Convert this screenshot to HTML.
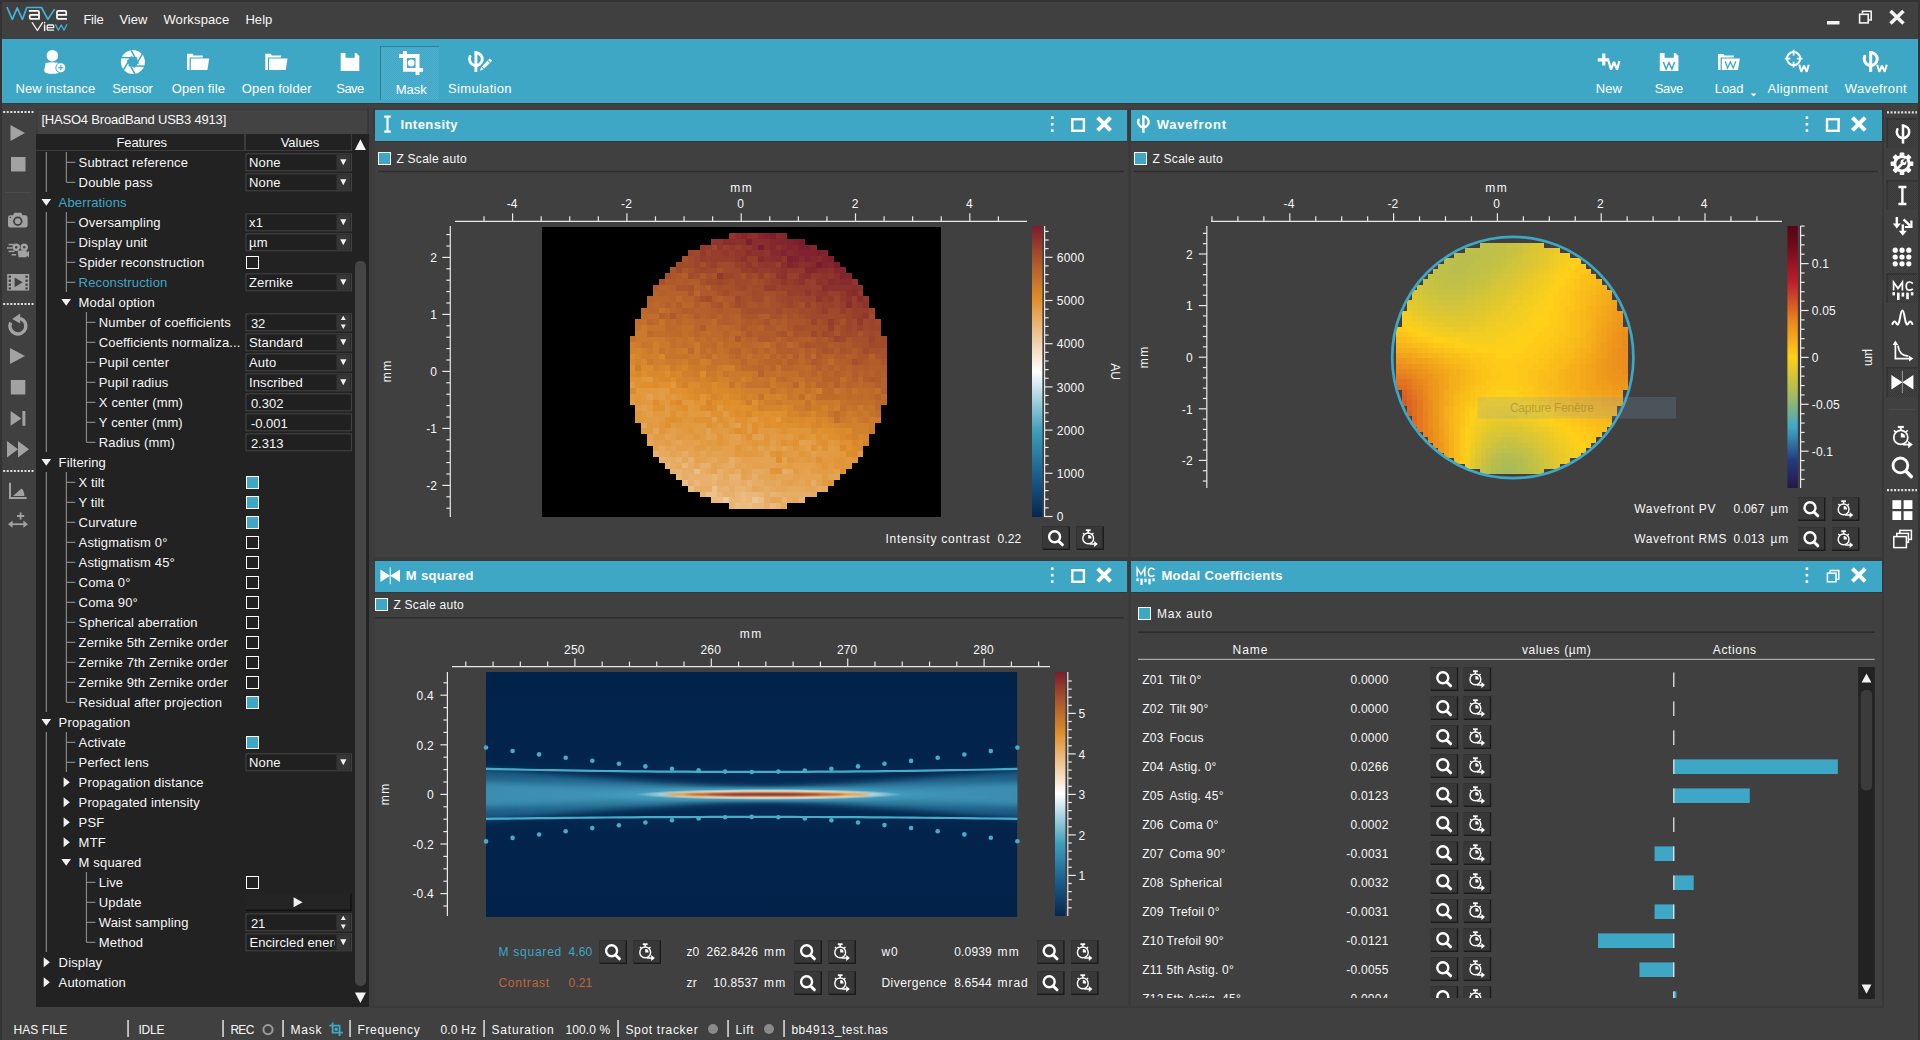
<!DOCTYPE html>
<html><head><meta charset="utf-8"><title>WaveView</title>
<style>
html,body{margin:0;padding:0;background:#404040;}
body{width:1920px;height:1040px;overflow:hidden;position:relative;font-family:"Liberation Sans",sans-serif;}
#r{position:absolute;left:0;top:0;width:1920px;height:1040px;overflow:hidden;}
#r div,#r span,#r svg{position:absolute;}
#r span{white-space:nowrap;display:block;}
</style></head><body><div id="r">
<div style="left:0px;top:0px;width:1920px;height:1040px;background:#333333;"></div><div style="left:2px;top:2px;width:1916px;height:1038px;background:#404040;"></div><div style="left:2px;top:39px;width:1916px;height:64px;background:#3fa7c6;"></div><div style="left:2px;top:103px;width:1916px;height:1.3px;background:#3a3a3a;"></div><div style="left:36px;top:110px;width:331px;height:897px;background:#222222;"></div><div style="left:367px;top:108px;width:2px;height:26px;background:#383838;"></div><div style="left:373px;top:108px;width:2px;height:26px;background:#383838;"></div><div style="left:367px;top:134px;width:2px;height:873px;background:#222222;"></div><div style="left:369px;top:134px;width:6px;height:874px;background:#3d3d3d;"></div><div style="left:36px;top:108.5px;width:331px;height:25.5px;background:#434343;"></div><div style="left:36px;top:108.5px;width:331px;height:1px;background:#3c3c3c;"></div><div style="left:36px;top:108.5px;width:1.5px;height:25.5px;background:#3c3c3c;"></div><div style="left:36px;top:149.6px;width:316px;height:1.6px;background:#3c3c3c;"></div><div style="left:244px;top:134px;width:1.6px;height:16px;background:#3c3c3c;"></div><div style="left:350.6px;top:134px;width:1.6px;height:17px;background:#3c3c3c;"></div><div style="left:355.2px;top:261px;width:10.6px;height:725px;background:#454545;border-radius:5px;"></div><div style="left:375px;top:110px;width:752.5px;height:447px;background:#404040;"></div><div style="left:373px;top:557px;width:756px;height:4px;background:#3a3a3a;"></div><div style="left:1127.5px;top:108px;width:3.5px;height:900px;background:#3a3a3a;"></div><div style="left:375px;top:110px;width:752.3px;height:31px;background:#3fa7c6;"></div><div style="left:375px;top:141px;width:752.3px;height:1px;background:#3a3636;"></div><div style="left:1131px;top:110px;width:751px;height:447px;background:#404040;"></div><div style="left:1131px;top:557px;width:751px;height:4px;background:#3a3a3a;"></div><div style="left:1131px;top:110px;width:751px;height:31px;background:#3fa7c6;"></div><div style="left:1131px;top:141px;width:751px;height:1px;background:#3a3636;"></div><div style="left:375px;top:561px;width:752.5px;height:445px;background:#404040;"></div><div style="left:373px;top:1006px;width:1510px;height:2px;background:#3a3a3a;"></div><div style="left:375px;top:561px;width:752.3px;height:31px;background:#3fa7c6;"></div><div style="left:375px;top:592px;width:752.3px;height:1px;background:#3a3636;"></div><div style="left:1131px;top:561px;width:751px;height:445px;background:#404040;"></div><div style="left:1131px;top:561px;width:751px;height:31px;background:#3fa7c6;"></div><div style="left:1131px;top:592px;width:751px;height:1px;background:#3a3636;"></div><div style="left:1882px;top:108px;width:2px;height:900px;background:#383838;"></div><div style="left:1884px;top:110px;width:34px;height:447px;background:#404040;"></div><div style="left:2px;top:1008px;width:1916px;height:32px;background:#404040;"></div>
<svg style="left:0;top:0" width="1920" height="1040" viewBox="0 0 1920 1040"><defs><pattern id="hatchT" width="2" height="2" patternUnits="userSpaceOnUse"><rect width="2" height="2" fill="#4fb1cf"/><rect width="1" height="1" fill="#3fa7c6"/><rect x="1" y="1" width="1" height="1" fill="#3fa7c6"/></pattern><linearGradient id="cbI" x1="0" y1="1" x2="0" y2="0"><stop offset="0.0%" stop-color="#06264f"/><stop offset="14.9%" stop-color="#1b6090"/><stop offset="29.9%" stop-color="#3fa0bd"/><stop offset="44.8%" stop-color="#cfe6ee"/><stop offset="50.0%" stop-color="#ffffff"/><stop offset="59.7%" stop-color="#f1d2ac"/><stop offset="74.6%" stop-color="#df8f2c"/><stop offset="89.6%" stop-color="#a54f2b"/><stop offset="100.0%" stop-color="#7a1c2e"/></linearGradient><linearGradient id="cbW" x1="0" y1="1" x2="0" y2="0"><stop offset="0.0%" stop-color="#281646"/><stop offset="10.7%" stop-color="#233c82"/><stop offset="23.2%" stop-color="#3fa7c6"/><stop offset="35.7%" stop-color="#a8ba5a"/><stop offset="50.0%" stop-color="#ffd018"/><stop offset="64.3%" stop-color="#e8821e"/><stop offset="78.6%" stop-color="#be1e2d"/><stop offset="92.9%" stop-color="#6e0a19"/><stop offset="100.0%" stop-color="#550514"/></linearGradient><linearGradient id="m2bg" x1="0" y1="0" x2="0" y2="1"><stop offset="0" stop-color="#02224a"/><stop offset="0.35" stop-color="#02244c"/><stop offset="0.5" stop-color="#052e58"/><stop offset="0.65" stop-color="#02244c"/><stop offset="1" stop-color="#02224a"/></linearGradient><linearGradient id="m2haze" x1="0" y1="0" x2="0" y2="1"><stop offset="0" stop-color="#2a86ad" stop-opacity="0"/><stop offset="0.22" stop-color="#1f6f9b" stop-opacity="0.75"/><stop offset="0.5" stop-color="#3a98ba" stop-opacity="0.95"/><stop offset="0.78" stop-color="#1f6f9b" stop-opacity="0.75"/><stop offset="1" stop-color="#2a86ad" stop-opacity="0"/></linearGradient><radialGradient id="m2c1"><stop offset="0" stop-color="#7cc6da" stop-opacity="1"/><stop offset="0.5" stop-color="#4fa9c6" stop-opacity="0.75"/><stop offset="1" stop-color="#3a98ba" stop-opacity="0"/></radialGradient><radialGradient id="m2c2"><stop offset="0" stop-color="#fff" stop-opacity="1"/><stop offset="0.62" stop-color="#fff" stop-opacity="0.95"/><stop offset="1" stop-color="#fff" stop-opacity="0"/></radialGradient><filter id="bl1" x="-10%" y="-100%" width="120%" height="300%"><feGaussianBlur stdDeviation="1.2 0.9"/></filter><clipPath id="m2clip"><rect x="486" y="672" width="531.4" height="245"/></clipPath><linearGradient id="m2hg" x1="0" y1="0" x2="1" y2="0"><stop offset="0" stop-color="#2a78a2" stop-opacity="0.9"/><stop offset="0.25" stop-color="#3a93b6" stop-opacity="0.95"/><stop offset="0.42" stop-color="#5fb6d0"/><stop offset="0.6" stop-color="#5fb6d0"/><stop offset="0.78" stop-color="#3a93b6" stop-opacity="0.95"/><stop offset="1" stop-color="#2a78a2" stop-opacity="0.9"/></linearGradient><filter id="bl2" x="-5%" y="-50%" width="110%" height="200%"><feGaussianBlur stdDeviation="3 3.2"/></filter><pattern id="hatchG" width="2" height="2" patternUnits="userSpaceOnUse"><rect width="2" height="2" fill="#424242"/><rect width="1" height="1" fill="#383838"/><rect x="1" y="1" width="1" height="1" fill="#383838"/></pattern></defs>
<g fill="none" stroke-linejoin="round" stroke-linecap="round"><path d="M7.2 7.6 L12.3 19.4 L17.2 7.8 L22.4 19.4 L26.8 7.5 H41.5 L47.9 19.4 L54.2 9.6" stroke="#41b3d6" stroke-width="1.7"/><path d="M29.6 10.9 H37.8 Q39 10.9 39 12.1 V18.9 H30.8 Q29.7 18.9 29.7 17.8 V15.9 Q29.7 14.8 30.8 14.8 H39" stroke="#fff" stroke-width="1.7"/><path d="M66.2 18.9 H58.2 Q57 18.9 57 17.7 V12.1 Q57 10.9 58.2 10.9 H65 Q66.2 10.9 66.2 12.1 V14.9 H57" stroke="#fff" stroke-width="1.7"/><path d="M32.2 22.6 L37.4 30.5 L42.5 22.6" stroke="#f4f4f4" stroke-width="1.3"/><path d="M44.6 25 V30.6 M44.6 22.4 V22.9" stroke="#f4f4f4" stroke-width="1.4"/><path d="M53.6 30.2 H48.2 Q47.2 30.2 47.2 29.2 V26 Q47.2 25 48.2 25 H52.7 Q53.7 25 53.7 26 V27.6 H47.2" stroke="#f4f4f4" stroke-width="1.3"/><path d="M55.6 24.8 L58.4 30.3 L61.2 25 L64 30.3 L66.8 24.8" stroke="#41b3d6" stroke-width="1.3"/></g>
<rect x="1827" y="21" width="12.5" height="3.5" fill="#f2f2f2" />
<g fill="none" stroke="#f2f2f2" stroke-width="1.6"><path d="M1862.5 13.5 V11.3 H1871.2 V20 H1869"/><rect x="1859.6" y="14.3" width="8.6" height="8.6"/></g>
<path d="M1890.5 11 L1903.5 23.5 M1903.5 11 L1890.5 23.5" stroke="#f2f2f2" stroke-width="3.6" fill="none"/>
<rect x="380" y="46" width="59" height="54" fill="url(#hatchT)" />
<rect x="380" y="46" width="59" height="1" fill="#2f7f98" />
<rect x="380" y="46" width="1" height="54" fill="#2f7f98" />
<g fill="#fff"><circle cx="52.4" cy="55.7" r="5.8"/><path d="M45.6 63 Q52.4 61.6 59.2 63 L60.6 70.6 Q60.6 72.4 58.6 72.9 Q52.4 74.6 46.2 72.9 Q44.2 72.4 44.2 70.6 Z"/><circle cx="60.8" cy="67.7" r="5.4" fill="#3fa7c6"/><circle cx="60.8" cy="67.7" r="4.5"/><path d="M60.8 64.9 V70.5 M58 67.7 H63.6" stroke="#3fa7c6" stroke-width="1.1" fill="none"/></g>
<circle cx="132.9" cy="61.9" r="12.0" fill="#fff"/>
<path d="M144.74 66.21 L128.62 65.75 M135.09 74.31 L127.42 60.12 M123.25 70.00 L131.70 56.27 M121.06 57.59 L137.18 58.05 M130.71 49.49 L138.38 63.68 M142.55 53.80 L134.10 67.53" stroke="#3fa7c6" stroke-width="1.5" fill="none"/>
<polygon points="138.15,63.61 134.05,67.30 128.80,65.59 127.65,60.19 131.75,56.50 137.00,58.21" fill="#3fa7c6"/>
<g fill="#fff" transform="translate(187,53.8)"><path d="M0 0 H5.5 L6.5 1.6 H15.8 V3.6 H2.6 V16.3 H0 Z"/><path d="M3.8 4.6 H22.2 L20.4 16.3 H3.8 Z"/></g>
<g fill="#fff" transform="translate(265.3,53.8)"><path d="M0 0 H5.5 L6.5 1.6 H15.8 V3.6 H2.6 V16.3 H0 Z"/><path d="M3.8 4.6 H22.2 L20.4 16.3 H3.8 Z"/></g>
<g transform="translate(340.7,53)"><path d="M0 0 H15.5 L18.6 3 V18 H0 Z" fill="#fff"/><rect x="4.8" y="0" width="9.2" height="4.8" fill="#3fa7c6"/></g>
<g fill="none" stroke="#fff" stroke-width="3.9"><path d="M405 51 V69.85 H423.1"/><path d="M399.2 55.95 H417.55 V74.9"/></g><circle cx="411.2" cy="63" r="3.4" fill="#fff"/>
<g fill="none" stroke="#fff" stroke-width="2.9"><path d="M475.90 52.75 A6.4 6.4 0 1 1 470.10 56.45" stroke-linecap="round"/><path d="M475.90 51.30 V71.90"/></g>
<g transform="translate(490.9,59.6) rotate(45)"><rect x="-1.7" y="0" width="3.4" height="11" fill="#fff"/><path d="M-1.7 12 H1.7 L0 15.6 Z" fill="#fff"/><rect x="-1.7" y="2.3" width="3.4" height="0.9" fill="#3fa7c6"/></g>
<path d="M1603.8 53.5 V65.6 M1597.7 59.8 H1609.3" stroke="#fff" stroke-width="3.2" fill="none"/>
<path d="M1608.6 61 L1610.98 69.6 L1614.00 62.03 L1617.02 69.6 L1619.3999999999999 61" stroke="#fff" stroke-width="2.2" fill="none" stroke-linejoin="bevel"/>
<g transform="translate(1659.8,53)"><path d="M0 0 H15.5 L18.6 3 V18 H0 Z" fill="#fff"/><rect x="4.8" y="0" width="9.2" height="4.8" fill="#3fa7c6"/><path d="M3.6 9 L6.3 16 L9.2 9.6 L12.1 16 L14.8 9" stroke="#3fa7c6" stroke-width="1.5" fill="none"/></g>
<g transform="translate(1718,54)"><path d="M0 0 H5.5 L6.5 1.6 H15.8 V3.6 H2.6 V16 H0 Z" fill="#fff"/><path d="M3.8 4.6 H21.8 L20 16 H3.8 Z" fill="#fff"/><path d="M7.2 7.2 L9.6 14 L12.4 7.8 L15.2 14 L17.8 7.2" stroke="#3fa7c6" stroke-width="1.3" fill="none"/></g>
<path d="M1750.8 93.5 H1756.4 L1753.6 96.6 Z" fill="#fff"/>
<g fill="none" stroke="#fff"><circle cx="1793.6" cy="58.6" r="6.6" stroke-width="2"/><path d="M1793.6 49.8 V55.4 M1793.6 61.8 V67.4 M1784.8 58.6 H1790.4 M1796.8 58.6 H1802.4" stroke-width="1.8"/></g>
<path d="M1799.2 64.8 L1801.31 71.8 L1804.00 65.64 L1806.69 71.8 L1808.8 64.8" stroke="#fff" stroke-width="2" fill="none" stroke-linejoin="bevel"/>
<g fill="none" stroke="#fff" stroke-width="3"><path d="M1870.70 52.50 A6.5 6.5 0 1 1 1864.81 56.25" stroke-linecap="round"/><path d="M1870.70 51.00 V72.00"/></g>
<path d="M1877.2 64.8 L1879.31 71.8 L1882.00 65.64 L1884.69 71.8 L1886.8 64.8" stroke="#fff" stroke-width="2" fill="none" stroke-linejoin="bevel"/>
<line x1="3.2" y1="112" x2="33.5" y2="112" stroke="#e0e0e0" stroke-width="2.2" stroke-dasharray="2 1.54"/>
<path d="M10.5 125 L25 133 L10.5 141 Z" fill="#a2a2a2"/>
<rect x="11" y="157" width="14.5" height="14.5" fill="#a2a2a2" />
<line x1="5" y1="192.5" x2="31" y2="192.5" stroke="#4b4b4b" stroke-width="1" />
<g fill="#a2a2a2"><path d="M8 217.6 Q8 215.2 10.4 215.2 H13 L14.4 212.8 H21.2 L22.6 215.2 H25.2 Q27.6 215.2 27.6 217.6 V225.2 Q27.6 227.6 25.2 227.6 H10.4 Q8 227.6 8 225.2 Z"/><circle cx="17.8" cy="221.2" r="4.7" fill="#404040"/><circle cx="17.8" cy="221.2" r="2.9"/><rect x="9.6" y="216.8" width="1.4" height="1.2" fill="#404040"/></g>
<g fill="#a2a2a2"><circle cx="16.2" cy="247.2" r="3.7"/><circle cx="24.2" cy="247.2" r="3.7"/><circle cx="16.2" cy="247.2" r="1.2" fill="#404040"/><circle cx="24.2" cy="247.2" r="1.2" fill="#404040"/><path d="M17.6 250.6 H26.6 V252.4 L29 251 V257.3 L26.6 255.8 V257.3 H18.6 Z"/><rect x="8.6" y="243.8" width="5" height="1.5"/><rect x="7" y="247.2" width="5.4" height="1.5"/><rect x="8.6" y="250.6" width="6" height="1.5"/><rect x="11.6" y="254" width="4.6" height="1.5"/></g>
<g fill="#a2a2a2"><rect x="7.2" y="274" width="22" height="16.6"/><g fill="#404040"><rect x="8.6" y="275.6" width="2.4" height="2.2"/><rect x="8.6" y="279.6" width="2.4" height="2.2"/><rect x="8.6" y="283.6" width="2.4" height="2.2"/><rect x="8.6" y="287.4" width="2.4" height="2"/><rect x="25.4" y="275.6" width="2.4" height="2.2"/><rect x="25.4" y="279.6" width="2.4" height="2.2"/><rect x="25.4" y="283.6" width="2.4" height="2.2"/><rect x="25.4" y="287.4" width="2.4" height="2"/><path d="M14.6 277.4 L22.6 282.3 L14.6 287.2 Z"/></g></g>
<line x1="3.2" y1="304" x2="33.5" y2="304" stroke="#e0e0e0" stroke-width="2.2" stroke-dasharray="2 1.54"/>
<path d="M10.7 322.6 A8 8 0 1 0 20 318.3" fill="none" stroke="#a2a2a2" stroke-width="3.4"/><path d="M12.2 318.9 L20.2 313.4 L20.2 323.4 Z" fill="#a2a2a2"/>
<path d="M10 348 L25 356 L10 364 Z" fill="#a2a2a2"/>
<rect x="10.8" y="380" width="14.5" height="14.5" fill="#a2a2a2" />
<path d="M10.6 411 L21.4 418.4 L10.6 425.8 Z" fill="#a2a2a2"/>
<rect x="22.4" y="411" width="3" height="14.8" fill="#a2a2a2" />
<path d="M7 441 L18 449.2 L7 457.4 Z M18 441 L29 449.2 L18 457.4 Z" fill="#a2a2a2"/>
<line x1="3.2" y1="471" x2="33.5" y2="471" stroke="#e0e0e0" stroke-width="2.2" stroke-dasharray="2 1.54"/>
<path d="M10 482.8 V498 H26.6" fill="none" stroke="#a2a2a2" stroke-width="2"/><path d="M13 496 L21.6 488.6 Q24.2 491 24.4 496 Z" fill="#a2a2a2"/>
<g fill="none" stroke="#a2a2a2" stroke-width="1.8"><path d="M10 524.2 H26"/><path d="M20.6 512.4 V519.6 M17 516 H24.2"/></g><path d="M8 524.2 L12.6 520.6 V527.8 Z M28 524.2 L23.4 520.6 V527.8 Z" fill="#a2a2a2"/>
<path d="M354.9 149.9 L360.4 139.2 L365.9 149.9 Z" fill="#f4f4f4"/>
<path d="M354.9 992.4 L360.4 1003 L365.9 992.4 Z" fill="#f4f4f4"/>
<line x1="66.3" y1="162.3" x2="75.3" y2="162.3" stroke="#9a9a9a" stroke-width="1" />
<rect x="246" y="153.8" width="105.4" height="17" fill="#202020" stroke="#454545" stroke-width="1"/>
<rect x="336.4" y="154.7" width="14" height="15.2" fill="#363636" />
<path d="M340.2 159.3 H346.4 L343.3 165.3 Z" fill="#f2f2f2"/>
<line x1="66.3" y1="182.3" x2="75.3" y2="182.3" stroke="#9a9a9a" stroke-width="1" />
<rect x="246" y="173.8" width="105.4" height="17" fill="#202020" stroke="#454545" stroke-width="1"/>
<rect x="336.4" y="174.7" width="14" height="15.2" fill="#363636" />
<path d="M340.2 179.3 H346.4 L343.3 185.3 Z" fill="#f2f2f2"/>
<path d="M41.5 199.10000000000002 H51.099999999999994 L46.3 205.70000000000002 Z" fill="#f2f2f2"/>
<line x1="66.3" y1="222.3" x2="75.3" y2="222.3" stroke="#9a9a9a" stroke-width="1" />
<rect x="246" y="213.8" width="105.4" height="17" fill="#202020" stroke="#454545" stroke-width="1"/>
<rect x="336.4" y="214.7" width="14" height="15.2" fill="#363636" />
<path d="M340.2 219.3 H346.4 L343.3 225.3 Z" fill="#f2f2f2"/>
<line x1="66.3" y1="242.3" x2="75.3" y2="242.3" stroke="#9a9a9a" stroke-width="1" />
<rect x="246" y="233.8" width="105.4" height="17" fill="#202020" stroke="#454545" stroke-width="1"/>
<rect x="336.4" y="234.7" width="14" height="15.2" fill="#363636" />
<path d="M340.2 239.3 H346.4 L343.3 245.3 Z" fill="#f2f2f2"/>
<line x1="66.3" y1="262.3" x2="75.3" y2="262.3" stroke="#9a9a9a" stroke-width="1" />
<rect x="246" y="256" width="13" height="13" fill="#ffffff" shape-rendering="crispEdges"/>
<rect x="247" y="257" width="11" height="11" fill="#222222" shape-rendering="crispEdges"/>
<line x1="66.3" y1="282.3" x2="75.3" y2="282.3" stroke="#9a9a9a" stroke-width="1" />
<rect x="246" y="273.8" width="105.4" height="17" fill="#202020" stroke="#454545" stroke-width="1"/>
<rect x="336.4" y="274.7" width="14" height="15.2" fill="#363636" />
<path d="M340.2 279.3 H346.4 L343.3 285.3 Z" fill="#f2f2f2"/>
<path d="M61.400000000000006 299.1 H71.0 L66.2 305.7 Z" fill="#f2f2f2"/>
<line x1="86.4" y1="322.3" x2="95.4" y2="322.3" stroke="#9a9a9a" stroke-width="1" />
<rect x="246" y="313.8" width="105.4" height="17" fill="#202020" stroke="#454545" stroke-width="1"/>
<rect x="336.4" y="314.7" width="14" height="15.2" fill="#363636" />
<path d="M340.8 320.1 H345.8 L343.3 315.7 Z M340.8 324.5 H345.8 L343.3 328.90000000000003 Z" fill="#f2f2f2"/>
<line x1="86.4" y1="342.3" x2="95.4" y2="342.3" stroke="#9a9a9a" stroke-width="1" />
<rect x="246" y="333.8" width="105.4" height="17" fill="#202020" stroke="#454545" stroke-width="1"/>
<rect x="336.4" y="334.7" width="14" height="15.2" fill="#363636" />
<path d="M340.2 339.3 H346.4 L343.3 345.3 Z" fill="#f2f2f2"/>
<line x1="86.4" y1="362.3" x2="95.4" y2="362.3" stroke="#9a9a9a" stroke-width="1" />
<rect x="246" y="353.8" width="105.4" height="17" fill="#202020" stroke="#454545" stroke-width="1"/>
<rect x="336.4" y="354.7" width="14" height="15.2" fill="#363636" />
<path d="M340.2 359.3 H346.4 L343.3 365.3 Z" fill="#f2f2f2"/>
<line x1="86.4" y1="382.3" x2="95.4" y2="382.3" stroke="#9a9a9a" stroke-width="1" />
<rect x="246" y="373.8" width="105.4" height="17" fill="#202020" stroke="#454545" stroke-width="1"/>
<rect x="336.4" y="374.7" width="14" height="15.2" fill="#363636" />
<path d="M340.2 379.3 H346.4 L343.3 385.3 Z" fill="#f2f2f2"/>
<line x1="86.4" y1="402.3" x2="95.4" y2="402.3" stroke="#9a9a9a" stroke-width="1" />
<rect x="246" y="393.8" width="105.4" height="17" fill="#202020" stroke="#454545" stroke-width="1"/>
<line x1="86.4" y1="422.3" x2="95.4" y2="422.3" stroke="#9a9a9a" stroke-width="1" />
<rect x="246" y="413.8" width="105.4" height="17" fill="#202020" stroke="#454545" stroke-width="1"/>
<line x1="86.4" y1="442.3" x2="95.4" y2="442.3" stroke="#9a9a9a" stroke-width="1" />
<rect x="246" y="433.8" width="105.4" height="17" fill="#202020" stroke="#454545" stroke-width="1"/>
<path d="M41.5 459.1 H51.099999999999994 L46.3 465.7 Z" fill="#f2f2f2"/>
<line x1="66.3" y1="482.3" x2="75.3" y2="482.3" stroke="#9a9a9a" stroke-width="1" />
<rect x="246" y="476" width="13" height="13" fill="#ffffff" shape-rendering="crispEdges"/>
<rect x="247" y="477" width="11" height="11" fill="#3fa7c6" shape-rendering="crispEdges"/>
<line x1="66.3" y1="502.3" x2="75.3" y2="502.3" stroke="#9a9a9a" stroke-width="1" />
<rect x="246" y="496" width="13" height="13" fill="#ffffff" shape-rendering="crispEdges"/>
<rect x="247" y="497" width="11" height="11" fill="#3fa7c6" shape-rendering="crispEdges"/>
<line x1="66.3" y1="522.3" x2="75.3" y2="522.3" stroke="#9a9a9a" stroke-width="1" />
<rect x="246" y="516" width="13" height="13" fill="#ffffff" shape-rendering="crispEdges"/>
<rect x="247" y="517" width="11" height="11" fill="#3fa7c6" shape-rendering="crispEdges"/>
<line x1="66.3" y1="542.3" x2="75.3" y2="542.3" stroke="#9a9a9a" stroke-width="1" />
<rect x="246" y="536" width="13" height="13" fill="#ffffff" shape-rendering="crispEdges"/>
<rect x="247" y="537" width="11" height="11" fill="#222222" shape-rendering="crispEdges"/>
<line x1="66.3" y1="562.3" x2="75.3" y2="562.3" stroke="#9a9a9a" stroke-width="1" />
<rect x="246" y="556" width="13" height="13" fill="#ffffff" shape-rendering="crispEdges"/>
<rect x="247" y="557" width="11" height="11" fill="#222222" shape-rendering="crispEdges"/>
<line x1="66.3" y1="582.3" x2="75.3" y2="582.3" stroke="#9a9a9a" stroke-width="1" />
<rect x="246" y="576" width="13" height="13" fill="#ffffff" shape-rendering="crispEdges"/>
<rect x="247" y="577" width="11" height="11" fill="#222222" shape-rendering="crispEdges"/>
<line x1="66.3" y1="602.3" x2="75.3" y2="602.3" stroke="#9a9a9a" stroke-width="1" />
<rect x="246" y="596" width="13" height="13" fill="#ffffff" shape-rendering="crispEdges"/>
<rect x="247" y="597" width="11" height="11" fill="#222222" shape-rendering="crispEdges"/>
<line x1="66.3" y1="622.3" x2="75.3" y2="622.3" stroke="#9a9a9a" stroke-width="1" />
<rect x="246" y="616" width="13" height="13" fill="#ffffff" shape-rendering="crispEdges"/>
<rect x="247" y="617" width="11" height="11" fill="#222222" shape-rendering="crispEdges"/>
<line x1="66.3" y1="642.3" x2="75.3" y2="642.3" stroke="#9a9a9a" stroke-width="1" />
<rect x="246" y="636" width="13" height="13" fill="#ffffff" shape-rendering="crispEdges"/>
<rect x="247" y="637" width="11" height="11" fill="#222222" shape-rendering="crispEdges"/>
<line x1="66.3" y1="662.3" x2="75.3" y2="662.3" stroke="#9a9a9a" stroke-width="1" />
<rect x="246" y="656" width="13" height="13" fill="#ffffff" shape-rendering="crispEdges"/>
<rect x="247" y="657" width="11" height="11" fill="#222222" shape-rendering="crispEdges"/>
<line x1="66.3" y1="682.3" x2="75.3" y2="682.3" stroke="#9a9a9a" stroke-width="1" />
<rect x="246" y="676" width="13" height="13" fill="#ffffff" shape-rendering="crispEdges"/>
<rect x="247" y="677" width="11" height="11" fill="#222222" shape-rendering="crispEdges"/>
<line x1="66.3" y1="702.3" x2="75.3" y2="702.3" stroke="#9a9a9a" stroke-width="1" />
<rect x="246" y="696" width="13" height="13" fill="#ffffff" shape-rendering="crispEdges"/>
<rect x="247" y="697" width="11" height="11" fill="#3fa7c6" shape-rendering="crispEdges"/>
<path d="M41.5 719.0999999999999 H51.099999999999994 L46.3 725.6999999999999 Z" fill="#f2f2f2"/>
<line x1="66.3" y1="742.3" x2="75.3" y2="742.3" stroke="#9a9a9a" stroke-width="1" />
<rect x="246" y="736" width="13" height="13" fill="#ffffff" shape-rendering="crispEdges"/>
<rect x="247" y="737" width="11" height="11" fill="#3fa7c6" shape-rendering="crispEdges"/>
<line x1="66.3" y1="762.3" x2="75.3" y2="762.3" stroke="#9a9a9a" stroke-width="1" />
<rect x="246" y="753.8" width="105.4" height="17" fill="#202020" stroke="#454545" stroke-width="1"/>
<rect x="336.4" y="754.7" width="14" height="15.2" fill="#363636" />
<path d="M340.2 759.3 H346.4 L343.3 765.3 Z" fill="#f2f2f2"/>
<path d="M63.6 777.3 L69.8 782.3 L63.6 787.3 Z" fill="#f2f2f2"/>
<path d="M63.6 797.3 L69.8 802.3 L63.6 807.3 Z" fill="#f2f2f2"/>
<path d="M63.6 817.3 L69.8 822.3 L63.6 827.3 Z" fill="#f2f2f2"/>
<path d="M63.6 837.3 L69.8 842.3 L63.6 847.3 Z" fill="#f2f2f2"/>
<path d="M61.400000000000006 859.0999999999999 H71.0 L66.2 865.6999999999999 Z" fill="#f2f2f2"/>
<line x1="86.4" y1="882.3" x2="95.4" y2="882.3" stroke="#9a9a9a" stroke-width="1" />
<rect x="246" y="876" width="13" height="13" fill="#ffffff" shape-rendering="crispEdges"/>
<rect x="247" y="877" width="11" height="11" fill="#222222" shape-rendering="crispEdges"/>
<line x1="86.4" y1="902.3" x2="95.4" y2="902.3" stroke="#9a9a9a" stroke-width="1" />
<rect x="246" y="893.8" width="105.4" height="17" fill="#242424" />
<rect x="246" y="909.5" width="105.4" height="1.6" fill="#111" />
<rect x="350.2" y="893.8" width="1.4" height="17" fill="#111" />
<path d="M293.6 897.3 L302.6 902.3 L293.6 907.3 Z" fill="#f2f2f2"/>
<line x1="86.4" y1="922.3" x2="95.4" y2="922.3" stroke="#9a9a9a" stroke-width="1" />
<rect x="246" y="913.8" width="105.4" height="17" fill="#202020" stroke="#454545" stroke-width="1"/>
<rect x="336.4" y="914.7" width="14" height="15.2" fill="#363636" />
<path d="M340.8 920.0999999999999 H345.8 L343.3 915.6999999999999 Z M340.8 924.5 H345.8 L343.3 928.9 Z" fill="#f2f2f2"/>
<line x1="86.4" y1="942.3" x2="95.4" y2="942.3" stroke="#9a9a9a" stroke-width="1" />
<rect x="246" y="933.8" width="105.4" height="17" fill="#202020" stroke="#454545" stroke-width="1"/>
<rect x="336.4" y="934.7" width="14" height="15.2" fill="#363636" />
<path d="M340.2 939.3 H346.4 L343.3 945.3 Z" fill="#f2f2f2"/>
<path d="M43.699999999999996 957.3 L49.9 962.3 L43.699999999999996 967.3 Z" fill="#f2f2f2"/>
<path d="M43.699999999999996 977.3 L49.9 982.3 L43.699999999999996 987.3 Z" fill="#f2f2f2"/>
<line x1="46.3" y1="152" x2="46.3" y2="192" stroke="#9a9a9a" stroke-width="1" />
<line x1="46.3" y1="212" x2="46.3" y2="452" stroke="#9a9a9a" stroke-width="1" />
<line x1="46.3" y1="472" x2="46.3" y2="712" stroke="#9a9a9a" stroke-width="1" />
<line x1="46.3" y1="732" x2="46.3" y2="952" stroke="#9a9a9a" stroke-width="1" />
<line x1="66.3" y1="152" x2="66.3" y2="182.3" stroke="#9a9a9a" stroke-width="1" />
<line x1="66.3" y1="212" x2="66.3" y2="292" stroke="#9a9a9a" stroke-width="1" />
<line x1="66.3" y1="472" x2="66.3" y2="702.3" stroke="#9a9a9a" stroke-width="1" />
<line x1="66.3" y1="732" x2="66.3" y2="772" stroke="#9a9a9a" stroke-width="1" />
<line x1="86.4" y1="312" x2="86.4" y2="442.3" stroke="#9a9a9a" stroke-width="1" />
<line x1="86.4" y1="872" x2="86.4" y2="942.3" stroke="#9a9a9a" stroke-width="1" />
<rect x="1050.9" y="116.4" width="2.6" height="2.6" fill="#fff" />
<rect x="1050.9" y="122.9" width="2.6" height="2.6" fill="#fff" />
<rect x="1050.9" y="129.3" width="2.6" height="2.6" fill="#fff" />
<rect x="1072.3" y="119.2" width="11.6" height="11.6" fill="none" stroke="#fff" stroke-width="2.4"/>
<path d="M1097.6999999999998 117.6 L1110.5 130.4 M1110.5 117.6 L1097.6999999999998 130.4" stroke="#fff" stroke-width="4" fill="none"/>
<path d="M384.2 116.6 H390.8 M384.2 131.6 H390.8 M387.5 116.6 V131.6" stroke="#fff" stroke-width="2.2" fill="none"/>
<rect x="378" y="152" width="13" height="13" fill="#ffffff" shape-rendering="crispEdges"/>
<rect x="379" y="153" width="11" height="11" fill="#3fa7c6" shape-rendering="crispEdges"/>
<line x1="378" y1="171.5" x2="1123.6" y2="171.5" stroke="#2c2c2c" stroke-width="1.4" />
<line x1="455" y1="221.3" x2="1027" y2="221.3" stroke="#e8e8e8" stroke-width="1.2" />
<line x1="484.025" y1="221.3" x2="484.025" y2="216.3" stroke="#e8e8e8" stroke-width="1.2" />
<line x1="512.6" y1="221.3" x2="512.6" y2="213.3" stroke="#e8e8e8" stroke-width="1.2" />
<line x1="541.175" y1="221.3" x2="541.175" y2="216.3" stroke="#e8e8e8" stroke-width="1.2" />
<line x1="569.75" y1="221.3" x2="569.75" y2="216.3" stroke="#e8e8e8" stroke-width="1.2" />
<line x1="598.325" y1="221.3" x2="598.325" y2="216.3" stroke="#e8e8e8" stroke-width="1.2" />
<line x1="626.9" y1="221.3" x2="626.9" y2="213.3" stroke="#e8e8e8" stroke-width="1.2" />
<line x1="655.475" y1="221.3" x2="655.475" y2="216.3" stroke="#e8e8e8" stroke-width="1.2" />
<line x1="684.05" y1="221.3" x2="684.05" y2="216.3" stroke="#e8e8e8" stroke-width="1.2" />
<line x1="712.625" y1="221.3" x2="712.625" y2="216.3" stroke="#e8e8e8" stroke-width="1.2" />
<line x1="741.2" y1="221.3" x2="741.2" y2="213.3" stroke="#e8e8e8" stroke-width="1.2" />
<line x1="769.775" y1="221.3" x2="769.775" y2="216.3" stroke="#e8e8e8" stroke-width="1.2" />
<line x1="798.35" y1="221.3" x2="798.35" y2="216.3" stroke="#e8e8e8" stroke-width="1.2" />
<line x1="826.925" y1="221.3" x2="826.925" y2="216.3" stroke="#e8e8e8" stroke-width="1.2" />
<line x1="855.5" y1="221.3" x2="855.5" y2="213.3" stroke="#e8e8e8" stroke-width="1.2" />
<line x1="884.075" y1="221.3" x2="884.075" y2="216.3" stroke="#e8e8e8" stroke-width="1.2" />
<line x1="912.65" y1="221.3" x2="912.65" y2="216.3" stroke="#e8e8e8" stroke-width="1.2" />
<line x1="941.225" y1="221.3" x2="941.225" y2="216.3" stroke="#e8e8e8" stroke-width="1.2" />
<line x1="969.8" y1="221.3" x2="969.8" y2="213.3" stroke="#e8e8e8" stroke-width="1.2" />
<line x1="998.375" y1="221.3" x2="998.375" y2="216.3" stroke="#e8e8e8" stroke-width="1.2" />
<line x1="450.3" y1="226" x2="450.3" y2="517" stroke="#e8e8e8" stroke-width="1.2" />
<line x1="450.3" y1="508.2" x2="446.3" y2="508.2" stroke="#e8e8e8" stroke-width="1.2" />
<line x1="450.3" y1="496.8" x2="446.3" y2="496.8" stroke="#e8e8e8" stroke-width="1.2" />
<line x1="450.3" y1="485.4" x2="442.3" y2="485.4" stroke="#e8e8e8" stroke-width="1.2" />
<line x1="450.3" y1="474" x2="446.3" y2="474" stroke="#e8e8e8" stroke-width="1.2" />
<line x1="450.3" y1="462.6" x2="446.3" y2="462.6" stroke="#e8e8e8" stroke-width="1.2" />
<line x1="450.3" y1="451.2" x2="446.3" y2="451.2" stroke="#e8e8e8" stroke-width="1.2" />
<line x1="450.3" y1="439.8" x2="446.3" y2="439.8" stroke="#e8e8e8" stroke-width="1.2" />
<line x1="450.3" y1="428.4" x2="442.3" y2="428.4" stroke="#e8e8e8" stroke-width="1.2" />
<line x1="450.3" y1="417" x2="446.3" y2="417" stroke="#e8e8e8" stroke-width="1.2" />
<line x1="450.3" y1="405.6" x2="446.3" y2="405.6" stroke="#e8e8e8" stroke-width="1.2" />
<line x1="450.3" y1="394.2" x2="446.3" y2="394.2" stroke="#e8e8e8" stroke-width="1.2" />
<line x1="450.3" y1="382.8" x2="446.3" y2="382.8" stroke="#e8e8e8" stroke-width="1.2" />
<line x1="450.3" y1="371.4" x2="442.3" y2="371.4" stroke="#e8e8e8" stroke-width="1.2" />
<line x1="450.3" y1="360" x2="446.3" y2="360" stroke="#e8e8e8" stroke-width="1.2" />
<line x1="450.3" y1="348.6" x2="446.3" y2="348.6" stroke="#e8e8e8" stroke-width="1.2" />
<line x1="450.3" y1="337.2" x2="446.3" y2="337.2" stroke="#e8e8e8" stroke-width="1.2" />
<line x1="450.3" y1="325.8" x2="446.3" y2="325.8" stroke="#e8e8e8" stroke-width="1.2" />
<line x1="450.3" y1="314.4" x2="442.3" y2="314.4" stroke="#e8e8e8" stroke-width="1.2" />
<line x1="450.3" y1="303" x2="446.3" y2="303" stroke="#e8e8e8" stroke-width="1.2" />
<line x1="450.3" y1="291.6" x2="446.3" y2="291.6" stroke="#e8e8e8" stroke-width="1.2" />
<line x1="450.3" y1="280.2" x2="446.3" y2="280.2" stroke="#e8e8e8" stroke-width="1.2" />
<line x1="450.3" y1="268.8" x2="446.3" y2="268.8" stroke="#e8e8e8" stroke-width="1.2" />
<line x1="450.3" y1="257.4" x2="442.3" y2="257.4" stroke="#e8e8e8" stroke-width="1.2" />
<line x1="450.3" y1="246" x2="446.3" y2="246" stroke="#e8e8e8" stroke-width="1.2" />
<line x1="450.3" y1="234.6" x2="446.3" y2="234.6" stroke="#e8e8e8" stroke-width="1.2" />
<rect x="542" y="227" width="399" height="290" fill="#000" />
<g transform="translate(542,227.3) scale(5.84,5.74)" shape-rendering="crispEdges"><path fill="#efcb9f" d="M31 47h1.03v1.03h-1.03z"/><path fill="#edc592" d="M36 47h1.03v1.03h-1.03z"/><path fill="#ecc18c" d="M29 45h1.03v1.03h-1.03zM28 46h1.03v1.03h-1.03zM29 46h1.03v1.03h-1.03z"/><path fill="#ecbe86" d="M26 42h1.03v1.03h-1.03zM24 44h1.03v1.03h-1.03zM25 45h1.03v1.03h-1.03zM30 47h1.03v1.03h-1.03zM37 47h1.03v1.03h-1.03zM33 48h1.03v1.03h-1.03zM35 48h1.03v1.03h-1.03z"/><path fill="#ebbb7f" d="M34 46h1.03v1.03h-1.03zM29 47h1.03v1.03h-1.03zM34 47h1.03v1.03h-1.03zM34 48h1.03v1.03h-1.03zM39 48h1.03v1.03h-1.03z"/><path fill="#eab779" d="M24 41h1.03v1.03h-1.03zM23 43h1.03v1.03h-1.03zM29 43h1.03v1.03h-1.03zM26 44h1.03v1.03h-1.03zM27 46h1.03v1.03h-1.03zM30 46h1.03v1.03h-1.03zM33 46h1.03v1.03h-1.03zM35 46h1.03v1.03h-1.03zM36 46h1.03v1.03h-1.03zM32 47h1.03v1.03h-1.03zM33 47h1.03v1.03h-1.03zM35 47h1.03v1.03h-1.03zM36 48h1.03v1.03h-1.03zM37 48h1.03v1.03h-1.03z"/><path fill="#e9b472" d="M21 41h1.03v1.03h-1.03zM23 42h1.03v1.03h-1.03zM32 43h1.03v1.03h-1.03zM33 43h1.03v1.03h-1.03zM29 44h1.03v1.03h-1.03zM35 44h1.03v1.03h-1.03zM31 45h1.03v1.03h-1.03zM33 45h1.03v1.03h-1.03zM34 45h1.03v1.03h-1.03zM37 46h1.03v1.03h-1.03zM39 46h1.03v1.03h-1.03zM41 47h1.03v1.03h-1.03zM44 47h1.03v1.03h-1.03zM32 48h1.03v1.03h-1.03zM40 48h1.03v1.03h-1.03z"/><path fill="#e8b06c" d="M19 39h1.03v1.03h-1.03zM20 40h1.03v1.03h-1.03zM23 40h1.03v1.03h-1.03zM25 40h1.03v1.03h-1.03zM27 41h1.03v1.03h-1.03zM28 41h1.03v1.03h-1.03zM22 42h1.03v1.03h-1.03zM30 42h1.03v1.03h-1.03zM25 43h1.03v1.03h-1.03zM26 43h1.03v1.03h-1.03zM27 43h1.03v1.03h-1.03zM28 43h1.03v1.03h-1.03zM30 43h1.03v1.03h-1.03zM36 43h1.03v1.03h-1.03zM25 44h1.03v1.03h-1.03zM27 44h1.03v1.03h-1.03zM28 44h1.03v1.03h-1.03zM32 44h1.03v1.03h-1.03zM33 44h1.03v1.03h-1.03zM26 45h1.03v1.03h-1.03zM30 45h1.03v1.03h-1.03zM35 45h1.03v1.03h-1.03zM31 46h1.03v1.03h-1.03zM32 46h1.03v1.03h-1.03zM40 46h1.03v1.03h-1.03zM38 48h1.03v1.03h-1.03z"/><path fill="#e7ad66" d="M24 39h1.03v1.03h-1.03zM21 40h1.03v1.03h-1.03zM22 40h1.03v1.03h-1.03zM32 40h1.03v1.03h-1.03zM22 41h1.03v1.03h-1.03zM25 41h1.03v1.03h-1.03zM32 41h1.03v1.03h-1.03zM24 42h1.03v1.03h-1.03zM25 42h1.03v1.03h-1.03zM27 42h1.03v1.03h-1.03zM33 42h1.03v1.03h-1.03zM41 42h1.03v1.03h-1.03zM24 43h1.03v1.03h-1.03zM30 44h1.03v1.03h-1.03zM31 44h1.03v1.03h-1.03zM34 44h1.03v1.03h-1.03zM36 44h1.03v1.03h-1.03zM37 44h1.03v1.03h-1.03zM46 44h1.03v1.03h-1.03zM27 45h1.03v1.03h-1.03zM28 45h1.03v1.03h-1.03zM32 45h1.03v1.03h-1.03zM38 45h1.03v1.03h-1.03zM47 45h1.03v1.03h-1.03zM38 46h1.03v1.03h-1.03zM41 46h1.03v1.03h-1.03zM42 46h1.03v1.03h-1.03zM43 46h1.03v1.03h-1.03zM44 46h1.03v1.03h-1.03zM45 46h1.03v1.03h-1.03zM38 47h1.03v1.03h-1.03zM42 47h1.03v1.03h-1.03z"/><path fill="#e6aa5f" d="M20 38h1.03v1.03h-1.03zM20 39h1.03v1.03h-1.03zM21 39h1.03v1.03h-1.03zM29 40h1.03v1.03h-1.03zM23 41h1.03v1.03h-1.03zM31 41h1.03v1.03h-1.03zM28 42h1.03v1.03h-1.03zM31 42h1.03v1.03h-1.03zM36 42h1.03v1.03h-1.03zM37 42h1.03v1.03h-1.03zM42 42h1.03v1.03h-1.03zM31 43h1.03v1.03h-1.03zM40 44h1.03v1.03h-1.03zM37 45h1.03v1.03h-1.03zM39 45h1.03v1.03h-1.03zM42 45h1.03v1.03h-1.03zM43 45h1.03v1.03h-1.03zM44 45h1.03v1.03h-1.03zM48 45h1.03v1.03h-1.03zM46 46h1.03v1.03h-1.03zM43 47h1.03v1.03h-1.03zM41 48h1.03v1.03h-1.03z"/><path fill="#e5a659" d="M17 34h1.03v1.03h-1.03zM19 35h1.03v1.03h-1.03zM18 37h1.03v1.03h-1.03zM23 37h1.03v1.03h-1.03zM22 38h1.03v1.03h-1.03zM23 39h1.03v1.03h-1.03zM27 39h1.03v1.03h-1.03zM24 40h1.03v1.03h-1.03zM28 40h1.03v1.03h-1.03zM33 40h1.03v1.03h-1.03zM26 41h1.03v1.03h-1.03zM30 41h1.03v1.03h-1.03zM34 41h1.03v1.03h-1.03zM32 42h1.03v1.03h-1.03zM38 42h1.03v1.03h-1.03zM35 43h1.03v1.03h-1.03zM37 43h1.03v1.03h-1.03zM38 43h1.03v1.03h-1.03zM40 43h1.03v1.03h-1.03zM41 43h1.03v1.03h-1.03zM42 43h1.03v1.03h-1.03zM38 44h1.03v1.03h-1.03zM39 44h1.03v1.03h-1.03zM44 44h1.03v1.03h-1.03zM36 45h1.03v1.03h-1.03zM40 45h1.03v1.03h-1.03zM41 45h1.03v1.03h-1.03zM45 45h1.03v1.03h-1.03zM46 45h1.03v1.03h-1.03zM39 47h1.03v1.03h-1.03zM40 47h1.03v1.03h-1.03z"/><path fill="#e4a352" d="M18 29h1.03v1.03h-1.03zM28 35h1.03v1.03h-1.03zM18 36h1.03v1.03h-1.03zM21 36h1.03v1.03h-1.03zM28 36h1.03v1.03h-1.03zM33 36h1.03v1.03h-1.03zM37 36h1.03v1.03h-1.03zM22 37h1.03v1.03h-1.03zM26 37h1.03v1.03h-1.03zM44 37h1.03v1.03h-1.03zM19 38h1.03v1.03h-1.03zM21 38h1.03v1.03h-1.03zM25 38h1.03v1.03h-1.03zM37 38h1.03v1.03h-1.03zM39 38h1.03v1.03h-1.03zM41 38h1.03v1.03h-1.03zM22 39h1.03v1.03h-1.03zM25 39h1.03v1.03h-1.03zM29 39h1.03v1.03h-1.03zM30 39h1.03v1.03h-1.03zM38 39h1.03v1.03h-1.03zM26 40h1.03v1.03h-1.03zM27 40h1.03v1.03h-1.03zM30 40h1.03v1.03h-1.03zM31 40h1.03v1.03h-1.03zM36 40h1.03v1.03h-1.03zM37 40h1.03v1.03h-1.03zM38 40h1.03v1.03h-1.03zM39 40h1.03v1.03h-1.03zM41 40h1.03v1.03h-1.03zM29 41h1.03v1.03h-1.03zM33 41h1.03v1.03h-1.03zM35 41h1.03v1.03h-1.03zM38 41h1.03v1.03h-1.03zM39 41h1.03v1.03h-1.03zM29 42h1.03v1.03h-1.03zM35 42h1.03v1.03h-1.03zM45 42h1.03v1.03h-1.03zM34 43h1.03v1.03h-1.03zM44 43h1.03v1.03h-1.03zM45 43h1.03v1.03h-1.03zM46 43h1.03v1.03h-1.03zM47 43h1.03v1.03h-1.03zM49 43h1.03v1.03h-1.03zM50 43h1.03v1.03h-1.03zM41 44h1.03v1.03h-1.03zM43 44h1.03v1.03h-1.03zM47 44h1.03v1.03h-1.03z"/><path fill="#e4a04c" d="M17 31h1.03v1.03h-1.03zM18 32h1.03v1.03h-1.03zM29 33h1.03v1.03h-1.03zM33 34h1.03v1.03h-1.03zM22 35h1.03v1.03h-1.03zM22 36h1.03v1.03h-1.03zM29 36h1.03v1.03h-1.03zM32 36h1.03v1.03h-1.03zM36 36h1.03v1.03h-1.03zM19 37h1.03v1.03h-1.03zM20 37h1.03v1.03h-1.03zM24 37h1.03v1.03h-1.03zM25 37h1.03v1.03h-1.03zM32 37h1.03v1.03h-1.03zM33 37h1.03v1.03h-1.03zM39 37h1.03v1.03h-1.03zM45 37h1.03v1.03h-1.03zM23 38h1.03v1.03h-1.03zM24 38h1.03v1.03h-1.03zM28 38h1.03v1.03h-1.03zM31 38h1.03v1.03h-1.03zM32 38h1.03v1.03h-1.03zM35 38h1.03v1.03h-1.03zM45 38h1.03v1.03h-1.03zM26 39h1.03v1.03h-1.03zM28 39h1.03v1.03h-1.03zM31 39h1.03v1.03h-1.03zM32 39h1.03v1.03h-1.03zM46 39h1.03v1.03h-1.03zM34 40h1.03v1.03h-1.03zM35 40h1.03v1.03h-1.03zM36 41h1.03v1.03h-1.03zM37 41h1.03v1.03h-1.03zM40 41h1.03v1.03h-1.03zM41 41h1.03v1.03h-1.03zM43 41h1.03v1.03h-1.03zM44 41h1.03v1.03h-1.03zM45 41h1.03v1.03h-1.03zM46 41h1.03v1.03h-1.03zM34 42h1.03v1.03h-1.03zM44 42h1.03v1.03h-1.03zM50 42h1.03v1.03h-1.03zM39 43h1.03v1.03h-1.03zM43 43h1.03v1.03h-1.03zM42 44h1.03v1.03h-1.03zM45 44h1.03v1.03h-1.03z"/><path fill="#e39c46" d="M15 27h1.03v1.03h-1.03zM20 28h1.03v1.03h-1.03zM20 29h1.03v1.03h-1.03zM15 30h1.03v1.03h-1.03zM16 31h1.03v1.03h-1.03zM18 31h1.03v1.03h-1.03zM21 31h1.03v1.03h-1.03zM17 32h1.03v1.03h-1.03zM21 32h1.03v1.03h-1.03zM28 32h1.03v1.03h-1.03zM31 32h1.03v1.03h-1.03zM18 33h1.03v1.03h-1.03zM19 33h1.03v1.03h-1.03zM36 33h1.03v1.03h-1.03zM19 34h1.03v1.03h-1.03zM22 34h1.03v1.03h-1.03zM27 34h1.03v1.03h-1.03zM30 34h1.03v1.03h-1.03zM32 34h1.03v1.03h-1.03zM35 34h1.03v1.03h-1.03zM17 35h1.03v1.03h-1.03zM21 35h1.03v1.03h-1.03zM23 35h1.03v1.03h-1.03zM26 35h1.03v1.03h-1.03zM31 35h1.03v1.03h-1.03zM35 35h1.03v1.03h-1.03zM19 36h1.03v1.03h-1.03zM20 36h1.03v1.03h-1.03zM24 36h1.03v1.03h-1.03zM25 36h1.03v1.03h-1.03zM27 36h1.03v1.03h-1.03zM31 36h1.03v1.03h-1.03zM39 36h1.03v1.03h-1.03zM42 36h1.03v1.03h-1.03zM21 37h1.03v1.03h-1.03zM27 37h1.03v1.03h-1.03zM29 37h1.03v1.03h-1.03zM34 37h1.03v1.03h-1.03zM46 37h1.03v1.03h-1.03zM26 38h1.03v1.03h-1.03zM27 38h1.03v1.03h-1.03zM29 38h1.03v1.03h-1.03zM30 38h1.03v1.03h-1.03zM34 38h1.03v1.03h-1.03zM38 38h1.03v1.03h-1.03zM40 38h1.03v1.03h-1.03zM42 38h1.03v1.03h-1.03zM44 38h1.03v1.03h-1.03zM47 38h1.03v1.03h-1.03zM49 38h1.03v1.03h-1.03zM37 39h1.03v1.03h-1.03zM42 39h1.03v1.03h-1.03zM43 39h1.03v1.03h-1.03zM47 39h1.03v1.03h-1.03zM48 39h1.03v1.03h-1.03zM44 40h1.03v1.03h-1.03zM46 40h1.03v1.03h-1.03zM42 41h1.03v1.03h-1.03zM47 41h1.03v1.03h-1.03zM49 41h1.03v1.03h-1.03zM43 42h1.03v1.03h-1.03zM46 42h1.03v1.03h-1.03zM47 42h1.03v1.03h-1.03zM48 42h1.03v1.03h-1.03zM49 42h1.03v1.03h-1.03zM48 43h1.03v1.03h-1.03zM48 44h1.03v1.03h-1.03z"/><path fill="#e2993f" d="M18 26h1.03v1.03h-1.03zM22 27h1.03v1.03h-1.03zM16 28h1.03v1.03h-1.03zM17 28h1.03v1.03h-1.03zM18 28h1.03v1.03h-1.03zM19 28h1.03v1.03h-1.03zM21 28h1.03v1.03h-1.03zM15 29h1.03v1.03h-1.03zM17 29h1.03v1.03h-1.03zM19 29h1.03v1.03h-1.03zM22 29h1.03v1.03h-1.03zM17 30h1.03v1.03h-1.03zM18 30h1.03v1.03h-1.03zM21 30h1.03v1.03h-1.03zM24 30h1.03v1.03h-1.03zM25 30h1.03v1.03h-1.03zM25 31h1.03v1.03h-1.03zM30 31h1.03v1.03h-1.03zM19 32h1.03v1.03h-1.03zM20 32h1.03v1.03h-1.03zM23 32h1.03v1.03h-1.03zM25 32h1.03v1.03h-1.03zM26 32h1.03v1.03h-1.03zM27 32h1.03v1.03h-1.03zM17 33h1.03v1.03h-1.03zM20 33h1.03v1.03h-1.03zM32 33h1.03v1.03h-1.03zM40 33h1.03v1.03h-1.03zM18 34h1.03v1.03h-1.03zM24 34h1.03v1.03h-1.03zM25 34h1.03v1.03h-1.03zM26 34h1.03v1.03h-1.03zM18 35h1.03v1.03h-1.03zM24 35h1.03v1.03h-1.03zM27 35h1.03v1.03h-1.03zM29 35h1.03v1.03h-1.03zM30 35h1.03v1.03h-1.03zM37 35h1.03v1.03h-1.03zM38 35h1.03v1.03h-1.03zM39 35h1.03v1.03h-1.03zM23 36h1.03v1.03h-1.03zM34 36h1.03v1.03h-1.03zM40 36h1.03v1.03h-1.03zM41 36h1.03v1.03h-1.03zM46 36h1.03v1.03h-1.03zM28 37h1.03v1.03h-1.03zM31 37h1.03v1.03h-1.03zM35 37h1.03v1.03h-1.03zM37 37h1.03v1.03h-1.03zM40 37h1.03v1.03h-1.03zM49 37h1.03v1.03h-1.03zM36 38h1.03v1.03h-1.03zM50 38h1.03v1.03h-1.03zM33 39h1.03v1.03h-1.03zM34 39h1.03v1.03h-1.03zM35 39h1.03v1.03h-1.03zM36 39h1.03v1.03h-1.03zM41 39h1.03v1.03h-1.03zM45 39h1.03v1.03h-1.03zM49 39h1.03v1.03h-1.03zM50 39h1.03v1.03h-1.03zM51 39h1.03v1.03h-1.03zM54 39h1.03v1.03h-1.03zM43 40h1.03v1.03h-1.03zM45 40h1.03v1.03h-1.03zM48 40h1.03v1.03h-1.03zM49 40h1.03v1.03h-1.03zM52 40h1.03v1.03h-1.03z"/><path fill="#e19639" d="M17 26h1.03v1.03h-1.03zM16 29h1.03v1.03h-1.03zM21 29h1.03v1.03h-1.03zM23 29h1.03v1.03h-1.03zM27 29h1.03v1.03h-1.03zM16 30h1.03v1.03h-1.03zM20 30h1.03v1.03h-1.03zM27 30h1.03v1.03h-1.03zM22 31h1.03v1.03h-1.03zM26 31h1.03v1.03h-1.03zM16 32h1.03v1.03h-1.03zM24 32h1.03v1.03h-1.03zM16 33h1.03v1.03h-1.03zM24 33h1.03v1.03h-1.03zM25 33h1.03v1.03h-1.03zM31 33h1.03v1.03h-1.03zM35 33h1.03v1.03h-1.03zM20 34h1.03v1.03h-1.03zM23 34h1.03v1.03h-1.03zM29 34h1.03v1.03h-1.03zM37 34h1.03v1.03h-1.03zM20 35h1.03v1.03h-1.03zM25 35h1.03v1.03h-1.03zM32 35h1.03v1.03h-1.03zM40 35h1.03v1.03h-1.03zM42 35h1.03v1.03h-1.03zM43 35h1.03v1.03h-1.03zM44 35h1.03v1.03h-1.03zM45 35h1.03v1.03h-1.03zM26 36h1.03v1.03h-1.03zM30 36h1.03v1.03h-1.03zM38 36h1.03v1.03h-1.03zM43 36h1.03v1.03h-1.03zM45 36h1.03v1.03h-1.03zM48 36h1.03v1.03h-1.03zM30 37h1.03v1.03h-1.03zM36 37h1.03v1.03h-1.03zM38 37h1.03v1.03h-1.03zM42 37h1.03v1.03h-1.03zM50 37h1.03v1.03h-1.03zM33 38h1.03v1.03h-1.03zM43 38h1.03v1.03h-1.03zM39 39h1.03v1.03h-1.03zM44 39h1.03v1.03h-1.03zM42 40h1.03v1.03h-1.03zM50 40h1.03v1.03h-1.03zM51 40h1.03v1.03h-1.03zM53 40h1.03v1.03h-1.03zM48 41h1.03v1.03h-1.03zM50 41h1.03v1.03h-1.03zM51 41h1.03v1.03h-1.03zM52 41h1.03v1.03h-1.03zM39 42h1.03v1.03h-1.03zM40 42h1.03v1.03h-1.03zM49 44h1.03v1.03h-1.03z"/><path fill="#e09232" d="M15 26h1.03v1.03h-1.03zM16 26h1.03v1.03h-1.03zM16 27h1.03v1.03h-1.03zM20 27h1.03v1.03h-1.03zM21 27h1.03v1.03h-1.03zM23 28h1.03v1.03h-1.03zM24 29h1.03v1.03h-1.03zM26 30h1.03v1.03h-1.03zM30 30h1.03v1.03h-1.03zM36 30h1.03v1.03h-1.03zM19 31h1.03v1.03h-1.03zM20 31h1.03v1.03h-1.03zM23 31h1.03v1.03h-1.03zM32 31h1.03v1.03h-1.03zM34 31h1.03v1.03h-1.03zM22 32h1.03v1.03h-1.03zM29 32h1.03v1.03h-1.03zM30 32h1.03v1.03h-1.03zM32 32h1.03v1.03h-1.03zM36 32h1.03v1.03h-1.03zM38 32h1.03v1.03h-1.03zM40 32h1.03v1.03h-1.03zM21 33h1.03v1.03h-1.03zM23 33h1.03v1.03h-1.03zM26 33h1.03v1.03h-1.03zM27 33h1.03v1.03h-1.03zM28 33h1.03v1.03h-1.03zM30 33h1.03v1.03h-1.03zM33 33h1.03v1.03h-1.03zM34 33h1.03v1.03h-1.03zM37 33h1.03v1.03h-1.03zM39 33h1.03v1.03h-1.03zM21 34h1.03v1.03h-1.03zM28 34h1.03v1.03h-1.03zM31 34h1.03v1.03h-1.03zM34 34h1.03v1.03h-1.03zM39 34h1.03v1.03h-1.03zM41 34h1.03v1.03h-1.03zM34 35h1.03v1.03h-1.03zM41 35h1.03v1.03h-1.03zM47 35h1.03v1.03h-1.03zM35 36h1.03v1.03h-1.03zM44 36h1.03v1.03h-1.03zM41 37h1.03v1.03h-1.03zM43 37h1.03v1.03h-1.03zM47 37h1.03v1.03h-1.03zM51 37h1.03v1.03h-1.03zM52 37h1.03v1.03h-1.03zM46 38h1.03v1.03h-1.03zM48 38h1.03v1.03h-1.03zM52 38h1.03v1.03h-1.03zM40 39h1.03v1.03h-1.03zM47 40h1.03v1.03h-1.03zM51 42h1.03v1.03h-1.03z"/><path fill="#df8f2c" d="M15 24h1.03v1.03h-1.03zM17 25h1.03v1.03h-1.03zM21 25h1.03v1.03h-1.03zM22 26h1.03v1.03h-1.03zM17 27h1.03v1.03h-1.03zM18 27h1.03v1.03h-1.03zM22 28h1.03v1.03h-1.03zM24 28h1.03v1.03h-1.03zM25 29h1.03v1.03h-1.03zM28 29h1.03v1.03h-1.03zM31 29h1.03v1.03h-1.03zM22 30h1.03v1.03h-1.03zM29 30h1.03v1.03h-1.03zM32 30h1.03v1.03h-1.03zM33 30h1.03v1.03h-1.03zM24 31h1.03v1.03h-1.03zM31 31h1.03v1.03h-1.03zM33 31h1.03v1.03h-1.03zM35 31h1.03v1.03h-1.03zM34 32h1.03v1.03h-1.03zM37 32h1.03v1.03h-1.03zM39 32h1.03v1.03h-1.03zM41 32h1.03v1.03h-1.03zM22 33h1.03v1.03h-1.03zM38 33h1.03v1.03h-1.03zM36 34h1.03v1.03h-1.03zM38 34h1.03v1.03h-1.03zM40 34h1.03v1.03h-1.03zM42 34h1.03v1.03h-1.03zM43 34h1.03v1.03h-1.03zM45 34h1.03v1.03h-1.03zM33 35h1.03v1.03h-1.03zM36 35h1.03v1.03h-1.03zM48 35h1.03v1.03h-1.03zM49 35h1.03v1.03h-1.03zM47 36h1.03v1.03h-1.03zM49 36h1.03v1.03h-1.03zM50 36h1.03v1.03h-1.03zM48 37h1.03v1.03h-1.03zM40 40h1.03v1.03h-1.03z"/><path fill="#dc8c2c" d="M15 22h1.03v1.03h-1.03zM17 24h1.03v1.03h-1.03zM18 24h1.03v1.03h-1.03zM15 25h1.03v1.03h-1.03zM27 25h1.03v1.03h-1.03zM19 26h1.03v1.03h-1.03zM19 27h1.03v1.03h-1.03zM25 27h1.03v1.03h-1.03zM26 27h1.03v1.03h-1.03zM29 27h1.03v1.03h-1.03zM15 28h1.03v1.03h-1.03zM25 28h1.03v1.03h-1.03zM29 28h1.03v1.03h-1.03zM26 29h1.03v1.03h-1.03zM19 30h1.03v1.03h-1.03zM31 30h1.03v1.03h-1.03zM27 31h1.03v1.03h-1.03zM29 31h1.03v1.03h-1.03zM36 31h1.03v1.03h-1.03zM33 32h1.03v1.03h-1.03zM41 33h1.03v1.03h-1.03zM43 33h1.03v1.03h-1.03zM45 33h1.03v1.03h-1.03zM46 33h1.03v1.03h-1.03zM44 34h1.03v1.03h-1.03zM48 34h1.03v1.03h-1.03zM46 35h1.03v1.03h-1.03zM50 35h1.03v1.03h-1.03zM52 35h1.03v1.03h-1.03zM54 37h1.03v1.03h-1.03zM53 38h1.03v1.03h-1.03zM52 39h1.03v1.03h-1.03zM53 39h1.03v1.03h-1.03z"/><path fill="#d9892c" d="M20 22h1.03v1.03h-1.03zM15 23h1.03v1.03h-1.03zM17 23h1.03v1.03h-1.03zM21 24h1.03v1.03h-1.03zM16 25h1.03v1.03h-1.03zM18 25h1.03v1.03h-1.03zM19 25h1.03v1.03h-1.03zM20 25h1.03v1.03h-1.03zM23 25h1.03v1.03h-1.03zM20 26h1.03v1.03h-1.03zM21 26h1.03v1.03h-1.03zM23 27h1.03v1.03h-1.03zM26 28h1.03v1.03h-1.03zM27 28h1.03v1.03h-1.03zM30 28h1.03v1.03h-1.03zM31 28h1.03v1.03h-1.03zM30 29h1.03v1.03h-1.03zM32 29h1.03v1.03h-1.03zM33 29h1.03v1.03h-1.03zM23 30h1.03v1.03h-1.03zM34 30h1.03v1.03h-1.03zM28 31h1.03v1.03h-1.03zM41 31h1.03v1.03h-1.03zM35 32h1.03v1.03h-1.03zM46 32h1.03v1.03h-1.03zM42 33h1.03v1.03h-1.03zM44 33h1.03v1.03h-1.03zM48 33h1.03v1.03h-1.03zM46 34h1.03v1.03h-1.03zM49 34h1.03v1.03h-1.03zM51 35h1.03v1.03h-1.03zM51 36h1.03v1.03h-1.03zM54 36h1.03v1.03h-1.03zM53 37h1.03v1.03h-1.03zM51 38h1.03v1.03h-1.03zM54 38h1.03v1.03h-1.03z"/><path fill="#d6852c" d="M16 21h1.03v1.03h-1.03zM16 22h1.03v1.03h-1.03zM20 24h1.03v1.03h-1.03zM24 24h1.03v1.03h-1.03zM22 25h1.03v1.03h-1.03zM23 26h1.03v1.03h-1.03zM24 26h1.03v1.03h-1.03zM25 26h1.03v1.03h-1.03zM27 26h1.03v1.03h-1.03zM27 27h1.03v1.03h-1.03zM28 27h1.03v1.03h-1.03zM30 27h1.03v1.03h-1.03zM31 27h1.03v1.03h-1.03zM28 28h1.03v1.03h-1.03zM32 28h1.03v1.03h-1.03zM33 28h1.03v1.03h-1.03zM29 29h1.03v1.03h-1.03zM35 29h1.03v1.03h-1.03zM38 29h1.03v1.03h-1.03zM40 29h1.03v1.03h-1.03zM28 30h1.03v1.03h-1.03zM37 30h1.03v1.03h-1.03zM38 31h1.03v1.03h-1.03zM39 31h1.03v1.03h-1.03zM40 31h1.03v1.03h-1.03zM42 31h1.03v1.03h-1.03zM42 32h1.03v1.03h-1.03zM43 32h1.03v1.03h-1.03zM47 33h1.03v1.03h-1.03zM47 34h1.03v1.03h-1.03zM50 34h1.03v1.03h-1.03zM52 36h1.03v1.03h-1.03zM55 36h1.03v1.03h-1.03z"/><path fill="#d3822c" d="M15 21h1.03v1.03h-1.03zM16 23h1.03v1.03h-1.03zM19 24h1.03v1.03h-1.03zM23 24h1.03v1.03h-1.03zM26 26h1.03v1.03h-1.03zM30 26h1.03v1.03h-1.03zM31 26h1.03v1.03h-1.03zM34 26h1.03v1.03h-1.03zM24 27h1.03v1.03h-1.03zM33 27h1.03v1.03h-1.03zM34 28h1.03v1.03h-1.03zM34 29h1.03v1.03h-1.03zM36 29h1.03v1.03h-1.03zM39 29h1.03v1.03h-1.03zM41 29h1.03v1.03h-1.03zM37 31h1.03v1.03h-1.03zM48 31h1.03v1.03h-1.03zM45 32h1.03v1.03h-1.03zM49 33h1.03v1.03h-1.03zM53 33h1.03v1.03h-1.03zM51 34h1.03v1.03h-1.03zM53 34h1.03v1.03h-1.03zM54 34h1.03v1.03h-1.03zM53 35h1.03v1.03h-1.03zM54 35h1.03v1.03h-1.03zM55 35h1.03v1.03h-1.03zM53 36h1.03v1.03h-1.03zM55 37h1.03v1.03h-1.03z"/><path fill="#d07f2c" d="M15 20h1.03v1.03h-1.03zM19 20h1.03v1.03h-1.03zM17 21h1.03v1.03h-1.03zM19 21h1.03v1.03h-1.03zM17 22h1.03v1.03h-1.03zM18 22h1.03v1.03h-1.03zM19 22h1.03v1.03h-1.03zM19 23h1.03v1.03h-1.03zM20 23h1.03v1.03h-1.03zM24 23h1.03v1.03h-1.03zM27 23h1.03v1.03h-1.03zM31 24h1.03v1.03h-1.03zM32 24h1.03v1.03h-1.03zM24 25h1.03v1.03h-1.03zM25 25h1.03v1.03h-1.03zM30 25h1.03v1.03h-1.03zM28 26h1.03v1.03h-1.03zM35 28h1.03v1.03h-1.03zM36 28h1.03v1.03h-1.03zM37 28h1.03v1.03h-1.03zM38 28h1.03v1.03h-1.03zM47 28h1.03v1.03h-1.03zM45 29h1.03v1.03h-1.03zM38 30h1.03v1.03h-1.03zM39 30h1.03v1.03h-1.03zM41 30h1.03v1.03h-1.03zM42 30h1.03v1.03h-1.03zM43 30h1.03v1.03h-1.03zM44 30h1.03v1.03h-1.03zM46 30h1.03v1.03h-1.03zM50 31h1.03v1.03h-1.03zM44 32h1.03v1.03h-1.03zM47 32h1.03v1.03h-1.03zM48 32h1.03v1.03h-1.03zM52 34h1.03v1.03h-1.03zM55 34h1.03v1.03h-1.03z"/><path fill="#ce7c2c" d="M16 18h1.03v1.03h-1.03zM16 20h1.03v1.03h-1.03zM24 21h1.03v1.03h-1.03zM21 23h1.03v1.03h-1.03zM23 23h1.03v1.03h-1.03zM28 23h1.03v1.03h-1.03zM16 24h1.03v1.03h-1.03zM22 24h1.03v1.03h-1.03zM25 24h1.03v1.03h-1.03zM27 24h1.03v1.03h-1.03zM30 24h1.03v1.03h-1.03zM26 25h1.03v1.03h-1.03zM29 26h1.03v1.03h-1.03zM32 26h1.03v1.03h-1.03zM35 26h1.03v1.03h-1.03zM39 27h1.03v1.03h-1.03zM41 28h1.03v1.03h-1.03zM35 30h1.03v1.03h-1.03zM50 30h1.03v1.03h-1.03zM43 31h1.03v1.03h-1.03zM44 31h1.03v1.03h-1.03zM46 31h1.03v1.03h-1.03zM47 31h1.03v1.03h-1.03zM52 32h1.03v1.03h-1.03zM52 33h1.03v1.03h-1.03zM56 33h1.03v1.03h-1.03zM56 34h1.03v1.03h-1.03z"/><path fill="#cb792c" d="M17 17h1.03v1.03h-1.03zM17 18h1.03v1.03h-1.03zM16 19h1.03v1.03h-1.03zM17 19h1.03v1.03h-1.03zM18 19h1.03v1.03h-1.03zM19 19h1.03v1.03h-1.03zM20 19h1.03v1.03h-1.03zM20 20h1.03v1.03h-1.03zM21 20h1.03v1.03h-1.03zM26 20h1.03v1.03h-1.03zM18 21h1.03v1.03h-1.03zM21 21h1.03v1.03h-1.03zM23 21h1.03v1.03h-1.03zM26 21h1.03v1.03h-1.03zM25 22h1.03v1.03h-1.03zM26 22h1.03v1.03h-1.03zM29 22h1.03v1.03h-1.03zM18 23h1.03v1.03h-1.03zM22 23h1.03v1.03h-1.03zM26 24h1.03v1.03h-1.03zM28 25h1.03v1.03h-1.03zM29 25h1.03v1.03h-1.03zM32 25h1.03v1.03h-1.03zM33 25h1.03v1.03h-1.03zM34 25h1.03v1.03h-1.03zM35 25h1.03v1.03h-1.03zM33 26h1.03v1.03h-1.03zM39 26h1.03v1.03h-1.03zM34 27h1.03v1.03h-1.03zM44 27h1.03v1.03h-1.03zM40 28h1.03v1.03h-1.03zM43 28h1.03v1.03h-1.03zM44 28h1.03v1.03h-1.03zM46 28h1.03v1.03h-1.03zM43 29h1.03v1.03h-1.03zM46 29h1.03v1.03h-1.03zM40 30h1.03v1.03h-1.03zM47 30h1.03v1.03h-1.03zM48 30h1.03v1.03h-1.03zM49 30h1.03v1.03h-1.03zM49 31h1.03v1.03h-1.03zM54 31h1.03v1.03h-1.03zM53 32h1.03v1.03h-1.03zM55 32h1.03v1.03h-1.03zM51 33h1.03v1.03h-1.03zM54 33h1.03v1.03h-1.03zM57 33h1.03v1.03h-1.03zM56 35h1.03v1.03h-1.03z"/><path fill="#c8752c" d="M20 16h1.03v1.03h-1.03zM25 19h1.03v1.03h-1.03zM17 20h1.03v1.03h-1.03zM18 20h1.03v1.03h-1.03zM22 21h1.03v1.03h-1.03zM21 22h1.03v1.03h-1.03zM22 22h1.03v1.03h-1.03zM23 22h1.03v1.03h-1.03zM25 23h1.03v1.03h-1.03zM26 23h1.03v1.03h-1.03zM28 24h1.03v1.03h-1.03zM29 24h1.03v1.03h-1.03zM31 25h1.03v1.03h-1.03zM36 25h1.03v1.03h-1.03zM37 26h1.03v1.03h-1.03zM32 27h1.03v1.03h-1.03zM40 27h1.03v1.03h-1.03zM41 27h1.03v1.03h-1.03zM42 28h1.03v1.03h-1.03zM50 28h1.03v1.03h-1.03zM37 29h1.03v1.03h-1.03zM42 29h1.03v1.03h-1.03zM45 31h1.03v1.03h-1.03zM52 31h1.03v1.03h-1.03zM56 31h1.03v1.03h-1.03zM49 32h1.03v1.03h-1.03zM51 32h1.03v1.03h-1.03zM54 32h1.03v1.03h-1.03zM55 33h1.03v1.03h-1.03z"/><path fill="#c5722c" d="M20 14h1.03v1.03h-1.03zM17 16h1.03v1.03h-1.03zM16 17h1.03v1.03h-1.03zM18 17h1.03v1.03h-1.03zM19 17h1.03v1.03h-1.03zM20 17h1.03v1.03h-1.03zM15 19h1.03v1.03h-1.03zM21 19h1.03v1.03h-1.03zM23 19h1.03v1.03h-1.03zM23 20h1.03v1.03h-1.03zM25 20h1.03v1.03h-1.03zM30 20h1.03v1.03h-1.03zM20 21h1.03v1.03h-1.03zM28 21h1.03v1.03h-1.03zM30 21h1.03v1.03h-1.03zM24 22h1.03v1.03h-1.03zM27 22h1.03v1.03h-1.03zM30 22h1.03v1.03h-1.03zM31 22h1.03v1.03h-1.03zM35 22h1.03v1.03h-1.03zM29 23h1.03v1.03h-1.03zM30 23h1.03v1.03h-1.03zM31 23h1.03v1.03h-1.03zM33 24h1.03v1.03h-1.03zM40 24h1.03v1.03h-1.03zM40 25h1.03v1.03h-1.03zM36 26h1.03v1.03h-1.03zM38 26h1.03v1.03h-1.03zM43 26h1.03v1.03h-1.03zM44 26h1.03v1.03h-1.03zM35 27h1.03v1.03h-1.03zM36 27h1.03v1.03h-1.03zM37 27h1.03v1.03h-1.03zM42 27h1.03v1.03h-1.03zM46 27h1.03v1.03h-1.03zM39 28h1.03v1.03h-1.03zM45 28h1.03v1.03h-1.03zM53 28h1.03v1.03h-1.03zM45 30h1.03v1.03h-1.03zM51 30h1.03v1.03h-1.03zM53 31h1.03v1.03h-1.03zM55 31h1.03v1.03h-1.03zM56 32h1.03v1.03h-1.03z"/><path fill="#c26f2c" d="M18 15h1.03v1.03h-1.03zM19 15h1.03v1.03h-1.03zM16 16h1.03v1.03h-1.03zM24 17h1.03v1.03h-1.03zM25 17h1.03v1.03h-1.03zM19 18h1.03v1.03h-1.03zM20 18h1.03v1.03h-1.03zM24 18h1.03v1.03h-1.03zM28 18h1.03v1.03h-1.03zM22 19h1.03v1.03h-1.03zM24 19h1.03v1.03h-1.03zM27 19h1.03v1.03h-1.03zM29 19h1.03v1.03h-1.03zM22 20h1.03v1.03h-1.03zM24 20h1.03v1.03h-1.03zM38 20h1.03v1.03h-1.03zM31 21h1.03v1.03h-1.03zM38 22h1.03v1.03h-1.03zM32 23h1.03v1.03h-1.03zM33 23h1.03v1.03h-1.03zM35 23h1.03v1.03h-1.03zM36 23h1.03v1.03h-1.03zM38 25h1.03v1.03h-1.03zM39 25h1.03v1.03h-1.03zM41 25h1.03v1.03h-1.03zM42 25h1.03v1.03h-1.03zM43 25h1.03v1.03h-1.03zM42 26h1.03v1.03h-1.03zM51 26h1.03v1.03h-1.03zM38 27h1.03v1.03h-1.03zM51 28h1.03v1.03h-1.03zM57 28h1.03v1.03h-1.03zM44 29h1.03v1.03h-1.03zM51 29h1.03v1.03h-1.03zM52 30h1.03v1.03h-1.03zM53 30h1.03v1.03h-1.03zM55 30h1.03v1.03h-1.03zM56 30h1.03v1.03h-1.03zM51 31h1.03v1.03h-1.03zM50 32h1.03v1.03h-1.03zM57 32h1.03v1.03h-1.03zM50 33h1.03v1.03h-1.03z"/><path fill="#bf6c2b" d="M21 14h1.03v1.03h-1.03zM17 15h1.03v1.03h-1.03zM22 16h1.03v1.03h-1.03zM24 16h1.03v1.03h-1.03zM29 16h1.03v1.03h-1.03zM23 17h1.03v1.03h-1.03zM21 18h1.03v1.03h-1.03zM22 18h1.03v1.03h-1.03zM25 18h1.03v1.03h-1.03zM27 18h1.03v1.03h-1.03zM26 19h1.03v1.03h-1.03zM30 19h1.03v1.03h-1.03zM32 19h1.03v1.03h-1.03zM27 20h1.03v1.03h-1.03zM28 20h1.03v1.03h-1.03zM32 20h1.03v1.03h-1.03zM33 20h1.03v1.03h-1.03zM37 20h1.03v1.03h-1.03zM27 21h1.03v1.03h-1.03zM29 21h1.03v1.03h-1.03zM34 21h1.03v1.03h-1.03zM28 22h1.03v1.03h-1.03zM32 22h1.03v1.03h-1.03zM34 22h1.03v1.03h-1.03zM49 23h1.03v1.03h-1.03zM34 24h1.03v1.03h-1.03zM35 24h1.03v1.03h-1.03zM38 24h1.03v1.03h-1.03zM45 24h1.03v1.03h-1.03zM47 25h1.03v1.03h-1.03zM40 26h1.03v1.03h-1.03zM47 26h1.03v1.03h-1.03zM45 27h1.03v1.03h-1.03zM49 27h1.03v1.03h-1.03zM48 28h1.03v1.03h-1.03zM54 28h1.03v1.03h-1.03zM55 28h1.03v1.03h-1.03zM47 29h1.03v1.03h-1.03zM48 29h1.03v1.03h-1.03zM49 29h1.03v1.03h-1.03zM50 29h1.03v1.03h-1.03zM52 29h1.03v1.03h-1.03zM53 29h1.03v1.03h-1.03zM55 29h1.03v1.03h-1.03zM58 29h1.03v1.03h-1.03zM54 30h1.03v1.03h-1.03z"/><path fill="#bc692b" d="M23 12h1.03v1.03h-1.03zM19 13h1.03v1.03h-1.03zM17 14h1.03v1.03h-1.03zM24 15h1.03v1.03h-1.03zM19 16h1.03v1.03h-1.03zM21 16h1.03v1.03h-1.03zM25 16h1.03v1.03h-1.03zM21 17h1.03v1.03h-1.03zM22 17h1.03v1.03h-1.03zM28 17h1.03v1.03h-1.03zM29 17h1.03v1.03h-1.03zM31 17h1.03v1.03h-1.03zM18 18h1.03v1.03h-1.03zM23 18h1.03v1.03h-1.03zM29 18h1.03v1.03h-1.03zM30 18h1.03v1.03h-1.03zM32 18h1.03v1.03h-1.03zM33 18h1.03v1.03h-1.03zM28 19h1.03v1.03h-1.03zM29 20h1.03v1.03h-1.03zM31 20h1.03v1.03h-1.03zM36 20h1.03v1.03h-1.03zM42 20h1.03v1.03h-1.03zM25 21h1.03v1.03h-1.03zM35 21h1.03v1.03h-1.03zM37 21h1.03v1.03h-1.03zM39 21h1.03v1.03h-1.03zM36 22h1.03v1.03h-1.03zM37 22h1.03v1.03h-1.03zM40 22h1.03v1.03h-1.03zM42 22h1.03v1.03h-1.03zM44 22h1.03v1.03h-1.03zM46 22h1.03v1.03h-1.03zM37 23h1.03v1.03h-1.03zM41 23h1.03v1.03h-1.03zM44 23h1.03v1.03h-1.03zM36 24h1.03v1.03h-1.03zM43 24h1.03v1.03h-1.03zM44 24h1.03v1.03h-1.03zM45 25h1.03v1.03h-1.03zM41 26h1.03v1.03h-1.03zM45 26h1.03v1.03h-1.03zM46 26h1.03v1.03h-1.03zM54 26h1.03v1.03h-1.03zM51 27h1.03v1.03h-1.03zM54 27h1.03v1.03h-1.03zM49 28h1.03v1.03h-1.03zM52 28h1.03v1.03h-1.03zM56 28h1.03v1.03h-1.03zM54 29h1.03v1.03h-1.03zM56 29h1.03v1.03h-1.03zM57 30h1.03v1.03h-1.03zM58 30h1.03v1.03h-1.03zM57 31h1.03v1.03h-1.03z"/><path fill="#b9652b" d="M26 11h1.03v1.03h-1.03zM19 12h1.03v1.03h-1.03zM20 12h1.03v1.03h-1.03zM21 12h1.03v1.03h-1.03zM18 13h1.03v1.03h-1.03zM20 13h1.03v1.03h-1.03zM22 13h1.03v1.03h-1.03zM24 13h1.03v1.03h-1.03zM25 13h1.03v1.03h-1.03zM18 14h1.03v1.03h-1.03zM19 14h1.03v1.03h-1.03zM22 14h1.03v1.03h-1.03zM21 15h1.03v1.03h-1.03zM23 15h1.03v1.03h-1.03zM25 15h1.03v1.03h-1.03zM18 16h1.03v1.03h-1.03zM23 16h1.03v1.03h-1.03zM26 16h1.03v1.03h-1.03zM27 16h1.03v1.03h-1.03zM28 16h1.03v1.03h-1.03zM26 17h1.03v1.03h-1.03zM30 17h1.03v1.03h-1.03zM32 17h1.03v1.03h-1.03zM26 18h1.03v1.03h-1.03zM31 19h1.03v1.03h-1.03zM34 19h1.03v1.03h-1.03zM36 19h1.03v1.03h-1.03zM40 19h1.03v1.03h-1.03zM34 20h1.03v1.03h-1.03zM35 20h1.03v1.03h-1.03zM39 20h1.03v1.03h-1.03zM32 21h1.03v1.03h-1.03zM44 21h1.03v1.03h-1.03zM33 22h1.03v1.03h-1.03zM34 23h1.03v1.03h-1.03zM38 23h1.03v1.03h-1.03zM39 23h1.03v1.03h-1.03zM37 24h1.03v1.03h-1.03zM39 24h1.03v1.03h-1.03zM41 24h1.03v1.03h-1.03zM42 24h1.03v1.03h-1.03zM46 24h1.03v1.03h-1.03zM48 24h1.03v1.03h-1.03zM50 24h1.03v1.03h-1.03zM44 25h1.03v1.03h-1.03zM49 25h1.03v1.03h-1.03zM52 25h1.03v1.03h-1.03zM52 26h1.03v1.03h-1.03zM43 27h1.03v1.03h-1.03zM47 27h1.03v1.03h-1.03zM48 27h1.03v1.03h-1.03zM53 27h1.03v1.03h-1.03zM55 27h1.03v1.03h-1.03zM56 27h1.03v1.03h-1.03z"/><path fill="#b6622b" d="M20 10h1.03v1.03h-1.03zM21 10h1.03v1.03h-1.03zM19 11h1.03v1.03h-1.03zM21 11h1.03v1.03h-1.03zM22 11h1.03v1.03h-1.03zM23 11h1.03v1.03h-1.03zM24 11h1.03v1.03h-1.03zM18 12h1.03v1.03h-1.03zM22 12h1.03v1.03h-1.03zM24 12h1.03v1.03h-1.03zM25 12h1.03v1.03h-1.03zM27 13h1.03v1.03h-1.03zM23 14h1.03v1.03h-1.03zM26 14h1.03v1.03h-1.03zM27 15h1.03v1.03h-1.03zM30 15h1.03v1.03h-1.03zM33 15h1.03v1.03h-1.03zM33 16h1.03v1.03h-1.03zM33 17h1.03v1.03h-1.03zM37 17h1.03v1.03h-1.03zM31 18h1.03v1.03h-1.03zM34 18h1.03v1.03h-1.03zM35 19h1.03v1.03h-1.03zM43 20h1.03v1.03h-1.03zM33 21h1.03v1.03h-1.03zM36 21h1.03v1.03h-1.03zM38 21h1.03v1.03h-1.03zM46 21h1.03v1.03h-1.03zM39 22h1.03v1.03h-1.03zM41 22h1.03v1.03h-1.03zM49 22h1.03v1.03h-1.03zM56 22h1.03v1.03h-1.03zM40 23h1.03v1.03h-1.03zM43 23h1.03v1.03h-1.03zM45 23h1.03v1.03h-1.03zM48 23h1.03v1.03h-1.03zM50 23h1.03v1.03h-1.03zM52 24h1.03v1.03h-1.03zM37 25h1.03v1.03h-1.03zM46 25h1.03v1.03h-1.03zM48 25h1.03v1.03h-1.03zM51 25h1.03v1.03h-1.03zM54 25h1.03v1.03h-1.03zM56 25h1.03v1.03h-1.03zM48 26h1.03v1.03h-1.03zM49 26h1.03v1.03h-1.03zM50 26h1.03v1.03h-1.03zM58 26h1.03v1.03h-1.03zM52 27h1.03v1.03h-1.03zM58 27h1.03v1.03h-1.03zM57 29h1.03v1.03h-1.03z"/><path fill="#b45f2b" d="M24 8h1.03v1.03h-1.03zM22 10h1.03v1.03h-1.03zM26 10h1.03v1.03h-1.03zM28 10h1.03v1.03h-1.03zM20 11h1.03v1.03h-1.03zM30 12h1.03v1.03h-1.03zM21 13h1.03v1.03h-1.03zM28 13h1.03v1.03h-1.03zM31 13h1.03v1.03h-1.03zM25 14h1.03v1.03h-1.03zM27 14h1.03v1.03h-1.03zM28 14h1.03v1.03h-1.03zM20 15h1.03v1.03h-1.03zM28 15h1.03v1.03h-1.03zM32 15h1.03v1.03h-1.03zM38 15h1.03v1.03h-1.03zM30 16h1.03v1.03h-1.03zM32 16h1.03v1.03h-1.03zM35 17h1.03v1.03h-1.03zM36 17h1.03v1.03h-1.03zM40 17h1.03v1.03h-1.03zM36 18h1.03v1.03h-1.03zM42 18h1.03v1.03h-1.03zM41 19h1.03v1.03h-1.03zM44 19h1.03v1.03h-1.03zM45 19h1.03v1.03h-1.03zM41 20h1.03v1.03h-1.03zM40 21h1.03v1.03h-1.03zM41 21h1.03v1.03h-1.03zM43 21h1.03v1.03h-1.03zM48 22h1.03v1.03h-1.03zM52 22h1.03v1.03h-1.03zM42 23h1.03v1.03h-1.03zM51 23h1.03v1.03h-1.03zM47 24h1.03v1.03h-1.03zM49 24h1.03v1.03h-1.03zM51 24h1.03v1.03h-1.03zM54 24h1.03v1.03h-1.03zM56 24h1.03v1.03h-1.03zM57 24h1.03v1.03h-1.03zM50 25h1.03v1.03h-1.03zM55 25h1.03v1.03h-1.03zM58 25h1.03v1.03h-1.03zM53 26h1.03v1.03h-1.03zM50 27h1.03v1.03h-1.03zM57 27h1.03v1.03h-1.03zM58 28h1.03v1.03h-1.03z"/><path fill="#b15c2b" d="M21 9h1.03v1.03h-1.03zM23 9h1.03v1.03h-1.03zM25 9h1.03v1.03h-1.03zM26 9h1.03v1.03h-1.03zM19 10h1.03v1.03h-1.03zM23 13h1.03v1.03h-1.03zM26 13h1.03v1.03h-1.03zM24 14h1.03v1.03h-1.03zM29 14h1.03v1.03h-1.03zM31 14h1.03v1.03h-1.03zM32 14h1.03v1.03h-1.03zM33 14h1.03v1.03h-1.03zM26 15h1.03v1.03h-1.03zM29 15h1.03v1.03h-1.03zM31 15h1.03v1.03h-1.03zM37 15h1.03v1.03h-1.03zM31 16h1.03v1.03h-1.03zM34 16h1.03v1.03h-1.03zM36 16h1.03v1.03h-1.03zM39 16h1.03v1.03h-1.03zM41 16h1.03v1.03h-1.03zM27 17h1.03v1.03h-1.03zM41 17h1.03v1.03h-1.03zM37 18h1.03v1.03h-1.03zM38 18h1.03v1.03h-1.03zM39 18h1.03v1.03h-1.03zM39 19h1.03v1.03h-1.03zM43 19h1.03v1.03h-1.03zM46 19h1.03v1.03h-1.03zM40 20h1.03v1.03h-1.03zM49 20h1.03v1.03h-1.03zM42 21h1.03v1.03h-1.03zM45 21h1.03v1.03h-1.03zM50 21h1.03v1.03h-1.03zM53 21h1.03v1.03h-1.03zM43 22h1.03v1.03h-1.03zM45 22h1.03v1.03h-1.03zM50 22h1.03v1.03h-1.03zM53 22h1.03v1.03h-1.03zM47 23h1.03v1.03h-1.03zM52 23h1.03v1.03h-1.03zM56 23h1.03v1.03h-1.03zM57 23h1.03v1.03h-1.03zM53 24h1.03v1.03h-1.03zM55 24h1.03v1.03h-1.03zM58 24h1.03v1.03h-1.03zM53 25h1.03v1.03h-1.03zM57 25h1.03v1.03h-1.03zM55 26h1.03v1.03h-1.03zM57 26h1.03v1.03h-1.03z"/><path fill="#ae592b" d="M23 8h1.03v1.03h-1.03zM27 8h1.03v1.03h-1.03zM22 9h1.03v1.03h-1.03zM24 9h1.03v1.03h-1.03zM27 10h1.03v1.03h-1.03zM27 11h1.03v1.03h-1.03zM28 11h1.03v1.03h-1.03zM29 11h1.03v1.03h-1.03zM26 12h1.03v1.03h-1.03zM29 12h1.03v1.03h-1.03zM31 12h1.03v1.03h-1.03zM32 12h1.03v1.03h-1.03zM30 14h1.03v1.03h-1.03zM22 15h1.03v1.03h-1.03zM41 15h1.03v1.03h-1.03zM35 16h1.03v1.03h-1.03zM37 16h1.03v1.03h-1.03zM40 16h1.03v1.03h-1.03zM34 17h1.03v1.03h-1.03zM38 17h1.03v1.03h-1.03zM39 17h1.03v1.03h-1.03zM35 18h1.03v1.03h-1.03zM33 19h1.03v1.03h-1.03zM37 19h1.03v1.03h-1.03zM38 19h1.03v1.03h-1.03zM42 19h1.03v1.03h-1.03zM48 19h1.03v1.03h-1.03zM44 20h1.03v1.03h-1.03zM50 20h1.03v1.03h-1.03zM52 20h1.03v1.03h-1.03zM47 21h1.03v1.03h-1.03zM47 22h1.03v1.03h-1.03zM51 22h1.03v1.03h-1.03zM46 23h1.03v1.03h-1.03zM55 23h1.03v1.03h-1.03zM56 26h1.03v1.03h-1.03z"/><path fill="#ab552b" d="M22 7h1.03v1.03h-1.03zM24 7h1.03v1.03h-1.03zM22 8h1.03v1.03h-1.03zM29 8h1.03v1.03h-1.03zM23 10h1.03v1.03h-1.03zM24 10h1.03v1.03h-1.03zM25 11h1.03v1.03h-1.03zM38 12h1.03v1.03h-1.03zM29 13h1.03v1.03h-1.03zM32 13h1.03v1.03h-1.03zM35 13h1.03v1.03h-1.03zM36 13h1.03v1.03h-1.03zM38 13h1.03v1.03h-1.03zM34 15h1.03v1.03h-1.03zM35 15h1.03v1.03h-1.03zM36 15h1.03v1.03h-1.03zM43 15h1.03v1.03h-1.03zM42 16h1.03v1.03h-1.03zM43 16h1.03v1.03h-1.03zM44 16h1.03v1.03h-1.03zM42 17h1.03v1.03h-1.03zM40 18h1.03v1.03h-1.03zM44 18h1.03v1.03h-1.03zM45 18h1.03v1.03h-1.03zM50 18h1.03v1.03h-1.03zM54 18h1.03v1.03h-1.03zM47 19h1.03v1.03h-1.03zM52 19h1.03v1.03h-1.03zM46 20h1.03v1.03h-1.03zM47 20h1.03v1.03h-1.03zM48 20h1.03v1.03h-1.03zM51 20h1.03v1.03h-1.03zM49 21h1.03v1.03h-1.03zM52 21h1.03v1.03h-1.03zM54 21h1.03v1.03h-1.03zM54 22h1.03v1.03h-1.03zM55 22h1.03v1.03h-1.03zM57 22h1.03v1.03h-1.03zM54 23h1.03v1.03h-1.03zM58 23h1.03v1.03h-1.03z"/><path fill="#a8522b" d="M24 5h1.03v1.03h-1.03zM25 7h1.03v1.03h-1.03zM30 7h1.03v1.03h-1.03zM20 9h1.03v1.03h-1.03zM25 10h1.03v1.03h-1.03zM29 10h1.03v1.03h-1.03zM31 10h1.03v1.03h-1.03zM30 11h1.03v1.03h-1.03zM32 11h1.03v1.03h-1.03zM33 11h1.03v1.03h-1.03zM34 11h1.03v1.03h-1.03zM35 12h1.03v1.03h-1.03zM30 13h1.03v1.03h-1.03zM37 13h1.03v1.03h-1.03zM34 14h1.03v1.03h-1.03zM39 14h1.03v1.03h-1.03zM41 14h1.03v1.03h-1.03zM39 15h1.03v1.03h-1.03zM40 15h1.03v1.03h-1.03zM38 16h1.03v1.03h-1.03zM45 16h1.03v1.03h-1.03zM51 16h1.03v1.03h-1.03zM45 17h1.03v1.03h-1.03zM46 17h1.03v1.03h-1.03zM50 17h1.03v1.03h-1.03zM41 18h1.03v1.03h-1.03zM43 18h1.03v1.03h-1.03zM47 18h1.03v1.03h-1.03zM49 19h1.03v1.03h-1.03zM45 20h1.03v1.03h-1.03zM53 20h1.03v1.03h-1.03zM54 20h1.03v1.03h-1.03zM48 21h1.03v1.03h-1.03zM51 21h1.03v1.03h-1.03zM56 21h1.03v1.03h-1.03zM58 21h1.03v1.03h-1.03zM58 22h1.03v1.03h-1.03z"/><path fill="#a54f2b" d="M27 6h1.03v1.03h-1.03zM21 8h1.03v1.03h-1.03zM26 8h1.03v1.03h-1.03zM28 8h1.03v1.03h-1.03zM34 8h1.03v1.03h-1.03zM27 9h1.03v1.03h-1.03zM32 9h1.03v1.03h-1.03zM36 9h1.03v1.03h-1.03zM30 10h1.03v1.03h-1.03zM32 10h1.03v1.03h-1.03zM35 10h1.03v1.03h-1.03zM35 11h1.03v1.03h-1.03zM38 11h1.03v1.03h-1.03zM39 11h1.03v1.03h-1.03zM27 12h1.03v1.03h-1.03zM34 12h1.03v1.03h-1.03zM39 12h1.03v1.03h-1.03zM34 13h1.03v1.03h-1.03zM39 13h1.03v1.03h-1.03zM40 13h1.03v1.03h-1.03zM44 13h1.03v1.03h-1.03zM35 14h1.03v1.03h-1.03zM36 14h1.03v1.03h-1.03zM37 14h1.03v1.03h-1.03zM38 14h1.03v1.03h-1.03zM42 14h1.03v1.03h-1.03zM43 14h1.03v1.03h-1.03zM42 15h1.03v1.03h-1.03zM44 15h1.03v1.03h-1.03zM47 16h1.03v1.03h-1.03zM43 17h1.03v1.03h-1.03zM44 17h1.03v1.03h-1.03zM47 17h1.03v1.03h-1.03zM48 17h1.03v1.03h-1.03zM53 19h1.03v1.03h-1.03zM54 19h1.03v1.03h-1.03zM55 19h1.03v1.03h-1.03zM55 20h1.03v1.03h-1.03zM57 21h1.03v1.03h-1.03zM53 23h1.03v1.03h-1.03z"/><path fill="#a24b2b" d="M25 5h1.03v1.03h-1.03zM23 6h1.03v1.03h-1.03zM24 6h1.03v1.03h-1.03zM25 6h1.03v1.03h-1.03zM31 6h1.03v1.03h-1.03zM26 7h1.03v1.03h-1.03zM31 7h1.03v1.03h-1.03zM25 8h1.03v1.03h-1.03zM36 8h1.03v1.03h-1.03zM38 8h1.03v1.03h-1.03zM28 9h1.03v1.03h-1.03zM29 9h1.03v1.03h-1.03zM31 9h1.03v1.03h-1.03zM34 9h1.03v1.03h-1.03zM35 9h1.03v1.03h-1.03zM37 9h1.03v1.03h-1.03zM33 10h1.03v1.03h-1.03zM36 10h1.03v1.03h-1.03zM37 10h1.03v1.03h-1.03zM31 11h1.03v1.03h-1.03zM37 11h1.03v1.03h-1.03zM40 11h1.03v1.03h-1.03zM41 11h1.03v1.03h-1.03zM28 12h1.03v1.03h-1.03zM36 12h1.03v1.03h-1.03zM37 12h1.03v1.03h-1.03zM40 12h1.03v1.03h-1.03zM33 13h1.03v1.03h-1.03zM41 13h1.03v1.03h-1.03zM43 13h1.03v1.03h-1.03zM46 13h1.03v1.03h-1.03zM40 14h1.03v1.03h-1.03zM45 14h1.03v1.03h-1.03zM45 15h1.03v1.03h-1.03zM49 15h1.03v1.03h-1.03zM56 15h1.03v1.03h-1.03zM48 16h1.03v1.03h-1.03zM53 16h1.03v1.03h-1.03zM51 17h1.03v1.03h-1.03zM53 17h1.03v1.03h-1.03zM49 18h1.03v1.03h-1.03zM51 18h1.03v1.03h-1.03zM53 18h1.03v1.03h-1.03zM55 18h1.03v1.03h-1.03zM57 18h1.03v1.03h-1.03zM57 19h1.03v1.03h-1.03zM58 19h1.03v1.03h-1.03zM57 20h1.03v1.03h-1.03zM58 20h1.03v1.03h-1.03zM55 21h1.03v1.03h-1.03z"/><path fill="#9f482b" d="M29 3h1.03v1.03h-1.03zM26 4h1.03v1.03h-1.03zM30 6h1.03v1.03h-1.03zM32 6h1.03v1.03h-1.03zM23 7h1.03v1.03h-1.03zM28 7h1.03v1.03h-1.03zM29 7h1.03v1.03h-1.03zM32 7h1.03v1.03h-1.03zM33 7h1.03v1.03h-1.03zM33 8h1.03v1.03h-1.03zM30 9h1.03v1.03h-1.03zM33 9h1.03v1.03h-1.03zM34 10h1.03v1.03h-1.03zM36 11h1.03v1.03h-1.03zM33 12h1.03v1.03h-1.03zM41 12h1.03v1.03h-1.03zM43 12h1.03v1.03h-1.03zM44 14h1.03v1.03h-1.03zM46 14h1.03v1.03h-1.03zM49 14h1.03v1.03h-1.03zM50 14h1.03v1.03h-1.03zM46 15h1.03v1.03h-1.03zM47 15h1.03v1.03h-1.03zM48 15h1.03v1.03h-1.03zM50 15h1.03v1.03h-1.03zM51 15h1.03v1.03h-1.03zM50 16h1.03v1.03h-1.03zM55 16h1.03v1.03h-1.03zM57 16h1.03v1.03h-1.03zM55 17h1.03v1.03h-1.03zM46 18h1.03v1.03h-1.03zM48 18h1.03v1.03h-1.03zM52 18h1.03v1.03h-1.03zM56 18h1.03v1.03h-1.03zM51 19h1.03v1.03h-1.03zM56 20h1.03v1.03h-1.03z"/><path fill="#9c442c" d="M25 4h1.03v1.03h-1.03zM28 4h1.03v1.03h-1.03zM26 5h1.03v1.03h-1.03zM26 6h1.03v1.03h-1.03zM28 6h1.03v1.03h-1.03zM27 7h1.03v1.03h-1.03zM31 8h1.03v1.03h-1.03zM32 8h1.03v1.03h-1.03zM35 8h1.03v1.03h-1.03zM39 8h1.03v1.03h-1.03zM38 9h1.03v1.03h-1.03zM40 10h1.03v1.03h-1.03zM42 12h1.03v1.03h-1.03zM44 12h1.03v1.03h-1.03zM45 12h1.03v1.03h-1.03zM46 12h1.03v1.03h-1.03zM50 12h1.03v1.03h-1.03zM42 13h1.03v1.03h-1.03zM47 13h1.03v1.03h-1.03zM50 13h1.03v1.03h-1.03zM47 14h1.03v1.03h-1.03zM52 14h1.03v1.03h-1.03zM56 14h1.03v1.03h-1.03zM52 15h1.03v1.03h-1.03zM46 16h1.03v1.03h-1.03zM52 16h1.03v1.03h-1.03zM56 16h1.03v1.03h-1.03zM52 17h1.03v1.03h-1.03zM56 17h1.03v1.03h-1.03zM57 17h1.03v1.03h-1.03zM50 19h1.03v1.03h-1.03zM56 19h1.03v1.03h-1.03z"/><path fill="#99402c" d="M31 3h1.03v1.03h-1.03zM28 5h1.03v1.03h-1.03zM29 6h1.03v1.03h-1.03zM33 6h1.03v1.03h-1.03zM36 6h1.03v1.03h-1.03zM40 6h1.03v1.03h-1.03zM35 7h1.03v1.03h-1.03zM42 8h1.03v1.03h-1.03zM43 8h1.03v1.03h-1.03zM39 9h1.03v1.03h-1.03zM40 9h1.03v1.03h-1.03zM46 9h1.03v1.03h-1.03zM41 10h1.03v1.03h-1.03zM42 10h1.03v1.03h-1.03zM46 10h1.03v1.03h-1.03zM43 11h1.03v1.03h-1.03zM44 11h1.03v1.03h-1.03zM46 11h1.03v1.03h-1.03zM49 11h1.03v1.03h-1.03zM50 11h1.03v1.03h-1.03zM45 13h1.03v1.03h-1.03zM48 13h1.03v1.03h-1.03zM49 13h1.03v1.03h-1.03zM54 14h1.03v1.03h-1.03zM53 15h1.03v1.03h-1.03zM49 17h1.03v1.03h-1.03zM54 17h1.03v1.03h-1.03z"/><path fill="#963d2c" d="M28 3h1.03v1.03h-1.03zM33 3h1.03v1.03h-1.03zM29 4h1.03v1.03h-1.03zM30 4h1.03v1.03h-1.03zM32 4h1.03v1.03h-1.03zM27 5h1.03v1.03h-1.03zM29 5h1.03v1.03h-1.03zM30 5h1.03v1.03h-1.03zM31 5h1.03v1.03h-1.03zM32 5h1.03v1.03h-1.03zM35 5h1.03v1.03h-1.03zM36 5h1.03v1.03h-1.03zM34 6h1.03v1.03h-1.03zM34 7h1.03v1.03h-1.03zM37 7h1.03v1.03h-1.03zM38 7h1.03v1.03h-1.03zM37 8h1.03v1.03h-1.03zM42 9h1.03v1.03h-1.03zM45 9h1.03v1.03h-1.03zM38 10h1.03v1.03h-1.03zM39 10h1.03v1.03h-1.03zM43 10h1.03v1.03h-1.03zM44 10h1.03v1.03h-1.03zM45 10h1.03v1.03h-1.03zM47 10h1.03v1.03h-1.03zM42 11h1.03v1.03h-1.03zM48 12h1.03v1.03h-1.03zM53 12h1.03v1.03h-1.03zM51 13h1.03v1.03h-1.03zM53 13h1.03v1.03h-1.03zM48 14h1.03v1.03h-1.03zM51 14h1.03v1.03h-1.03zM53 14h1.03v1.03h-1.03zM55 14h1.03v1.03h-1.03zM54 15h1.03v1.03h-1.03zM49 16h1.03v1.03h-1.03z"/><path fill="#93392c" d="M27 3h1.03v1.03h-1.03zM32 3h1.03v1.03h-1.03zM27 4h1.03v1.03h-1.03zM31 4h1.03v1.03h-1.03zM34 4h1.03v1.03h-1.03zM33 5h1.03v1.03h-1.03zM37 6h1.03v1.03h-1.03zM36 7h1.03v1.03h-1.03zM39 7h1.03v1.03h-1.03zM42 7h1.03v1.03h-1.03zM44 7h1.03v1.03h-1.03zM30 8h1.03v1.03h-1.03zM46 8h1.03v1.03h-1.03zM43 9h1.03v1.03h-1.03zM47 11h1.03v1.03h-1.03zM51 11h1.03v1.03h-1.03zM54 11h1.03v1.03h-1.03zM49 12h1.03v1.03h-1.03zM51 12h1.03v1.03h-1.03zM54 13h1.03v1.03h-1.03zM54 16h1.03v1.03h-1.03z"/><path fill="#90362c" d="M32 1h1.03v1.03h-1.03zM29 2h1.03v1.03h-1.03zM30 2h1.03v1.03h-1.03zM30 3h1.03v1.03h-1.03zM34 3h1.03v1.03h-1.03zM35 3h1.03v1.03h-1.03zM33 4h1.03v1.03h-1.03zM38 4h1.03v1.03h-1.03zM41 5h1.03v1.03h-1.03zM35 6h1.03v1.03h-1.03zM38 6h1.03v1.03h-1.03zM39 6h1.03v1.03h-1.03zM40 7h1.03v1.03h-1.03zM43 7h1.03v1.03h-1.03zM40 8h1.03v1.03h-1.03zM47 8h1.03v1.03h-1.03zM49 8h1.03v1.03h-1.03zM41 9h1.03v1.03h-1.03zM48 9h1.03v1.03h-1.03zM53 9h1.03v1.03h-1.03zM45 11h1.03v1.03h-1.03zM48 11h1.03v1.03h-1.03zM47 12h1.03v1.03h-1.03zM55 12h1.03v1.03h-1.03zM55 15h1.03v1.03h-1.03z"/><path fill="#8c322d" d="M36 1h1.03v1.03h-1.03zM33 2h1.03v1.03h-1.03zM34 2h1.03v1.03h-1.03zM40 3h1.03v1.03h-1.03zM36 4h1.03v1.03h-1.03zM37 4h1.03v1.03h-1.03zM34 5h1.03v1.03h-1.03zM38 5h1.03v1.03h-1.03zM44 6h1.03v1.03h-1.03zM41 7h1.03v1.03h-1.03zM49 7h1.03v1.03h-1.03zM41 8h1.03v1.03h-1.03zM44 8h1.03v1.03h-1.03zM48 8h1.03v1.03h-1.03zM44 9h1.03v1.03h-1.03zM47 9h1.03v1.03h-1.03zM49 10h1.03v1.03h-1.03zM50 10h1.03v1.03h-1.03zM51 10h1.03v1.03h-1.03zM52 10h1.03v1.03h-1.03zM54 10h1.03v1.03h-1.03zM52 12h1.03v1.03h-1.03zM55 13h1.03v1.03h-1.03z"/><path fill="#892e2d" d="M33 1h1.03v1.03h-1.03zM35 1h1.03v1.03h-1.03zM31 2h1.03v1.03h-1.03zM32 2h1.03v1.03h-1.03zM36 2h1.03v1.03h-1.03zM37 2h1.03v1.03h-1.03zM38 2h1.03v1.03h-1.03zM36 3h1.03v1.03h-1.03zM38 3h1.03v1.03h-1.03zM35 4h1.03v1.03h-1.03zM39 5h1.03v1.03h-1.03zM40 5h1.03v1.03h-1.03zM41 6h1.03v1.03h-1.03zM45 6h1.03v1.03h-1.03zM47 7h1.03v1.03h-1.03zM48 7h1.03v1.03h-1.03zM45 8h1.03v1.03h-1.03zM50 8h1.03v1.03h-1.03zM50 9h1.03v1.03h-1.03zM48 10h1.03v1.03h-1.03zM53 10h1.03v1.03h-1.03zM52 11h1.03v1.03h-1.03zM54 12h1.03v1.03h-1.03zM52 13h1.03v1.03h-1.03z"/><path fill="#862b2d" d="M40 1h1.03v1.03h-1.03zM41 3h1.03v1.03h-1.03zM39 4h1.03v1.03h-1.03zM40 4h1.03v1.03h-1.03zM42 4h1.03v1.03h-1.03zM37 5h1.03v1.03h-1.03zM44 5h1.03v1.03h-1.03zM47 5h1.03v1.03h-1.03zM43 6h1.03v1.03h-1.03zM46 6h1.03v1.03h-1.03zM49 9h1.03v1.03h-1.03zM51 9h1.03v1.03h-1.03zM52 9h1.03v1.03h-1.03zM53 11h1.03v1.03h-1.03z"/><path fill="#83272d" d="M34 1h1.03v1.03h-1.03zM37 1h1.03v1.03h-1.03zM41 1h1.03v1.03h-1.03zM39 2h1.03v1.03h-1.03zM40 2h1.03v1.03h-1.03zM41 2h1.03v1.03h-1.03zM39 3h1.03v1.03h-1.03zM43 3h1.03v1.03h-1.03zM46 3h1.03v1.03h-1.03zM43 4h1.03v1.03h-1.03zM46 5h1.03v1.03h-1.03zM49 6h1.03v1.03h-1.03zM45 7h1.03v1.03h-1.03zM46 7h1.03v1.03h-1.03zM50 7h1.03v1.03h-1.03zM51 7h1.03v1.03h-1.03zM52 8h1.03v1.03h-1.03z"/><path fill="#80232e" d="M38 1h1.03v1.03h-1.03zM42 2h1.03v1.03h-1.03zM42 3h1.03v1.03h-1.03zM41 4h1.03v1.03h-1.03zM44 4h1.03v1.03h-1.03zM45 4h1.03v1.03h-1.03zM46 4h1.03v1.03h-1.03zM48 4h1.03v1.03h-1.03zM43 5h1.03v1.03h-1.03zM45 5h1.03v1.03h-1.03zM48 5h1.03v1.03h-1.03zM42 6h1.03v1.03h-1.03zM48 6h1.03v1.03h-1.03zM51 8h1.03v1.03h-1.03z"/><path fill="#7d202e" d="M39 1h1.03v1.03h-1.03zM35 2h1.03v1.03h-1.03zM43 2h1.03v1.03h-1.03zM44 3h1.03v1.03h-1.03zM45 3h1.03v1.03h-1.03zM47 4h1.03v1.03h-1.03zM42 5h1.03v1.03h-1.03zM49 5h1.03v1.03h-1.03z"/><path fill="#7a1c2e" d="M44 2h1.03v1.03h-1.03zM37 3h1.03v1.03h-1.03zM47 6h1.03v1.03h-1.03zM50 6h1.03v1.03h-1.03z"/></g>
<rect x="1032" y="226" width="10.4" height="291" fill="url(#cbI)" />
<line x1="1044.6" y1="226" x2="1044.6" y2="517" stroke="#e8e8e8" stroke-width="1.2" />
<line x1="1044.6" y1="516.5" x2="1052.6" y2="516.5" stroke="#e8e8e8" stroke-width="1.2" />
<line x1="1044.6" y1="507.86" x2="1048.6" y2="507.86" stroke="#e8e8e8" stroke-width="1.2" />
<line x1="1044.6" y1="499.22" x2="1048.6" y2="499.22" stroke="#e8e8e8" stroke-width="1.2" />
<line x1="1044.6" y1="490.58" x2="1048.6" y2="490.58" stroke="#e8e8e8" stroke-width="1.2" />
<line x1="1044.6" y1="481.94" x2="1048.6" y2="481.94" stroke="#e8e8e8" stroke-width="1.2" />
<line x1="1044.6" y1="473.3" x2="1052.6" y2="473.3" stroke="#e8e8e8" stroke-width="1.2" />
<line x1="1044.6" y1="464.66" x2="1048.6" y2="464.66" stroke="#e8e8e8" stroke-width="1.2" />
<line x1="1044.6" y1="456.02" x2="1048.6" y2="456.02" stroke="#e8e8e8" stroke-width="1.2" />
<line x1="1044.6" y1="447.38" x2="1048.6" y2="447.38" stroke="#e8e8e8" stroke-width="1.2" />
<line x1="1044.6" y1="438.74" x2="1048.6" y2="438.74" stroke="#e8e8e8" stroke-width="1.2" />
<line x1="1044.6" y1="430.1" x2="1052.6" y2="430.1" stroke="#e8e8e8" stroke-width="1.2" />
<line x1="1044.6" y1="421.46" x2="1048.6" y2="421.46" stroke="#e8e8e8" stroke-width="1.2" />
<line x1="1044.6" y1="412.82" x2="1048.6" y2="412.82" stroke="#e8e8e8" stroke-width="1.2" />
<line x1="1044.6" y1="404.18" x2="1048.6" y2="404.18" stroke="#e8e8e8" stroke-width="1.2" />
<line x1="1044.6" y1="395.54" x2="1048.6" y2="395.54" stroke="#e8e8e8" stroke-width="1.2" />
<line x1="1044.6" y1="386.9" x2="1052.6" y2="386.9" stroke="#e8e8e8" stroke-width="1.2" />
<line x1="1044.6" y1="378.26" x2="1048.6" y2="378.26" stroke="#e8e8e8" stroke-width="1.2" />
<line x1="1044.6" y1="369.62" x2="1048.6" y2="369.62" stroke="#e8e8e8" stroke-width="1.2" />
<line x1="1044.6" y1="360.98" x2="1048.6" y2="360.98" stroke="#e8e8e8" stroke-width="1.2" />
<line x1="1044.6" y1="352.34" x2="1048.6" y2="352.34" stroke="#e8e8e8" stroke-width="1.2" />
<line x1="1044.6" y1="343.7" x2="1052.6" y2="343.7" stroke="#e8e8e8" stroke-width="1.2" />
<line x1="1044.6" y1="335.06" x2="1048.6" y2="335.06" stroke="#e8e8e8" stroke-width="1.2" />
<line x1="1044.6" y1="326.42" x2="1048.6" y2="326.42" stroke="#e8e8e8" stroke-width="1.2" />
<line x1="1044.6" y1="317.78" x2="1048.6" y2="317.78" stroke="#e8e8e8" stroke-width="1.2" />
<line x1="1044.6" y1="309.14" x2="1048.6" y2="309.14" stroke="#e8e8e8" stroke-width="1.2" />
<line x1="1044.6" y1="300.5" x2="1052.6" y2="300.5" stroke="#e8e8e8" stroke-width="1.2" />
<line x1="1044.6" y1="291.86" x2="1048.6" y2="291.86" stroke="#e8e8e8" stroke-width="1.2" />
<line x1="1044.6" y1="283.22" x2="1048.6" y2="283.22" stroke="#e8e8e8" stroke-width="1.2" />
<line x1="1044.6" y1="274.58" x2="1048.6" y2="274.58" stroke="#e8e8e8" stroke-width="1.2" />
<line x1="1044.6" y1="265.94" x2="1048.6" y2="265.94" stroke="#e8e8e8" stroke-width="1.2" />
<line x1="1044.6" y1="257.3" x2="1052.6" y2="257.3" stroke="#e8e8e8" stroke-width="1.2" />
<line x1="1044.6" y1="248.66" x2="1048.6" y2="248.66" stroke="#e8e8e8" stroke-width="1.2" />
<line x1="1044.6" y1="240.02" x2="1048.6" y2="240.02" stroke="#e8e8e8" stroke-width="1.2" />
<line x1="1044.6" y1="231.38" x2="1048.6" y2="231.38" stroke="#e8e8e8" stroke-width="1.2" />
<rect x="1042.6" y="526.4" width="27.4" height="23.6" fill="#1b1b1b" />
<rect x="1042.6" y="526.4" width="26" height="22.2" fill="#383838" />
<circle cx="1054.6" cy="536.8" r="5.5" fill="none" stroke="#fff" stroke-width="2.4"/><path d="M1058.8 541.1999999999999 L1062.3999999999999 544.8" stroke="#fff" stroke-width="3" stroke-linecap="round"/>
<rect x="1076.6" y="526.4" width="27.4" height="23.6" fill="#1b1b1b" />
<rect x="1076.6" y="526.4" width="26" height="22.2" fill="#383838" />
<g fill="none" stroke="#fff"><circle cx="1088.2" cy="538.4" r="5.4" stroke-width="1.4"/><path d="M1085.8 530.1999999999999 H1090.6000000000001" stroke-width="1.8"/><path d="M1088.2 530.8 V532.8" stroke-width="1.6"/><path d="M1083.0 533.0 L1084.2 534.1999999999999 M1093.4 533.0 L1092.2 534.1999999999999" stroke-width="1.3"/><path d="M1089.7 544.0 H1094.8" stroke-width="1.5"/></g><path d="M1088.2 535.0 A3.4 3.4 0 0 1 1091.6000000000001 538.4 H1088.2 Z" fill="#fff"/><path d="M1094.2 541.0 L1097.8 544.0 L1094.2 547.0 Z" fill="#fff"/>
<rect x="1805.6" y="116.4" width="2.6" height="2.6" fill="#fff" />
<rect x="1805.6" y="122.9" width="2.6" height="2.6" fill="#fff" />
<rect x="1805.6" y="129.3" width="2.6" height="2.6" fill="#fff" />
<rect x="1827" y="119.2" width="11.6" height="11.6" fill="none" stroke="#fff" stroke-width="2.4"/>
<path d="M1852.3999999999999 117.6 L1865.2 130.4 M1865.2 117.6 L1852.3999999999999 130.4" stroke="#fff" stroke-width="4" fill="none"/>
<g fill="none" stroke="#fff" stroke-width="2.4"><path d="M1143.40 116.60 A5.3 5.3 0 1 1 1138.60 119.66" stroke-linecap="round"/><path d="M1143.40 115.40 V132.80"/></g>
<rect x="1134" y="152" width="13" height="13" fill="#ffffff" shape-rendering="crispEdges"/>
<rect x="1135" y="153" width="11" height="11" fill="#3fa7c6" shape-rendering="crispEdges"/>
<line x1="1134" y1="171.5" x2="1878" y2="171.5" stroke="#2c2c2c" stroke-width="1.4" />
<line x1="1211" y1="221.3" x2="1782" y2="221.3" stroke="#e8e8e8" stroke-width="1.2" />
<line x1="1211.95" y1="221.3" x2="1211.95" y2="216.3" stroke="#e8e8e8" stroke-width="1.2" />
<line x1="1237.9" y1="221.3" x2="1237.9" y2="216.3" stroke="#e8e8e8" stroke-width="1.2" />
<line x1="1263.85" y1="221.3" x2="1263.85" y2="216.3" stroke="#e8e8e8" stroke-width="1.2" />
<line x1="1289.8" y1="221.3" x2="1289.8" y2="213.3" stroke="#e8e8e8" stroke-width="1.2" />
<line x1="1315.75" y1="221.3" x2="1315.75" y2="216.3" stroke="#e8e8e8" stroke-width="1.2" />
<line x1="1341.7" y1="221.3" x2="1341.7" y2="216.3" stroke="#e8e8e8" stroke-width="1.2" />
<line x1="1367.65" y1="221.3" x2="1367.65" y2="216.3" stroke="#e8e8e8" stroke-width="1.2" />
<line x1="1393.6" y1="221.3" x2="1393.6" y2="213.3" stroke="#e8e8e8" stroke-width="1.2" />
<line x1="1419.55" y1="221.3" x2="1419.55" y2="216.3" stroke="#e8e8e8" stroke-width="1.2" />
<line x1="1445.5" y1="221.3" x2="1445.5" y2="216.3" stroke="#e8e8e8" stroke-width="1.2" />
<line x1="1471.45" y1="221.3" x2="1471.45" y2="216.3" stroke="#e8e8e8" stroke-width="1.2" />
<line x1="1497.4" y1="221.3" x2="1497.4" y2="213.3" stroke="#e8e8e8" stroke-width="1.2" />
<line x1="1523.35" y1="221.3" x2="1523.35" y2="216.3" stroke="#e8e8e8" stroke-width="1.2" />
<line x1="1549.3" y1="221.3" x2="1549.3" y2="216.3" stroke="#e8e8e8" stroke-width="1.2" />
<line x1="1575.25" y1="221.3" x2="1575.25" y2="216.3" stroke="#e8e8e8" stroke-width="1.2" />
<line x1="1601.2" y1="221.3" x2="1601.2" y2="213.3" stroke="#e8e8e8" stroke-width="1.2" />
<line x1="1627.15" y1="221.3" x2="1627.15" y2="216.3" stroke="#e8e8e8" stroke-width="1.2" />
<line x1="1653.1" y1="221.3" x2="1653.1" y2="216.3" stroke="#e8e8e8" stroke-width="1.2" />
<line x1="1679.05" y1="221.3" x2="1679.05" y2="216.3" stroke="#e8e8e8" stroke-width="1.2" />
<line x1="1705" y1="221.3" x2="1705" y2="213.3" stroke="#e8e8e8" stroke-width="1.2" />
<line x1="1730.95" y1="221.3" x2="1730.95" y2="216.3" stroke="#e8e8e8" stroke-width="1.2" />
<line x1="1756.9" y1="221.3" x2="1756.9" y2="216.3" stroke="#e8e8e8" stroke-width="1.2" />
<line x1="1206.8" y1="226" x2="1206.8" y2="488" stroke="#e8e8e8" stroke-width="1.2" />
<line x1="1206.8" y1="481.04" x2="1202.8" y2="481.04" stroke="#e8e8e8" stroke-width="1.2" />
<line x1="1206.8" y1="470.72" x2="1202.8" y2="470.72" stroke="#e8e8e8" stroke-width="1.2" />
<line x1="1206.8" y1="460.4" x2="1198.8" y2="460.4" stroke="#e8e8e8" stroke-width="1.2" />
<line x1="1206.8" y1="450.08" x2="1202.8" y2="450.08" stroke="#e8e8e8" stroke-width="1.2" />
<line x1="1206.8" y1="439.76" x2="1202.8" y2="439.76" stroke="#e8e8e8" stroke-width="1.2" />
<line x1="1206.8" y1="429.44" x2="1202.8" y2="429.44" stroke="#e8e8e8" stroke-width="1.2" />
<line x1="1206.8" y1="419.12" x2="1202.8" y2="419.12" stroke="#e8e8e8" stroke-width="1.2" />
<line x1="1206.8" y1="408.8" x2="1198.8" y2="408.8" stroke="#e8e8e8" stroke-width="1.2" />
<line x1="1206.8" y1="398.48" x2="1202.8" y2="398.48" stroke="#e8e8e8" stroke-width="1.2" />
<line x1="1206.8" y1="388.16" x2="1202.8" y2="388.16" stroke="#e8e8e8" stroke-width="1.2" />
<line x1="1206.8" y1="377.84" x2="1202.8" y2="377.84" stroke="#e8e8e8" stroke-width="1.2" />
<line x1="1206.8" y1="367.52" x2="1202.8" y2="367.52" stroke="#e8e8e8" stroke-width="1.2" />
<line x1="1206.8" y1="357.2" x2="1198.8" y2="357.2" stroke="#e8e8e8" stroke-width="1.2" />
<line x1="1206.8" y1="346.88" x2="1202.8" y2="346.88" stroke="#e8e8e8" stroke-width="1.2" />
<line x1="1206.8" y1="336.56" x2="1202.8" y2="336.56" stroke="#e8e8e8" stroke-width="1.2" />
<line x1="1206.8" y1="326.24" x2="1202.8" y2="326.24" stroke="#e8e8e8" stroke-width="1.2" />
<line x1="1206.8" y1="315.92" x2="1202.8" y2="315.92" stroke="#e8e8e8" stroke-width="1.2" />
<line x1="1206.8" y1="305.6" x2="1198.8" y2="305.6" stroke="#e8e8e8" stroke-width="1.2" />
<line x1="1206.8" y1="295.28" x2="1202.8" y2="295.28" stroke="#e8e8e8" stroke-width="1.2" />
<line x1="1206.8" y1="284.96" x2="1202.8" y2="284.96" stroke="#e8e8e8" stroke-width="1.2" />
<line x1="1206.8" y1="274.64" x2="1202.8" y2="274.64" stroke="#e8e8e8" stroke-width="1.2" />
<line x1="1206.8" y1="264.32" x2="1202.8" y2="264.32" stroke="#e8e8e8" stroke-width="1.2" />
<line x1="1206.8" y1="254" x2="1198.8" y2="254" stroke="#e8e8e8" stroke-width="1.2" />
<line x1="1206.8" y1="243.68" x2="1202.8" y2="243.68" stroke="#e8e8e8" stroke-width="1.2" />
<line x1="1206.8" y1="233.36" x2="1202.8" y2="233.36" stroke="#e8e8e8" stroke-width="1.2" />
<g transform="translate(1396.30,242.60) scale(5.26)" shape-rendering="crispEdges"><path fill="#a8ba5a" d="M21 43h1.03v1.03h-1.03z"/><path fill="#acbb57" d="M20 42h3.03v1.03h-3.03zM19 43h2.03v1.03h-2.03zM22 43h1.03v1.03h-1.03z"/><path fill="#b1bc53" d="M20 41h3.03v1.03h-3.03zM19 42h1.03v1.03h-1.03zM23 42h1.03v1.03h-1.03zM23 43h1.03v1.03h-1.03z"/><path fill="#b5bd50" d="M20 40h2.03v1.03h-2.03zM19 41h1.03v1.03h-1.03zM23 41h1.03v1.03h-1.03zM18 42h1.03v1.03h-1.03zM24 42h1.03v1.03h-1.03zM18 43h1.03v1.03h-1.03zM24 43h1.03v1.03h-1.03z"/><path fill="#b9be4d" d="M12 2h4.03v1.03h-4.03zM10 3h5.03v1.03h-5.03zM10 4h4.03v1.03h-4.03zM10 5h3.03v1.03h-3.03zM19 40h1.03v1.03h-1.03zM22 40h2.03v1.03h-2.03zM18 41h1.03v1.03h-1.03zM24 41h1.03v1.03h-1.03zM25 43h1.03v1.03h-1.03z"/><path fill="#bec04a" d="M16 0h3.03v1.03h-3.03zM13 1h6.03v1.03h-6.03zM11 2h1.03v1.03h-1.03zM16 2h3.03v1.03h-3.03zM9 3h1.03v1.03h-1.03zM15 3h3.03v1.03h-3.03zM8 4h2.03v1.03h-2.03zM14 4h3.03v1.03h-3.03zM8 5h2.03v1.03h-2.03zM13 5h3.03v1.03h-3.03zM8 6h6.03v1.03h-6.03zM9 7h4.03v1.03h-4.03zM20 39h3.03v1.03h-3.03zM18 40h1.03v1.03h-1.03zM24 40h1.03v1.03h-1.03zM25 41h1.03v1.03h-1.03zM17 42h1.03v1.03h-1.03zM25 42h1.03v1.03h-1.03zM17 43h1.03v1.03h-1.03z"/><path fill="#c2c146" d="M19 0h2.03v1.03h-2.03zM19 1h2.03v1.03h-2.03zM19 2h2.03v1.03h-2.03zM18 3h2.03v1.03h-2.03zM17 4h2.03v1.03h-2.03zM7 5h1.03v1.03h-1.03zM16 5h2.03v1.03h-2.03zM7 6h1.03v1.03h-1.03zM14 6h2.03v1.03h-2.03zM7 7h2.03v1.03h-2.03zM13 7h2.03v1.03h-2.03zM8 8h5.03v1.03h-5.03zM21 38h1.03v1.03h-1.03zM19 39h1.03v1.03h-1.03zM23 39h2.03v1.03h-2.03zM25 40h1.03v1.03h-1.03zM17 41h1.03v1.03h-1.03zM26 42h1.03v1.03h-1.03zM26 43h1.03v1.03h-1.03z"/><path fill="#c6c243" d="M21 0h2.03v1.03h-2.03zM21 1h2.03v1.03h-2.03zM21 2h1.03v1.03h-1.03zM20 3h1.03v1.03h-1.03zM19 4h1.03v1.03h-1.03zM18 5h1.03v1.03h-1.03zM6 6h1.03v1.03h-1.03zM16 6h2.03v1.03h-2.03zM6 7h1.03v1.03h-1.03zM15 7h2.03v1.03h-2.03zM7 8h1.03v1.03h-1.03zM13 8h2.03v1.03h-2.03zM8 9h5.03v1.03h-5.03zM19 38h2.03v1.03h-2.03zM22 38h2.03v1.03h-2.03zM18 39h1.03v1.03h-1.03zM17 40h1.03v1.03h-1.03zM26 41h1.03v1.03h-1.03zM16 42h1.03v1.03h-1.03zM16 43h1.03v1.03h-1.03zM27 43h1.03v1.03h-1.03z"/><path fill="#cbc340" d="M23 0h1.03v1.03h-1.03zM23 1h1.03v1.03h-1.03zM22 2h1.03v1.03h-1.03zM21 3h1.03v1.03h-1.03zM20 4h1.03v1.03h-1.03zM19 5h1.03v1.03h-1.03zM18 6h1.03v1.03h-1.03zM5 7h1.03v1.03h-1.03zM17 7h1.03v1.03h-1.03zM5 8h2.03v1.03h-2.03zM15 8h2.03v1.03h-2.03zM6 9h2.03v1.03h-2.03zM13 9h2.03v1.03h-2.03zM8 10h5.03v1.03h-5.03zM20 37h3.03v1.03h-3.03zM18 38h1.03v1.03h-1.03zM24 38h1.03v1.03h-1.03zM17 39h1.03v1.03h-1.03zM25 39h1.03v1.03h-1.03zM26 40h1.03v1.03h-1.03zM16 41h1.03v1.03h-1.03zM27 41h1.03v1.03h-1.03zM27 42h1.03v1.03h-1.03z"/><path fill="#cfc43c" d="M24 0h1.03v1.03h-1.03zM24 1h1.03v1.03h-1.03zM23 2h1.03v1.03h-1.03zM22 3h2.03v1.03h-2.03zM21 4h2.03v1.03h-2.03zM20 5h2.03v1.03h-2.03zM19 6h1.03v1.03h-1.03zM18 7h1.03v1.03h-1.03zM4 8h1.03v1.03h-1.03zM17 8h1.03v1.03h-1.03zM5 9h1.03v1.03h-1.03zM15 9h2.03v1.03h-2.03zM6 10h2.03v1.03h-2.03zM13 10h2.03v1.03h-2.03zM8 11h5.03v1.03h-5.03zM19 37h1.03v1.03h-1.03zM23 37h1.03v1.03h-1.03zM25 38h1.03v1.03h-1.03zM26 39h1.03v1.03h-1.03zM16 40h1.03v1.03h-1.03zM27 40h1.03v1.03h-1.03z"/><path fill="#d4c539" d="M25 0h1.03v1.03h-1.03zM25 1h1.03v1.03h-1.03zM24 2h1.03v1.03h-1.03zM24 3h1.03v1.03h-1.03zM23 4h1.03v1.03h-1.03zM22 5h1.03v1.03h-1.03zM20 6h2.03v1.03h-2.03zM19 7h2.03v1.03h-2.03zM18 8h1.03v1.03h-1.03zM4 9h1.03v1.03h-1.03zM17 9h1.03v1.03h-1.03zM5 10h1.03v1.03h-1.03zM15 10h2.03v1.03h-2.03zM6 11h2.03v1.03h-2.03zM13 11h2.03v1.03h-2.03zM9 12h4.03v1.03h-4.03zM20 36h3.03v1.03h-3.03zM18 37h1.03v1.03h-1.03zM24 37h1.03v1.03h-1.03zM17 38h1.03v1.03h-1.03zM26 38h1.03v1.03h-1.03zM16 39h1.03v1.03h-1.03zM27 39h1.03v1.03h-1.03zM28 41h1.03v1.03h-1.03zM15 42h1.03v1.03h-1.03zM28 42h1.03v1.03h-1.03z"/><path fill="#d8c636" d="M26 0h1.03v1.03h-1.03zM26 1h1.03v1.03h-1.03zM25 2h1.03v1.03h-1.03zM25 3h1.03v1.03h-1.03zM24 4h1.03v1.03h-1.03zM23 5h1.03v1.03h-1.03zM22 6h1.03v1.03h-1.03zM21 7h1.03v1.03h-1.03zM19 8h2.03v1.03h-2.03zM3 9h1.03v1.03h-1.03zM18 9h1.03v1.03h-1.03zM4 10h1.03v1.03h-1.03zM17 10h1.03v1.03h-1.03zM5 11h1.03v1.03h-1.03zM15 11h2.03v1.03h-2.03zM6 12h3.03v1.03h-3.03zM13 12h2.03v1.03h-2.03zM10 13h2.03v1.03h-2.03zM18 36h2.03v1.03h-2.03zM23 36h2.03v1.03h-2.03zM17 37h1.03v1.03h-1.03zM25 37h1.03v1.03h-1.03zM16 38h1.03v1.03h-1.03zM27 38h1.03v1.03h-1.03zM28 40h1.03v1.03h-1.03zM15 41h1.03v1.03h-1.03zM29 42h1.03v1.03h-1.03z"/><path fill="#dcc732" d="M27 0h1.03v1.03h-1.03zM27 1h1.03v1.03h-1.03zM26 2h1.03v1.03h-1.03zM26 3h1.03v1.03h-1.03zM25 4h1.03v1.03h-1.03zM24 5h1.03v1.03h-1.03zM23 6h1.03v1.03h-1.03zM22 7h1.03v1.03h-1.03zM21 8h1.03v1.03h-1.03zM19 9h2.03v1.03h-2.03zM3 10h1.03v1.03h-1.03zM18 10h1.03v1.03h-1.03zM4 11h1.03v1.03h-1.03zM17 11h1.03v1.03h-1.03zM5 12h1.03v1.03h-1.03zM15 12h2.03v1.03h-2.03zM7 13h3.03v1.03h-3.03zM12 13h3.03v1.03h-3.03zM19 35h5.03v1.03h-5.03zM17 36h1.03v1.03h-1.03zM25 36h1.03v1.03h-1.03zM26 37h1.03v1.03h-1.03zM28 39h1.03v1.03h-1.03zM15 40h1.03v1.03h-1.03zM29 40h1.03v1.03h-1.03zM29 41h1.03v1.03h-1.03z"/><path fill="#e1c82f" d="M28 1h1.03v1.03h-1.03zM27 2h1.03v1.03h-1.03zM27 3h1.03v1.03h-1.03zM26 4h1.03v1.03h-1.03zM25 5h1.03v1.03h-1.03zM24 6h1.03v1.03h-1.03zM23 7h1.03v1.03h-1.03zM22 8h1.03v1.03h-1.03zM21 9h1.03v1.03h-1.03zM19 10h2.03v1.03h-2.03zM2 11h2.03v1.03h-2.03zM18 11h2.03v1.03h-2.03zM4 12h1.03v1.03h-1.03zM17 12h1.03v1.03h-1.03zM5 13h2.03v1.03h-2.03zM15 13h2.03v1.03h-2.03zM8 14h7.03v1.03h-7.03zM20 34h2.03v1.03h-2.03zM18 35h1.03v1.03h-1.03zM24 35h1.03v1.03h-1.03zM26 36h1.03v1.03h-1.03zM16 37h1.03v1.03h-1.03zM27 37h1.03v1.03h-1.03zM28 38h1.03v1.03h-1.03zM15 39h1.03v1.03h-1.03zM29 39h1.03v1.03h-1.03zM30 41h1.03v1.03h-1.03zM30 42h1.03v1.03h-1.03z"/><path fill="#e5c92c" d="M29 1h1.03v1.03h-1.03zM28 2h1.03v1.03h-1.03zM28 3h1.03v1.03h-1.03zM27 4h1.03v1.03h-1.03zM26 5h1.03v1.03h-1.03zM25 6h1.03v1.03h-1.03zM24 7h1.03v1.03h-1.03zM23 8h1.03v1.03h-1.03zM22 9h1.03v1.03h-1.03zM21 10h1.03v1.03h-1.03zM20 11h1.03v1.03h-1.03zM3 12h1.03v1.03h-1.03zM18 12h2.03v1.03h-2.03zM4 13h1.03v1.03h-1.03zM17 13h1.03v1.03h-1.03zM6 14h2.03v1.03h-2.03zM15 14h2.03v1.03h-2.03zM9 15h5.03v1.03h-5.03zM18 34h2.03v1.03h-2.03zM22 34h2.03v1.03h-2.03zM17 35h1.03v1.03h-1.03zM25 35h1.03v1.03h-1.03zM16 36h1.03v1.03h-1.03zM27 36h1.03v1.03h-1.03zM28 37h1.03v1.03h-1.03zM15 38h1.03v1.03h-1.03zM29 38h1.03v1.03h-1.03zM30 39h1.03v1.03h-1.03zM30 40h1.03v1.03h-1.03zM14 41h1.03v1.03h-1.03zM14 42h1.03v1.03h-1.03z"/><path fill="#e9ca28" d="M30 1h1.03v1.03h-1.03zM29 2h1.03v1.03h-1.03zM29 3h1.03v1.03h-1.03zM28 4h1.03v1.03h-1.03zM27 5h1.03v1.03h-1.03zM26 6h1.03v1.03h-1.03zM25 7h1.03v1.03h-1.03zM24 8h2.03v1.03h-2.03zM23 9h2.03v1.03h-2.03zM22 10h2.03v1.03h-2.03zM21 11h1.03v1.03h-1.03zM2 12h1.03v1.03h-1.03zM20 12h1.03v1.03h-1.03zM3 13h1.03v1.03h-1.03zM18 13h2.03v1.03h-2.03zM5 14h1.03v1.03h-1.03zM17 14h2.03v1.03h-2.03zM7 15h2.03v1.03h-2.03zM14 15h3.03v1.03h-3.03zM11 16h3.03v1.03h-3.03zM19 33h4.03v1.03h-4.03zM17 34h1.03v1.03h-1.03zM24 34h2.03v1.03h-2.03zM16 35h1.03v1.03h-1.03zM26 35h2.03v1.03h-2.03zM28 36h1.03v1.03h-1.03zM15 37h1.03v1.03h-1.03zM29 37h1.03v1.03h-1.03zM30 38h1.03v1.03h-1.03zM14 40h1.03v1.03h-1.03zM31 40h1.03v1.03h-1.03zM31 41h1.03v1.03h-1.03z"/><path fill="#eecc25" d="M30 2h1.03v1.03h-1.03zM30 3h1.03v1.03h-1.03zM29 4h1.03v1.03h-1.03zM28 5h1.03v1.03h-1.03zM27 6h1.03v1.03h-1.03zM26 7h2.03v1.03h-2.03zM26 8h1.03v1.03h-1.03zM25 9h1.03v1.03h-1.03zM24 10h1.03v1.03h-1.03zM22 11h2.03v1.03h-2.03zM21 12h2.03v1.03h-2.03zM2 13h1.03v1.03h-1.03zM20 13h2.03v1.03h-2.03zM3 14h2.03v1.03h-2.03zM19 14h2.03v1.03h-2.03zM5 15h2.03v1.03h-2.03zM17 15h2.03v1.03h-2.03zM8 16h3.03v1.03h-3.03zM14 16h3.03v1.03h-3.03zM19 32h3.03v1.03h-3.03zM17 33h2.03v1.03h-2.03zM23 33h2.03v1.03h-2.03zM16 34h1.03v1.03h-1.03zM26 34h1.03v1.03h-1.03zM15 35h1.03v1.03h-1.03zM28 35h1.03v1.03h-1.03zM15 36h1.03v1.03h-1.03zM29 36h1.03v1.03h-1.03zM30 37h1.03v1.03h-1.03zM14 38h1.03v1.03h-1.03zM31 38h1.03v1.03h-1.03zM14 39h1.03v1.03h-1.03zM31 39h1.03v1.03h-1.03zM32 40h1.03v1.03h-1.03zM32 41h1.03v1.03h-1.03z"/><path fill="#f2cd22" d="M31 2h1.03v1.03h-1.03zM31 3h1.03v1.03h-1.03zM30 4h1.03v1.03h-1.03zM29 5h1.03v1.03h-1.03zM28 6h1.03v1.03h-1.03zM28 7h1.03v1.03h-1.03zM27 8h1.03v1.03h-1.03zM26 9h1.03v1.03h-1.03zM25 10h1.03v1.03h-1.03zM24 11h2.03v1.03h-2.03zM23 12h2.03v1.03h-2.03zM1 13h1.03v1.03h-1.03zM22 13h2.03v1.03h-2.03zM2 14h1.03v1.03h-1.03zM21 14h2.03v1.03h-2.03zM4 15h1.03v1.03h-1.03zM19 15h3.03v1.03h-3.03zM6 16h2.03v1.03h-2.03zM17 16h3.03v1.03h-3.03zM9 17h9.03v1.03h-9.03zM17 32h2.03v1.03h-2.03zM22 32h3.03v1.03h-3.03zM16 33h1.03v1.03h-1.03zM25 33h2.03v1.03h-2.03zM15 34h1.03v1.03h-1.03zM27 34h1.03v1.03h-1.03zM29 35h1.03v1.03h-1.03zM30 36h1.03v1.03h-1.03zM14 37h1.03v1.03h-1.03zM31 37h1.03v1.03h-1.03zM32 38h1.03v1.03h-1.03zM32 39h1.03v1.03h-1.03zM33 40h1.03v1.03h-1.03zM13 42h1.03v1.03h-1.03z"/><path fill="#f6ce1f" d="M32 2h1.03v1.03h-1.03zM32 3h1.03v1.03h-1.03zM31 4h1.03v1.03h-1.03zM30 5h1.03v1.03h-1.03zM29 6h1.03v1.03h-1.03zM29 7h1.03v1.03h-1.03zM28 8h1.03v1.03h-1.03zM27 9h1.03v1.03h-1.03zM26 10h2.03v1.03h-2.03zM26 11h1.03v1.03h-1.03zM25 12h1.03v1.03h-1.03zM24 13h2.03v1.03h-2.03zM1 14h1.03v1.03h-1.03zM23 14h2.03v1.03h-2.03zM2 15h2.03v1.03h-2.03zM22 15h2.03v1.03h-2.03zM5 16h1.03v1.03h-1.03zM20 16h3.03v1.03h-3.03zM7 17h2.03v1.03h-2.03zM18 17h3.03v1.03h-3.03zM12 18h7.03v1.03h-7.03zM17 31h7.03v1.03h-7.03zM16 32h1.03v1.03h-1.03zM25 32h1.03v1.03h-1.03zM15 33h1.03v1.03h-1.03zM27 33h1.03v1.03h-1.03zM28 34h1.03v1.03h-1.03zM14 35h1.03v1.03h-1.03zM30 35h1.03v1.03h-1.03zM14 36h1.03v1.03h-1.03zM31 36h1.03v1.03h-1.03zM32 37h1.03v1.03h-1.03zM33 38h1.03v1.03h-1.03zM33 39h1.03v1.03h-1.03zM13 40h1.03v1.03h-1.03zM34 40h1.03v1.03h-1.03zM13 41h1.03v1.03h-1.03z"/><path fill="#fbcf1b" d="M33 3h1.03v1.03h-1.03zM32 4h1.03v1.03h-1.03zM31 5h1.03v1.03h-1.03zM30 6h2.03v1.03h-2.03zM30 7h1.03v1.03h-1.03zM29 8h1.03v1.03h-1.03zM28 9h2.03v1.03h-2.03zM28 10h1.03v1.03h-1.03zM27 11h2.03v1.03h-2.03zM26 12h2.03v1.03h-2.03zM26 13h2.03v1.03h-2.03zM25 14h2.03v1.03h-2.03zM1 15h1.03v1.03h-1.03zM24 15h2.03v1.03h-2.03zM3 16h2.03v1.03h-2.03zM23 16h3.03v1.03h-3.03zM6 17h1.03v1.03h-1.03zM21 17h4.03v1.03h-4.03zM9 18h3.03v1.03h-3.03zM19 18h4.03v1.03h-4.03zM14 19h7.03v1.03h-7.03zM20 29h1.03v1.03h-1.03zM17 30h7.03v1.03h-7.03zM16 31h1.03v1.03h-1.03zM24 31h2.03v1.03h-2.03zM15 32h1.03v1.03h-1.03zM26 32h2.03v1.03h-2.03zM28 33h1.03v1.03h-1.03zM14 34h1.03v1.03h-1.03zM29 34h2.03v1.03h-2.03zM31 35h1.03v1.03h-1.03zM32 36h1.03v1.03h-1.03zM13 37h1.03v1.03h-1.03zM33 37h1.03v1.03h-1.03zM13 38h1.03v1.03h-1.03zM34 38h1.03v1.03h-1.03zM13 39h1.03v1.03h-1.03zM34 39h2.03v1.03h-2.03z"/><path fill="#ffd018" d="M34 3h1.03v1.03h-1.03zM33 4h1.03v1.03h-1.03zM32 5h1.03v1.03h-1.03zM32 6h1.03v1.03h-1.03zM31 7h1.03v1.03h-1.03zM30 8h1.03v1.03h-1.03zM30 9h1.03v1.03h-1.03zM29 10h1.03v1.03h-1.03zM29 11h1.03v1.03h-1.03zM28 12h2.03v1.03h-2.03zM28 13h1.03v1.03h-1.03zM27 14h2.03v1.03h-2.03zM26 15h3.03v1.03h-3.03zM2 16h1.03v1.03h-1.03zM26 16h2.03v1.03h-2.03zM4 17h2.03v1.03h-2.03zM25 17h2.03v1.03h-2.03zM7 18h2.03v1.03h-2.03zM23 18h3.03v1.03h-3.03zM11 19h3.03v1.03h-3.03zM21 19h4.03v1.03h-4.03zM15 20h9.03v1.03h-9.03zM19 21h3.03v1.03h-3.03zM19 28h4.03v1.03h-4.03zM17 29h3.03v1.03h-3.03zM21 29h3.03v1.03h-3.03zM16 30h1.03v1.03h-1.03zM24 30h2.03v1.03h-2.03zM15 31h1.03v1.03h-1.03zM26 31h1.03v1.03h-1.03zM14 32h1.03v1.03h-1.03zM28 32h1.03v1.03h-1.03zM14 33h1.03v1.03h-1.03zM29 33h1.03v1.03h-1.03zM31 34h1.03v1.03h-1.03zM13 35h1.03v1.03h-1.03zM32 35h1.03v1.03h-1.03zM13 36h1.03v1.03h-1.03zM33 36h1.03v1.03h-1.03zM34 37h1.03v1.03h-1.03zM35 38h1.03v1.03h-1.03z"/><path fill="#fecc18" d="M34 4h1.03v1.03h-1.03zM33 5h1.03v1.03h-1.03zM33 6h1.03v1.03h-1.03zM32 7h1.03v1.03h-1.03zM31 8h1.03v1.03h-1.03zM31 9h1.03v1.03h-1.03zM30 10h2.03v1.03h-2.03zM30 11h1.03v1.03h-1.03zM30 12h1.03v1.03h-1.03zM29 13h2.03v1.03h-2.03zM29 14h2.03v1.03h-2.03zM29 15h2.03v1.03h-2.03zM0 16h2.03v1.03h-2.03zM28 16h2.03v1.03h-2.03zM3 17h1.03v1.03h-1.03zM27 17h3.03v1.03h-3.03zM6 18h1.03v1.03h-1.03zM26 18h3.03v1.03h-3.03zM9 19h2.03v1.03h-2.03zM25 19h3.03v1.03h-3.03zM13 20h2.03v1.03h-2.03zM24 20h3.03v1.03h-3.03zM16 21h3.03v1.03h-3.03zM22 21h4.03v1.03h-4.03zM18 22h6.03v1.03h-6.03zM19 23h4.03v1.03h-4.03zM20 24h3.03v1.03h-3.03zM20 25h3.03v1.03h-3.03zM19 26h4.03v1.03h-4.03zM18 27h6.03v1.03h-6.03zM17 28h2.03v1.03h-2.03zM23 28h2.03v1.03h-2.03zM16 29h1.03v1.03h-1.03zM24 29h2.03v1.03h-2.03zM15 30h1.03v1.03h-1.03zM26 30h1.03v1.03h-1.03zM14 31h1.03v1.03h-1.03zM27 31h2.03v1.03h-2.03zM29 32h1.03v1.03h-1.03zM13 33h1.03v1.03h-1.03zM30 33h2.03v1.03h-2.03zM13 34h1.03v1.03h-1.03zM32 34h1.03v1.03h-1.03zM33 35h2.03v1.03h-2.03zM34 36h2.03v1.03h-2.03zM35 37h2.03v1.03h-2.03zM36 38h1.03v1.03h-1.03zM12 41h1.03v1.03h-1.03z"/><path fill="#fdc819" d="M35 4h1.03v1.03h-1.03zM34 5h2.03v1.03h-2.03zM34 6h1.03v1.03h-1.03zM33 7h1.03v1.03h-1.03zM32 8h2.03v1.03h-2.03zM32 9h1.03v1.03h-1.03zM32 10h1.03v1.03h-1.03zM31 11h2.03v1.03h-2.03zM31 12h1.03v1.03h-1.03zM31 13h1.03v1.03h-1.03zM31 14h1.03v1.03h-1.03zM31 15h1.03v1.03h-1.03zM30 16h2.03v1.03h-2.03zM2 17h1.03v1.03h-1.03zM30 17h1.03v1.03h-1.03zM4 18h2.03v1.03h-2.03zM29 18h2.03v1.03h-2.03zM7 19h2.03v1.03h-2.03zM28 19h2.03v1.03h-2.03zM11 20h2.03v1.03h-2.03zM27 20h2.03v1.03h-2.03zM14 21h2.03v1.03h-2.03zM26 21h2.03v1.03h-2.03zM16 22h2.03v1.03h-2.03zM24 22h3.03v1.03h-3.03zM17 23h2.03v1.03h-2.03zM23 23h3.03v1.03h-3.03zM18 24h2.03v1.03h-2.03zM23 24h2.03v1.03h-2.03zM18 25h2.03v1.03h-2.03zM23 25h2.03v1.03h-2.03zM17 26h2.03v1.03h-2.03zM23 26h2.03v1.03h-2.03zM16 27h2.03v1.03h-2.03zM24 27h2.03v1.03h-2.03zM15 28h2.03v1.03h-2.03zM25 28h1.03v1.03h-1.03zM15 29h1.03v1.03h-1.03zM26 29h1.03v1.03h-1.03zM14 30h1.03v1.03h-1.03zM27 30h2.03v1.03h-2.03zM13 31h1.03v1.03h-1.03zM29 31h1.03v1.03h-1.03zM13 32h1.03v1.03h-1.03zM30 32h1.03v1.03h-1.03zM32 33h1.03v1.03h-1.03zM33 34h2.03v1.03h-2.03zM12 35h1.03v1.03h-1.03zM35 35h1.03v1.03h-1.03zM12 36h1.03v1.03h-1.03zM36 36h2.03v1.03h-2.03zM12 37h1.03v1.03h-1.03zM37 37h1.03v1.03h-1.03zM12 38h1.03v1.03h-1.03zM12 39h1.03v1.03h-1.03zM12 40h1.03v1.03h-1.03z"/><path fill="#fcc419" d="M36 5h1.03v1.03h-1.03zM35 6h1.03v1.03h-1.03zM34 7h1.03v1.03h-1.03zM34 8h1.03v1.03h-1.03zM33 9h1.03v1.03h-1.03zM33 10h1.03v1.03h-1.03zM33 11h1.03v1.03h-1.03zM32 12h2.03v1.03h-2.03zM32 13h1.03v1.03h-1.03zM32 14h1.03v1.03h-1.03zM32 15h1.03v1.03h-1.03zM32 16h1.03v1.03h-1.03zM0 17h2.03v1.03h-2.03zM31 17h2.03v1.03h-2.03zM3 18h1.03v1.03h-1.03zM31 18h1.03v1.03h-1.03zM6 19h1.03v1.03h-1.03zM30 19h2.03v1.03h-2.03zM9 20h2.03v1.03h-2.03zM29 20h2.03v1.03h-2.03zM12 21h2.03v1.03h-2.03zM28 21h2.03v1.03h-2.03zM14 22h2.03v1.03h-2.03zM27 22h2.03v1.03h-2.03zM15 23h2.03v1.03h-2.03zM26 23h2.03v1.03h-2.03zM16 24h2.03v1.03h-2.03zM25 24h2.03v1.03h-2.03zM16 25h2.03v1.03h-2.03zM25 25h2.03v1.03h-2.03zM16 26h1.03v1.03h-1.03zM25 26h2.03v1.03h-2.03zM15 27h1.03v1.03h-1.03zM26 27h1.03v1.03h-1.03zM14 28h1.03v1.03h-1.03zM26 28h2.03v1.03h-2.03zM14 29h1.03v1.03h-1.03zM27 29h2.03v1.03h-2.03zM13 30h1.03v1.03h-1.03zM29 30h1.03v1.03h-1.03zM30 31h1.03v1.03h-1.03zM12 32h1.03v1.03h-1.03zM31 32h2.03v1.03h-2.03zM12 33h1.03v1.03h-1.03zM33 33h2.03v1.03h-2.03zM12 34h1.03v1.03h-1.03zM35 34h1.03v1.03h-1.03zM36 35h2.03v1.03h-2.03zM38 36h1.03v1.03h-1.03z"/><path fill="#fac019" d="M36 6h1.03v1.03h-1.03zM35 7h2.03v1.03h-2.03zM35 8h1.03v1.03h-1.03zM34 9h1.03v1.03h-1.03zM34 10h1.03v1.03h-1.03zM34 11h1.03v1.03h-1.03zM34 12h1.03v1.03h-1.03zM33 13h1.03v1.03h-1.03zM33 14h1.03v1.03h-1.03zM33 15h1.03v1.03h-1.03zM33 16h1.03v1.03h-1.03zM33 17h1.03v1.03h-1.03zM2 18h1.03v1.03h-1.03zM32 18h1.03v1.03h-1.03zM5 19h1.03v1.03h-1.03zM32 19h1.03v1.03h-1.03zM7 20h2.03v1.03h-2.03zM31 20h1.03v1.03h-1.03zM10 21h2.03v1.03h-2.03zM30 21h1.03v1.03h-1.03zM13 22h1.03v1.03h-1.03zM29 22h1.03v1.03h-1.03zM14 23h1.03v1.03h-1.03zM28 23h1.03v1.03h-1.03zM15 24h1.03v1.03h-1.03zM27 24h2.03v1.03h-2.03zM15 25h1.03v1.03h-1.03zM27 25h1.03v1.03h-1.03zM15 26h1.03v1.03h-1.03zM27 26h1.03v1.03h-1.03zM14 27h1.03v1.03h-1.03zM27 27h1.03v1.03h-1.03zM13 28h1.03v1.03h-1.03zM28 28h1.03v1.03h-1.03zM13 29h1.03v1.03h-1.03zM29 29h1.03v1.03h-1.03zM12 30h1.03v1.03h-1.03zM30 30h1.03v1.03h-1.03zM12 31h1.03v1.03h-1.03zM31 31h2.03v1.03h-2.03zM33 32h1.03v1.03h-1.03zM35 33h1.03v1.03h-1.03zM36 34h2.03v1.03h-2.03zM38 35h2.03v1.03h-2.03z"/><path fill="#f9bc1a" d="M37 6h1.03v1.03h-1.03zM37 7h1.03v1.03h-1.03zM36 8h1.03v1.03h-1.03zM35 9h1.03v1.03h-1.03zM35 10h1.03v1.03h-1.03zM35 11h1.03v1.03h-1.03zM35 12h1.03v1.03h-1.03zM34 13h1.03v1.03h-1.03zM34 14h1.03v1.03h-1.03zM34 15h1.03v1.03h-1.03zM34 16h1.03v1.03h-1.03zM34 17h1.03v1.03h-1.03zM0 18h2.03v1.03h-2.03zM33 18h1.03v1.03h-1.03zM3 19h2.03v1.03h-2.03zM33 19h1.03v1.03h-1.03zM6 20h1.03v1.03h-1.03zM32 20h1.03v1.03h-1.03zM9 21h1.03v1.03h-1.03zM31 21h1.03v1.03h-1.03zM11 22h2.03v1.03h-2.03zM30 22h1.03v1.03h-1.03zM13 23h1.03v1.03h-1.03zM29 23h2.03v1.03h-2.03zM14 24h1.03v1.03h-1.03zM29 24h1.03v1.03h-1.03zM14 25h1.03v1.03h-1.03zM28 25h2.03v1.03h-2.03zM14 26h1.03v1.03h-1.03zM28 26h1.03v1.03h-1.03zM13 27h1.03v1.03h-1.03zM28 27h2.03v1.03h-2.03zM29 28h1.03v1.03h-1.03zM12 29h1.03v1.03h-1.03zM30 29h1.03v1.03h-1.03zM31 30h2.03v1.03h-2.03zM11 31h1.03v1.03h-1.03zM33 31h1.03v1.03h-1.03zM11 32h1.03v1.03h-1.03zM34 32h2.03v1.03h-2.03zM11 33h1.03v1.03h-1.03zM36 33h2.03v1.03h-2.03zM11 34h1.03v1.03h-1.03zM38 34h2.03v1.03h-2.03zM11 35h1.03v1.03h-1.03zM11 36h1.03v1.03h-1.03zM11 37h1.03v1.03h-1.03zM11 38h1.03v1.03h-1.03zM11 39h1.03v1.03h-1.03zM11 40h1.03v1.03h-1.03zM11 41h1.03v1.03h-1.03z"/><path fill="#f8b91a" d="M38 7h1.03v1.03h-1.03zM37 8h1.03v1.03h-1.03zM36 9h2.03v1.03h-2.03zM36 10h1.03v1.03h-1.03zM36 11h1.03v1.03h-1.03zM35 13h1.03v1.03h-1.03zM35 14h1.03v1.03h-1.03zM35 15h1.03v1.03h-1.03zM35 16h1.03v1.03h-1.03zM35 17h1.03v1.03h-1.03zM34 18h1.03v1.03h-1.03zM2 19h1.03v1.03h-1.03zM34 19h1.03v1.03h-1.03zM5 20h1.03v1.03h-1.03zM33 20h1.03v1.03h-1.03zM8 21h1.03v1.03h-1.03zM32 21h2.03v1.03h-2.03zM10 22h1.03v1.03h-1.03zM31 22h2.03v1.03h-2.03zM12 23h1.03v1.03h-1.03zM31 23h1.03v1.03h-1.03zM13 24h1.03v1.03h-1.03zM30 24h1.03v1.03h-1.03zM13 25h1.03v1.03h-1.03zM30 25h1.03v1.03h-1.03zM13 26h1.03v1.03h-1.03zM29 26h2.03v1.03h-2.03zM12 27h1.03v1.03h-1.03zM30 27h1.03v1.03h-1.03zM12 28h1.03v1.03h-1.03zM30 28h2.03v1.03h-2.03zM11 29h1.03v1.03h-1.03zM31 29h2.03v1.03h-2.03zM11 30h1.03v1.03h-1.03zM33 30h1.03v1.03h-1.03zM34 31h2.03v1.03h-2.03zM36 32h2.03v1.03h-2.03zM38 33h2.03v1.03h-2.03zM40 34h1.03v1.03h-1.03z"/><path fill="#f7b51a" d="M38 8h1.03v1.03h-1.03zM38 9h1.03v1.03h-1.03zM37 10h1.03v1.03h-1.03zM37 11h1.03v1.03h-1.03zM36 12h1.03v1.03h-1.03zM36 13h1.03v1.03h-1.03zM36 14h1.03v1.03h-1.03zM36 15h1.03v1.03h-1.03zM36 16h1.03v1.03h-1.03zM35 18h1.03v1.03h-1.03zM0 19h2.03v1.03h-2.03zM35 19h1.03v1.03h-1.03zM4 20h1.03v1.03h-1.03zM34 20h1.03v1.03h-1.03zM6 21h2.03v1.03h-2.03zM34 21h1.03v1.03h-1.03zM9 22h1.03v1.03h-1.03zM33 22h1.03v1.03h-1.03zM11 23h1.03v1.03h-1.03zM32 23h1.03v1.03h-1.03zM12 24h1.03v1.03h-1.03zM31 24h1.03v1.03h-1.03zM12 25h1.03v1.03h-1.03zM31 25h1.03v1.03h-1.03zM12 26h1.03v1.03h-1.03zM31 26h1.03v1.03h-1.03zM31 27h1.03v1.03h-1.03zM11 28h1.03v1.03h-1.03zM32 28h1.03v1.03h-1.03zM33 29h1.03v1.03h-1.03zM34 30h2.03v1.03h-2.03zM10 31h1.03v1.03h-1.03zM36 31h2.03v1.03h-2.03zM10 32h1.03v1.03h-1.03zM38 32h2.03v1.03h-2.03zM10 33h1.03v1.03h-1.03zM40 33h1.03v1.03h-1.03zM10 34h1.03v1.03h-1.03zM10 35h1.03v1.03h-1.03z"/><path fill="#f6b11a" d="M39 8h1.03v1.03h-1.03zM39 9h1.03v1.03h-1.03zM38 10h1.03v1.03h-1.03zM38 11h1.03v1.03h-1.03zM37 12h1.03v1.03h-1.03zM37 13h1.03v1.03h-1.03zM37 14h1.03v1.03h-1.03zM37 15h1.03v1.03h-1.03zM36 17h1.03v1.03h-1.03zM36 18h1.03v1.03h-1.03zM36 19h1.03v1.03h-1.03zM2 20h2.03v1.03h-2.03zM35 20h1.03v1.03h-1.03zM5 21h1.03v1.03h-1.03zM35 21h1.03v1.03h-1.03zM8 22h1.03v1.03h-1.03zM34 22h1.03v1.03h-1.03zM10 23h1.03v1.03h-1.03zM33 23h1.03v1.03h-1.03zM11 24h1.03v1.03h-1.03zM32 24h2.03v1.03h-2.03zM11 25h1.03v1.03h-1.03zM32 25h1.03v1.03h-1.03zM11 26h1.03v1.03h-1.03zM32 26h1.03v1.03h-1.03zM11 27h1.03v1.03h-1.03zM32 27h2.03v1.03h-2.03zM33 28h1.03v1.03h-1.03zM10 29h1.03v1.03h-1.03zM34 29h2.03v1.03h-2.03zM10 30h1.03v1.03h-1.03zM36 30h1.03v1.03h-1.03zM38 31h1.03v1.03h-1.03zM40 32h2.03v1.03h-2.03zM10 36h1.03v1.03h-1.03zM10 37h1.03v1.03h-1.03zM10 38h1.03v1.03h-1.03zM10 39h1.03v1.03h-1.03zM10 40h1.03v1.03h-1.03z"/><path fill="#f5ad1b" d="M40 9h1.03v1.03h-1.03zM39 10h1.03v1.03h-1.03zM39 11h1.03v1.03h-1.03zM38 12h1.03v1.03h-1.03zM38 13h1.03v1.03h-1.03zM37 16h1.03v1.03h-1.03zM37 17h1.03v1.03h-1.03zM37 18h1.03v1.03h-1.03zM0 20h2.03v1.03h-2.03zM36 20h1.03v1.03h-1.03zM4 21h1.03v1.03h-1.03zM7 22h1.03v1.03h-1.03zM35 22h1.03v1.03h-1.03zM9 23h1.03v1.03h-1.03zM34 23h1.03v1.03h-1.03zM10 24h1.03v1.03h-1.03zM34 24h1.03v1.03h-1.03zM10 25h1.03v1.03h-1.03zM33 25h2.03v1.03h-2.03zM10 26h1.03v1.03h-1.03zM33 26h2.03v1.03h-2.03zM10 27h1.03v1.03h-1.03zM34 27h1.03v1.03h-1.03zM10 28h1.03v1.03h-1.03zM34 28h2.03v1.03h-2.03zM36 29h1.03v1.03h-1.03zM37 30h2.03v1.03h-2.03zM9 31h1.03v1.03h-1.03zM39 31h3.03v1.03h-3.03zM9 32h1.03v1.03h-1.03zM9 33h1.03v1.03h-1.03z"/><path fill="#f4a91b" d="M40 10h1.03v1.03h-1.03zM40 11h1.03v1.03h-1.03zM39 12h1.03v1.03h-1.03zM39 13h1.03v1.03h-1.03zM38 14h1.03v1.03h-1.03zM38 15h1.03v1.03h-1.03zM38 16h1.03v1.03h-1.03zM37 19h1.03v1.03h-1.03zM37 20h1.03v1.03h-1.03zM3 21h1.03v1.03h-1.03zM36 21h1.03v1.03h-1.03zM6 22h1.03v1.03h-1.03zM36 22h1.03v1.03h-1.03zM8 23h1.03v1.03h-1.03zM35 23h1.03v1.03h-1.03zM9 24h1.03v1.03h-1.03zM35 24h1.03v1.03h-1.03zM35 25h1.03v1.03h-1.03zM35 26h1.03v1.03h-1.03zM35 27h1.03v1.03h-1.03zM9 28h1.03v1.03h-1.03zM36 28h1.03v1.03h-1.03zM9 29h1.03v1.03h-1.03zM37 29h2.03v1.03h-2.03zM9 30h1.03v1.03h-1.03zM39 30h2.03v1.03h-2.03zM9 34h1.03v1.03h-1.03zM9 35h1.03v1.03h-1.03zM9 36h1.03v1.03h-1.03z"/><path fill="#f2a51b" d="M41 11h1.03v1.03h-1.03zM40 12h1.03v1.03h-1.03zM39 14h1.03v1.03h-1.03zM39 15h1.03v1.03h-1.03zM38 17h1.03v1.03h-1.03zM38 18h1.03v1.03h-1.03zM38 19h1.03v1.03h-1.03zM1 21h2.03v1.03h-2.03zM37 21h1.03v1.03h-1.03zM5 22h1.03v1.03h-1.03zM37 22h1.03v1.03h-1.03zM7 23h1.03v1.03h-1.03zM36 23h1.03v1.03h-1.03zM8 24h1.03v1.03h-1.03zM36 24h1.03v1.03h-1.03zM9 25h1.03v1.03h-1.03zM36 25h1.03v1.03h-1.03zM9 26h1.03v1.03h-1.03zM36 26h1.03v1.03h-1.03zM9 27h1.03v1.03h-1.03zM36 27h2.03v1.03h-2.03zM37 28h2.03v1.03h-2.03zM39 29h2.03v1.03h-2.03zM41 30h2.03v1.03h-2.03zM9 37h1.03v1.03h-1.03zM9 38h1.03v1.03h-1.03zM9 39h1.03v1.03h-1.03zM9 40h1.03v1.03h-1.03z"/><path fill="#f1a11c" d="M41 12h1.03v1.03h-1.03zM40 13h1.03v1.03h-1.03zM40 14h1.03v1.03h-1.03zM39 16h1.03v1.03h-1.03zM39 17h1.03v1.03h-1.03zM39 18h1.03v1.03h-1.03zM38 20h1.03v1.03h-1.03zM0 21h1.03v1.03h-1.03zM38 21h1.03v1.03h-1.03zM3 22h2.03v1.03h-2.03zM6 23h1.03v1.03h-1.03zM37 23h1.03v1.03h-1.03zM7 24h1.03v1.03h-1.03zM37 24h1.03v1.03h-1.03zM8 25h1.03v1.03h-1.03zM37 25h1.03v1.03h-1.03zM8 26h1.03v1.03h-1.03zM37 26h1.03v1.03h-1.03zM8 27h1.03v1.03h-1.03zM38 27h1.03v1.03h-1.03zM8 28h1.03v1.03h-1.03zM39 28h2.03v1.03h-2.03zM8 29h1.03v1.03h-1.03zM41 29h2.03v1.03h-2.03zM8 30h1.03v1.03h-1.03zM8 31h1.03v1.03h-1.03zM8 32h1.03v1.03h-1.03zM8 33h1.03v1.03h-1.03zM8 34h1.03v1.03h-1.03z"/><path fill="#f09d1c" d="M41 13h1.03v1.03h-1.03zM41 14h1.03v1.03h-1.03zM40 15h1.03v1.03h-1.03zM40 16h1.03v1.03h-1.03zM40 17h1.03v1.03h-1.03zM39 19h1.03v1.03h-1.03zM39 20h1.03v1.03h-1.03zM39 21h1.03v1.03h-1.03zM2 22h1.03v1.03h-1.03zM38 22h1.03v1.03h-1.03zM5 23h1.03v1.03h-1.03zM38 23h1.03v1.03h-1.03zM6 24h1.03v1.03h-1.03zM38 24h1.03v1.03h-1.03zM7 25h1.03v1.03h-1.03zM38 25h1.03v1.03h-1.03zM38 26h2.03v1.03h-2.03zM39 27h2.03v1.03h-2.03zM41 28h2.03v1.03h-2.03zM8 35h1.03v1.03h-1.03zM8 36h1.03v1.03h-1.03zM8 37h1.03v1.03h-1.03z"/><path fill="#ef991c" d="M42 13h1.03v1.03h-1.03zM42 14h1.03v1.03h-1.03zM41 15h1.03v1.03h-1.03zM41 16h1.03v1.03h-1.03zM40 18h1.03v1.03h-1.03zM40 19h1.03v1.03h-1.03zM40 20h1.03v1.03h-1.03zM0 22h2.03v1.03h-2.03zM39 22h1.03v1.03h-1.03zM4 23h1.03v1.03h-1.03zM39 23h1.03v1.03h-1.03zM39 24h1.03v1.03h-1.03zM39 25h1.03v1.03h-1.03zM7 26h1.03v1.03h-1.03zM40 26h1.03v1.03h-1.03zM7 27h1.03v1.03h-1.03zM41 27h3.03v1.03h-3.03zM7 28h1.03v1.03h-1.03zM7 29h1.03v1.03h-1.03zM7 30h1.03v1.03h-1.03zM7 31h1.03v1.03h-1.03zM7 32h1.03v1.03h-1.03zM8 38h1.03v1.03h-1.03zM8 39h1.03v1.03h-1.03z"/><path fill="#ee961c" d="M42 15h1.03v1.03h-1.03zM42 16h1.03v1.03h-1.03zM41 17h1.03v1.03h-1.03zM41 18h1.03v1.03h-1.03zM41 19h1.03v1.03h-1.03zM40 21h1.03v1.03h-1.03zM40 22h1.03v1.03h-1.03zM3 23h1.03v1.03h-1.03zM40 23h1.03v1.03h-1.03zM5 24h1.03v1.03h-1.03zM40 24h1.03v1.03h-1.03zM6 25h1.03v1.03h-1.03zM40 25h2.03v1.03h-2.03zM6 26h1.03v1.03h-1.03zM41 26h3.03v1.03h-3.03zM7 33h1.03v1.03h-1.03zM7 34h1.03v1.03h-1.03zM7 35h1.03v1.03h-1.03z"/><path fill="#ed921d" d="M43 16h1.03v1.03h-1.03zM42 17h1.03v1.03h-1.03zM42 18h1.03v1.03h-1.03zM42 19h1.03v1.03h-1.03zM41 20h1.03v1.03h-1.03zM41 21h1.03v1.03h-1.03zM41 22h1.03v1.03h-1.03zM1 23h2.03v1.03h-2.03zM41 23h1.03v1.03h-1.03zM4 24h1.03v1.03h-1.03zM41 24h2.03v1.03h-2.03zM5 25h1.03v1.03h-1.03zM42 25h2.03v1.03h-2.03zM6 27h1.03v1.03h-1.03zM6 28h1.03v1.03h-1.03zM6 29h1.03v1.03h-1.03zM7 36h1.03v1.03h-1.03zM7 37h1.03v1.03h-1.03zM7 38h1.03v1.03h-1.03z"/><path fill="#eb8e1d" d="M43 17h1.03v1.03h-1.03zM43 18h1.03v1.03h-1.03zM43 19h1.03v1.03h-1.03zM42 20h2.03v1.03h-2.03zM42 21h2.03v1.03h-2.03zM42 22h2.03v1.03h-2.03zM0 23h1.03v1.03h-1.03zM42 23h2.03v1.03h-2.03zM3 24h1.03v1.03h-1.03zM43 24h1.03v1.03h-1.03zM4 25h1.03v1.03h-1.03zM5 26h1.03v1.03h-1.03zM6 30h1.03v1.03h-1.03zM6 31h1.03v1.03h-1.03zM6 32h1.03v1.03h-1.03zM6 33h1.03v1.03h-1.03zM6 34h1.03v1.03h-1.03z"/><path fill="#ea8a1d" d="M2 24h1.03v1.03h-1.03zM5 27h1.03v1.03h-1.03zM5 28h1.03v1.03h-1.03zM6 35h1.03v1.03h-1.03zM6 36h1.03v1.03h-1.03zM6 37h1.03v1.03h-1.03z"/><path fill="#e9861e" d="M0 24h2.03v1.03h-2.03zM3 25h1.03v1.03h-1.03zM4 26h1.03v1.03h-1.03zM5 29h1.03v1.03h-1.03zM5 30h1.03v1.03h-1.03zM5 31h1.03v1.03h-1.03z"/><path fill="#e8821e" d="M2 25h1.03v1.03h-1.03zM3 26h1.03v1.03h-1.03zM4 27h1.03v1.03h-1.03zM5 32h1.03v1.03h-1.03zM5 33h1.03v1.03h-1.03zM5 34h1.03v1.03h-1.03zM5 35h1.03v1.03h-1.03zM5 36h1.03v1.03h-1.03z"/><path fill="#e67d1f" d="M0 25h2.03v1.03h-2.03zM3 27h1.03v1.03h-1.03zM4 28h1.03v1.03h-1.03zM4 29h1.03v1.03h-1.03z"/><path fill="#e47820" d="M2 26h1.03v1.03h-1.03zM3 28h1.03v1.03h-1.03zM4 30h1.03v1.03h-1.03zM4 31h1.03v1.03h-1.03zM4 32h1.03v1.03h-1.03zM4 33h1.03v1.03h-1.03zM4 34h1.03v1.03h-1.03zM4 35h1.03v1.03h-1.03z"/><path fill="#e27320" d="M0 26h2.03v1.03h-2.03zM2 27h1.03v1.03h-1.03zM3 29h1.03v1.03h-1.03z"/><path fill="#e06e21" d="M1 27h1.03v1.03h-1.03zM2 28h1.03v1.03h-1.03zM3 30h1.03v1.03h-1.03zM3 31h1.03v1.03h-1.03zM3 32h1.03v1.03h-1.03zM3 34h1.03v1.03h-1.03z"/><path fill="#de6922" d="M0 27h1.03v1.03h-1.03zM2 29h1.03v1.03h-1.03zM3 33h1.03v1.03h-1.03z"/><path fill="#db6422" d="M1 28h1.03v1.03h-1.03zM2 30h1.03v1.03h-1.03zM2 31h1.03v1.03h-1.03z"/><path fill="#d95f23" d="M1 29h1.03v1.03h-1.03zM2 32h1.03v1.03h-1.03z"/><path fill="#d75a24" d="M1 30h1.03v1.03h-1.03z"/></g>
<circle cx="1512.8" cy="357.5" r="120.6" fill="none" stroke="#3fa7c6" stroke-width="2.7"/>
<rect x="1477.6" y="397" width="198.4" height="21.6" fill="#7aa0c8" fill-opacity="0.2"/>
<rect x="1787.4" y="226" width="10.4" height="262" fill="url(#cbW)" />
<line x1="1800.6" y1="226" x2="1800.6" y2="488" stroke="#e8e8e8" stroke-width="1.2" />
<line x1="1800.6" y1="479.34" x2="1804.6" y2="479.34" stroke="#e8e8e8" stroke-width="1.2" />
<line x1="1800.6" y1="469.96" x2="1804.6" y2="469.96" stroke="#e8e8e8" stroke-width="1.2" />
<line x1="1800.6" y1="460.58" x2="1804.6" y2="460.58" stroke="#e8e8e8" stroke-width="1.2" />
<line x1="1800.6" y1="451.2" x2="1808.6" y2="451.2" stroke="#e8e8e8" stroke-width="1.2" />
<line x1="1800.6" y1="441.82" x2="1804.6" y2="441.82" stroke="#e8e8e8" stroke-width="1.2" />
<line x1="1800.6" y1="432.44" x2="1804.6" y2="432.44" stroke="#e8e8e8" stroke-width="1.2" />
<line x1="1800.6" y1="423.06" x2="1804.6" y2="423.06" stroke="#e8e8e8" stroke-width="1.2" />
<line x1="1800.6" y1="413.68" x2="1804.6" y2="413.68" stroke="#e8e8e8" stroke-width="1.2" />
<line x1="1800.6" y1="404.3" x2="1808.6" y2="404.3" stroke="#e8e8e8" stroke-width="1.2" />
<line x1="1800.6" y1="394.92" x2="1804.6" y2="394.92" stroke="#e8e8e8" stroke-width="1.2" />
<line x1="1800.6" y1="385.54" x2="1804.6" y2="385.54" stroke="#e8e8e8" stroke-width="1.2" />
<line x1="1800.6" y1="376.16" x2="1804.6" y2="376.16" stroke="#e8e8e8" stroke-width="1.2" />
<line x1="1800.6" y1="366.78" x2="1804.6" y2="366.78" stroke="#e8e8e8" stroke-width="1.2" />
<line x1="1800.6" y1="357.4" x2="1808.6" y2="357.4" stroke="#e8e8e8" stroke-width="1.2" />
<line x1="1800.6" y1="348.02" x2="1804.6" y2="348.02" stroke="#e8e8e8" stroke-width="1.2" />
<line x1="1800.6" y1="338.64" x2="1804.6" y2="338.64" stroke="#e8e8e8" stroke-width="1.2" />
<line x1="1800.6" y1="329.26" x2="1804.6" y2="329.26" stroke="#e8e8e8" stroke-width="1.2" />
<line x1="1800.6" y1="319.88" x2="1804.6" y2="319.88" stroke="#e8e8e8" stroke-width="1.2" />
<line x1="1800.6" y1="310.5" x2="1808.6" y2="310.5" stroke="#e8e8e8" stroke-width="1.2" />
<line x1="1800.6" y1="301.12" x2="1804.6" y2="301.12" stroke="#e8e8e8" stroke-width="1.2" />
<line x1="1800.6" y1="291.74" x2="1804.6" y2="291.74" stroke="#e8e8e8" stroke-width="1.2" />
<line x1="1800.6" y1="282.36" x2="1804.6" y2="282.36" stroke="#e8e8e8" stroke-width="1.2" />
<line x1="1800.6" y1="272.98" x2="1804.6" y2="272.98" stroke="#e8e8e8" stroke-width="1.2" />
<line x1="1800.6" y1="263.6" x2="1808.6" y2="263.6" stroke="#e8e8e8" stroke-width="1.2" />
<line x1="1800.6" y1="254.22" x2="1804.6" y2="254.22" stroke="#e8e8e8" stroke-width="1.2" />
<line x1="1800.6" y1="244.84" x2="1804.6" y2="244.84" stroke="#e8e8e8" stroke-width="1.2" />
<line x1="1800.6" y1="235.46" x2="1804.6" y2="235.46" stroke="#e8e8e8" stroke-width="1.2" />
<line x1="1800.6" y1="226.08" x2="1804.6" y2="226.08" stroke="#e8e8e8" stroke-width="1.2" />
<rect x="1798" y="497.4" width="27.4" height="23.6" fill="#1b1b1b" />
<rect x="1798" y="497.4" width="26" height="22.2" fill="#383838" />
<circle cx="1810.0" cy="507.8" r="5.5" fill="none" stroke="#fff" stroke-width="2.4"/><path d="M1814.2 512.2 L1817.8 515.8" stroke="#fff" stroke-width="3" stroke-linecap="round"/>
<rect x="1832" y="497.4" width="27.4" height="23.6" fill="#1b1b1b" />
<rect x="1832" y="497.4" width="26" height="22.2" fill="#383838" />
<g fill="none" stroke="#fff"><circle cx="1843.6000000000001" cy="509.4" r="5.4" stroke-width="1.4"/><path d="M1841.2 501.2 H1846.0000000000002" stroke-width="1.8"/><path d="M1843.6000000000001 501.79999999999995 V503.79999999999995" stroke-width="1.6"/><path d="M1838.4 504.0 L1839.6000000000001 505.2 M1848.8000000000002 504.0 L1847.6000000000001 505.2" stroke-width="1.3"/><path d="M1845.1000000000001 515.0 H1850.2" stroke-width="1.5"/></g><path d="M1843.6000000000001 506.0 A3.4 3.4 0 0 1 1847.0000000000002 509.4 H1843.6000000000001 Z" fill="#fff"/><path d="M1849.6000000000001 512.0 L1853.2 515.0 L1849.6000000000001 518.0 Z" fill="#fff"/>
<rect x="1798" y="527.4" width="27.4" height="23.6" fill="#1b1b1b" />
<rect x="1798" y="527.4" width="26" height="22.2" fill="#383838" />
<circle cx="1810.0" cy="537.8" r="5.5" fill="none" stroke="#fff" stroke-width="2.4"/><path d="M1814.2 542.1999999999999 L1817.8 545.8" stroke="#fff" stroke-width="3" stroke-linecap="round"/>
<rect x="1832" y="527.4" width="27.4" height="23.6" fill="#1b1b1b" />
<rect x="1832" y="527.4" width="26" height="22.2" fill="#383838" />
<g fill="none" stroke="#fff"><circle cx="1843.6000000000001" cy="539.4" r="5.4" stroke-width="1.4"/><path d="M1841.2 531.1999999999999 H1846.0000000000002" stroke-width="1.8"/><path d="M1843.6000000000001 531.8 V533.8" stroke-width="1.6"/><path d="M1838.4 534.0 L1839.6000000000001 535.1999999999999 M1848.8000000000002 534.0 L1847.6000000000001 535.1999999999999" stroke-width="1.3"/><path d="M1845.1000000000001 545.0 H1850.2" stroke-width="1.5"/></g><path d="M1843.6000000000001 536.0 A3.4 3.4 0 0 1 1847.0000000000002 539.4 H1843.6000000000001 Z" fill="#fff"/><path d="M1849.6000000000001 542.0 L1853.2 545.0 L1849.6000000000001 548.0 Z" fill="#fff"/>
<rect x="1050.9" y="567.4" width="2.6" height="2.6" fill="#fff" />
<rect x="1050.9" y="573.9" width="2.6" height="2.6" fill="#fff" />
<rect x="1050.9" y="580.3" width="2.6" height="2.6" fill="#fff" />
<rect x="1072.3" y="570.2" width="11.6" height="11.6" fill="none" stroke="#fff" stroke-width="2.4"/>
<path d="M1097.6999999999998 568.6 L1110.5 581.4 M1110.5 568.6 L1097.6999999999998 581.4" stroke="#fff" stroke-width="4" fill="none"/>
<path d="M380.4 569.6 L390.2 575.8 L380.4 582 Z M400 569.6 L390.2 575.8 L400 582 Z" fill="#fff"/><line x1="390.2" y1="567.4" x2="390.2" y2="584.2" stroke="#fff" stroke-width="1"/>
<rect x="375" y="598" width="13" height="13" fill="#ffffff" shape-rendering="crispEdges"/>
<rect x="376" y="599" width="11" height="11" fill="#3fa7c6" shape-rendering="crispEdges"/>
<line x1="375" y1="617.8" x2="1123.6" y2="617.8" stroke="#2c2c2c" stroke-width="1.4" />
<line x1="452" y1="666.6" x2="1050" y2="666.6" stroke="#e8e8e8" stroke-width="1.2" />
<line x1="465.78" y1="666.6" x2="465.78" y2="661.6" stroke="#e8e8e8" stroke-width="1.2" />
<line x1="493.06" y1="666.6" x2="493.06" y2="661.6" stroke="#e8e8e8" stroke-width="1.2" />
<line x1="520.34" y1="666.6" x2="520.34" y2="661.6" stroke="#e8e8e8" stroke-width="1.2" />
<line x1="547.62" y1="666.6" x2="547.62" y2="661.6" stroke="#e8e8e8" stroke-width="1.2" />
<line x1="574.9" y1="666.6" x2="574.9" y2="658.6" stroke="#e8e8e8" stroke-width="1.2" />
<line x1="602.18" y1="666.6" x2="602.18" y2="661.6" stroke="#e8e8e8" stroke-width="1.2" />
<line x1="629.46" y1="666.6" x2="629.46" y2="661.6" stroke="#e8e8e8" stroke-width="1.2" />
<line x1="656.74" y1="666.6" x2="656.74" y2="661.6" stroke="#e8e8e8" stroke-width="1.2" />
<line x1="684.02" y1="666.6" x2="684.02" y2="661.6" stroke="#e8e8e8" stroke-width="1.2" />
<line x1="711.3" y1="666.6" x2="711.3" y2="658.6" stroke="#e8e8e8" stroke-width="1.2" />
<line x1="738.58" y1="666.6" x2="738.58" y2="661.6" stroke="#e8e8e8" stroke-width="1.2" />
<line x1="765.86" y1="666.6" x2="765.86" y2="661.6" stroke="#e8e8e8" stroke-width="1.2" />
<line x1="793.14" y1="666.6" x2="793.14" y2="661.6" stroke="#e8e8e8" stroke-width="1.2" />
<line x1="820.42" y1="666.6" x2="820.42" y2="661.6" stroke="#e8e8e8" stroke-width="1.2" />
<line x1="847.7" y1="666.6" x2="847.7" y2="658.6" stroke="#e8e8e8" stroke-width="1.2" />
<line x1="874.98" y1="666.6" x2="874.98" y2="661.6" stroke="#e8e8e8" stroke-width="1.2" />
<line x1="902.26" y1="666.6" x2="902.26" y2="661.6" stroke="#e8e8e8" stroke-width="1.2" />
<line x1="929.54" y1="666.6" x2="929.54" y2="661.6" stroke="#e8e8e8" stroke-width="1.2" />
<line x1="956.82" y1="666.6" x2="956.82" y2="661.6" stroke="#e8e8e8" stroke-width="1.2" />
<line x1="984.1" y1="666.6" x2="984.1" y2="658.6" stroke="#e8e8e8" stroke-width="1.2" />
<line x1="1011.38" y1="666.6" x2="1011.38" y2="661.6" stroke="#e8e8e8" stroke-width="1.2" />
<line x1="1038.66" y1="666.6" x2="1038.66" y2="661.6" stroke="#e8e8e8" stroke-width="1.2" />
<line x1="447.4" y1="672" x2="447.4" y2="916" stroke="#e8e8e8" stroke-width="1.2" />
<line x1="447.4" y1="906" x2="443.4" y2="906" stroke="#e8e8e8" stroke-width="1.2" />
<line x1="447.4" y1="893.6" x2="440.4" y2="893.6" stroke="#e8e8e8" stroke-width="1.2" />
<line x1="447.4" y1="881.2" x2="443.4" y2="881.2" stroke="#e8e8e8" stroke-width="1.2" />
<line x1="447.4" y1="868.8" x2="443.4" y2="868.8" stroke="#e8e8e8" stroke-width="1.2" />
<line x1="447.4" y1="856.4" x2="443.4" y2="856.4" stroke="#e8e8e8" stroke-width="1.2" />
<line x1="447.4" y1="844" x2="440.4" y2="844" stroke="#e8e8e8" stroke-width="1.2" />
<line x1="447.4" y1="831.6" x2="443.4" y2="831.6" stroke="#e8e8e8" stroke-width="1.2" />
<line x1="447.4" y1="819.2" x2="443.4" y2="819.2" stroke="#e8e8e8" stroke-width="1.2" />
<line x1="447.4" y1="806.8" x2="443.4" y2="806.8" stroke="#e8e8e8" stroke-width="1.2" />
<line x1="447.4" y1="794.4" x2="440.4" y2="794.4" stroke="#e8e8e8" stroke-width="1.2" />
<line x1="447.4" y1="782" x2="443.4" y2="782" stroke="#e8e8e8" stroke-width="1.2" />
<line x1="447.4" y1="769.6" x2="443.4" y2="769.6" stroke="#e8e8e8" stroke-width="1.2" />
<line x1="447.4" y1="757.2" x2="443.4" y2="757.2" stroke="#e8e8e8" stroke-width="1.2" />
<line x1="447.4" y1="744.8" x2="440.4" y2="744.8" stroke="#e8e8e8" stroke-width="1.2" />
<line x1="447.4" y1="732.4" x2="443.4" y2="732.4" stroke="#e8e8e8" stroke-width="1.2" />
<line x1="447.4" y1="720" x2="443.4" y2="720" stroke="#e8e8e8" stroke-width="1.2" />
<line x1="447.4" y1="707.6" x2="443.4" y2="707.6" stroke="#e8e8e8" stroke-width="1.2" />
<line x1="447.4" y1="695.2" x2="440.4" y2="695.2" stroke="#e8e8e8" stroke-width="1.2" />
<line x1="447.4" y1="682.8" x2="443.4" y2="682.8" stroke="#e8e8e8" stroke-width="1.2" />
<g clip-path="url(#m2clip)"><rect x="486" y="672" width="531.4" height="245" fill="url(#m2bg)"/><polygon points="480.0,768.20 493.6,769.38 507.2,770.56 520.8,771.74 534.3,772.90 547.9,774.07 561.5,775.22 575.1,776.37 588.7,777.50 602.3,778.62 615.9,779.73 629.4,780.81 643.0,781.87 656.6,782.90 670.2,783.89 683.8,784.82 697.4,785.68 710.9,786.44 724.5,787.08 738.1,787.55 751.7,787.83 765.3,787.89 778.9,787.73 792.5,787.35 806.0,786.79 819.6,786.08 833.2,785.27 846.8,784.38 860.4,783.42 874.0,782.41 887.5,781.36 901.1,780.29 914.7,779.20 928.3,778.08 941.9,776.95 955.5,775.81 969.1,774.66 982.6,773.51 996.2,772.34 1009.8,771.17 1023.4,769.99 1023.4,818.81 1009.8,817.63 996.2,816.46 982.6,815.29 969.1,814.14 955.5,812.99 941.9,811.85 928.3,810.72 914.7,809.60 901.1,808.51 887.5,807.44 874.0,806.39 860.4,805.38 846.8,804.42 833.2,803.53 819.6,802.72 806.0,802.01 792.5,801.45 778.9,801.07 765.3,800.91 751.7,800.97 738.1,801.25 724.5,801.72 710.9,802.36 697.4,803.12 683.8,803.98 670.2,804.91 656.6,805.90 643.0,806.93 629.4,807.99 615.9,809.07 602.3,810.18 588.7,811.30 575.1,812.43 561.5,813.58 547.9,814.73 534.3,815.90 520.8,817.06 507.2,818.24 493.6,819.42 480.0,820.60" fill="url(#m2hg)" filter="url(#bl2)" opacity="0.72"/><polygon points="480.0,781.30 493.6,781.89 507.2,782.48 520.8,783.07 534.3,783.65 547.9,784.24 561.5,784.81 575.1,785.38 588.7,785.95 602.3,786.51 615.9,787.07 629.4,787.61 643.0,788.13 656.6,788.65 670.2,789.14 683.8,789.61 697.4,790.04 710.9,790.42 724.5,790.74 738.1,790.97 751.7,791.12 765.3,791.14 778.9,791.07 792.5,790.88 806.0,790.60 819.6,790.24 833.2,789.84 846.8,789.39 860.4,788.91 874.0,788.40 887.5,787.88 901.1,787.35 914.7,786.80 928.3,786.24 941.9,785.67 955.5,785.11 969.1,784.53 982.6,783.95 996.2,783.37 1009.8,782.78 1023.4,782.19 1023.4,806.61 1009.8,806.01 996.2,805.43 982.6,804.85 969.1,804.27 955.5,803.69 941.9,803.12 928.3,802.56 914.7,802.00 901.1,801.45 887.5,800.92 874.0,800.39 860.4,799.89 846.8,799.41 833.2,798.96 819.6,798.56 806.0,798.20 792.5,797.92 778.9,797.74 765.3,797.65 751.7,797.68 738.1,797.83 724.5,798.06 710.9,798.38 697.4,798.76 683.8,799.19 670.2,799.65 656.6,800.15 643.0,800.66 629.4,801.19 615.9,801.74 602.3,802.29 588.7,802.85 575.1,803.41 561.5,803.99 547.9,804.57 534.3,805.15 520.8,805.73 507.2,806.32 493.6,806.91 480.0,807.50" fill="#49a2c1" filter="url(#bl2)" opacity="0.7"/><ellipse cx="765" cy="794.4" rx="190" ry="9" fill="url(#m2c1)"/><ellipse cx="769" cy="794.4" rx="134" ry="5.4" fill="url(#m2c2)"/><g filter="url(#bl1)"><ellipse cx="767" cy="794.4" rx="104" ry="2.6" fill="#e08f2c"/><ellipse cx="765" cy="794.4" rx="80" ry="1.9" fill="#b5562b"/><ellipse cx="764" cy="794.4" rx="56" ry="1.4" fill="#7f1f2e"/></g></g>
<polyline points="486.0,768.90 499.3,769.19 512.6,769.47 525.9,769.73 539.1,769.98 552.4,770.21 565.7,770.43 579.0,770.63 592.3,770.82 605.6,770.99 618.9,771.15 632.1,771.29 645.4,771.42 658.7,771.53 672.0,771.63 685.3,771.71 698.6,771.78 711.8,771.83 725.1,771.87 738.4,771.89 751.7,771.90 765.0,771.89 778.3,771.87 791.6,771.83 804.8,771.78 818.1,771.71 831.4,771.63 844.7,771.54 858.0,771.42 871.3,771.30 884.5,771.16 897.8,771.00 911.1,770.83 924.4,770.64 937.7,770.44 951.0,770.22 964.3,769.99 977.5,769.74 990.8,769.48 1004.1,769.21 1017.4,768.91" fill="none" stroke="#46acc9" stroke-width="2.2"/><polyline points="486.0,818.90 499.3,818.71 512.6,818.52 525.9,818.35 539.1,818.18 552.4,818.03 565.7,817.88 579.0,817.75 592.3,817.62 605.6,817.51 618.9,817.40 632.1,817.31 645.4,817.22 658.7,817.15 672.0,817.08 685.3,817.03 698.6,816.98 711.8,816.95 725.1,816.92 738.4,816.91 751.7,816.90 765.0,816.90 778.3,816.92 791.6,816.94 804.8,816.98 818.1,817.02 831.4,817.08 844.7,817.14 858.0,817.22 871.3,817.30 884.5,817.40 897.8,817.50 911.1,817.62 924.4,817.74 937.7,817.87 951.0,818.02 964.3,818.17 977.5,818.34 990.8,818.51 1004.1,818.70 1017.4,818.89" fill="none" stroke="#46acc9" stroke-width="2.2"/>
<g fill="#46acc9"><circle cx="486.0" cy="747.5" r="2.3"/><circle cx="486.0" cy="841.4" r="2.3"/><circle cx="512.6" cy="751.0" r="2.3"/><circle cx="512.6" cy="837.9" r="2.3"/><circle cx="539.1" cy="754.4" r="2.3"/><circle cx="539.1" cy="834.5" r="2.3"/><circle cx="565.7" cy="757.7" r="2.3"/><circle cx="565.7" cy="831.2" r="2.3"/><circle cx="592.3" cy="760.8" r="2.3"/><circle cx="592.3" cy="828.1" r="2.3"/><circle cx="618.9" cy="763.7" r="2.3"/><circle cx="618.9" cy="825.2" r="2.3"/><circle cx="645.4" cy="766.4" r="2.3"/><circle cx="645.4" cy="822.5" r="2.3"/><circle cx="672.0" cy="768.7" r="2.3"/><circle cx="672.0" cy="820.2" r="2.3"/><circle cx="698.6" cy="770.4" r="2.3"/><circle cx="698.6" cy="818.5" r="2.3"/><circle cx="725.1" cy="771.6" r="2.3"/><circle cx="725.1" cy="817.3" r="2.3"/><circle cx="751.7" cy="772.0" r="2.3"/><circle cx="751.7" cy="816.9" r="2.3"/><circle cx="778.3" cy="771.6" r="2.3"/><circle cx="778.3" cy="817.3" r="2.3"/><circle cx="804.8" cy="770.5" r="2.3"/><circle cx="804.8" cy="818.4" r="2.3"/><circle cx="831.4" cy="768.7" r="2.3"/><circle cx="831.4" cy="820.2" r="2.3"/><circle cx="858.0" cy="766.4" r="2.3"/><circle cx="858.0" cy="822.5" r="2.3"/><circle cx="884.5" cy="763.8" r="2.3"/><circle cx="884.5" cy="825.1" r="2.3"/><circle cx="911.1" cy="760.9" r="2.3"/><circle cx="911.1" cy="828.0" r="2.3"/><circle cx="937.7" cy="757.7" r="2.3"/><circle cx="937.7" cy="831.2" r="2.3"/><circle cx="964.3" cy="754.5" r="2.3"/><circle cx="964.3" cy="834.4" r="2.3"/><circle cx="990.8" cy="751.1" r="2.3"/><circle cx="990.8" cy="837.8" r="2.3"/><circle cx="1017.4" cy="747.6" r="2.3"/><circle cx="1017.4" cy="841.3" r="2.3"/></g>
<rect x="1055" y="672" width="10.4" height="244" fill="url(#cbI)" />
<line x1="1067.8" y1="672" x2="1067.8" y2="916" stroke="#e8e8e8" stroke-width="1.2" />
<line x1="1067.8" y1="907.8" x2="1071.8" y2="907.8" stroke="#e8e8e8" stroke-width="1.2" />
<line x1="1067.8" y1="899.7" x2="1071.8" y2="899.7" stroke="#e8e8e8" stroke-width="1.2" />
<line x1="1067.8" y1="891.6" x2="1071.8" y2="891.6" stroke="#e8e8e8" stroke-width="1.2" />
<line x1="1067.8" y1="883.5" x2="1071.8" y2="883.5" stroke="#e8e8e8" stroke-width="1.2" />
<line x1="1067.8" y1="875.4" x2="1075.8" y2="875.4" stroke="#e8e8e8" stroke-width="1.2" />
<line x1="1067.8" y1="867.3" x2="1071.8" y2="867.3" stroke="#e8e8e8" stroke-width="1.2" />
<line x1="1067.8" y1="859.2" x2="1071.8" y2="859.2" stroke="#e8e8e8" stroke-width="1.2" />
<line x1="1067.8" y1="851.1" x2="1071.8" y2="851.1" stroke="#e8e8e8" stroke-width="1.2" />
<line x1="1067.8" y1="843" x2="1071.8" y2="843" stroke="#e8e8e8" stroke-width="1.2" />
<line x1="1067.8" y1="834.9" x2="1075.8" y2="834.9" stroke="#e8e8e8" stroke-width="1.2" />
<line x1="1067.8" y1="826.8" x2="1071.8" y2="826.8" stroke="#e8e8e8" stroke-width="1.2" />
<line x1="1067.8" y1="818.7" x2="1071.8" y2="818.7" stroke="#e8e8e8" stroke-width="1.2" />
<line x1="1067.8" y1="810.6" x2="1071.8" y2="810.6" stroke="#e8e8e8" stroke-width="1.2" />
<line x1="1067.8" y1="802.5" x2="1071.8" y2="802.5" stroke="#e8e8e8" stroke-width="1.2" />
<line x1="1067.8" y1="794.4" x2="1075.8" y2="794.4" stroke="#e8e8e8" stroke-width="1.2" />
<line x1="1067.8" y1="786.3" x2="1071.8" y2="786.3" stroke="#e8e8e8" stroke-width="1.2" />
<line x1="1067.8" y1="778.2" x2="1071.8" y2="778.2" stroke="#e8e8e8" stroke-width="1.2" />
<line x1="1067.8" y1="770.1" x2="1071.8" y2="770.1" stroke="#e8e8e8" stroke-width="1.2" />
<line x1="1067.8" y1="762" x2="1071.8" y2="762" stroke="#e8e8e8" stroke-width="1.2" />
<line x1="1067.8" y1="753.9" x2="1075.8" y2="753.9" stroke="#e8e8e8" stroke-width="1.2" />
<line x1="1067.8" y1="745.8" x2="1071.8" y2="745.8" stroke="#e8e8e8" stroke-width="1.2" />
<line x1="1067.8" y1="737.7" x2="1071.8" y2="737.7" stroke="#e8e8e8" stroke-width="1.2" />
<line x1="1067.8" y1="729.6" x2="1071.8" y2="729.6" stroke="#e8e8e8" stroke-width="1.2" />
<line x1="1067.8" y1="721.5" x2="1071.8" y2="721.5" stroke="#e8e8e8" stroke-width="1.2" />
<line x1="1067.8" y1="713.4" x2="1075.8" y2="713.4" stroke="#e8e8e8" stroke-width="1.2" />
<line x1="1067.8" y1="705.3" x2="1071.8" y2="705.3" stroke="#e8e8e8" stroke-width="1.2" />
<line x1="1067.8" y1="697.2" x2="1071.8" y2="697.2" stroke="#e8e8e8" stroke-width="1.2" />
<line x1="1067.8" y1="689.1" x2="1071.8" y2="689.1" stroke="#e8e8e8" stroke-width="1.2" />
<line x1="1067.8" y1="681" x2="1071.8" y2="681" stroke="#e8e8e8" stroke-width="1.2" />
<rect x="599.6" y="940.4" width="27.4" height="23.6" fill="#1b1b1b" />
<rect x="599.6" y="940.4" width="26" height="22.2" fill="#383838" />
<circle cx="611.6" cy="950.8" r="5.5" fill="none" stroke="#fff" stroke-width="2.4"/><path d="M615.8000000000001 955.1999999999999 L619.4 958.8" stroke="#fff" stroke-width="3" stroke-linecap="round"/>
<rect x="633.6" y="940.4" width="27.4" height="23.6" fill="#1b1b1b" />
<rect x="633.6" y="940.4" width="26" height="22.2" fill="#383838" />
<g fill="none" stroke="#fff"><circle cx="645.2" cy="952.4" r="5.4" stroke-width="1.4"/><path d="M642.8000000000001 944.1999999999999 H647.6" stroke-width="1.8"/><path d="M645.2 944.8 V946.8" stroke-width="1.6"/><path d="M640.0 947.0 L641.2 948.1999999999999 M650.4000000000001 947.0 L649.2 948.1999999999999" stroke-width="1.3"/><path d="M646.7 958.0 H651.8000000000001" stroke-width="1.5"/></g><path d="M645.2 949.0 A3.4 3.4 0 0 1 648.6 952.4 H645.2 Z" fill="#fff"/><path d="M651.2 955.0 L654.8000000000001 958.0 L651.2 961.0 Z" fill="#fff"/>
<rect x="794.6" y="940.4" width="27.4" height="23.6" fill="#1b1b1b" />
<rect x="794.6" y="940.4" width="26" height="22.2" fill="#383838" />
<circle cx="806.6" cy="950.8" r="5.5" fill="none" stroke="#fff" stroke-width="2.4"/><path d="M810.8000000000001 955.1999999999999 L814.4 958.8" stroke="#fff" stroke-width="3" stroke-linecap="round"/>
<rect x="828.6" y="940.4" width="27.4" height="23.6" fill="#1b1b1b" />
<rect x="828.6" y="940.4" width="26" height="22.2" fill="#383838" />
<g fill="none" stroke="#fff"><circle cx="840.2" cy="952.4" r="5.4" stroke-width="1.4"/><path d="M837.8000000000001 944.1999999999999 H842.6" stroke-width="1.8"/><path d="M840.2 944.8 V946.8" stroke-width="1.6"/><path d="M835.0 947.0 L836.2 948.1999999999999 M845.4000000000001 947.0 L844.2 948.1999999999999" stroke-width="1.3"/><path d="M841.7 958.0 H846.8000000000001" stroke-width="1.5"/></g><path d="M840.2 949.0 A3.4 3.4 0 0 1 843.6 952.4 H840.2 Z" fill="#fff"/><path d="M846.2 955.0 L849.8000000000001 958.0 L846.2 961.0 Z" fill="#fff"/>
<rect x="794.6" y="971.4" width="27.4" height="23.6" fill="#1b1b1b" />
<rect x="794.6" y="971.4" width="26" height="22.2" fill="#383838" />
<circle cx="806.6" cy="981.8" r="5.5" fill="none" stroke="#fff" stroke-width="2.4"/><path d="M810.8000000000001 986.1999999999999 L814.4 989.8" stroke="#fff" stroke-width="3" stroke-linecap="round"/>
<rect x="828.6" y="971.4" width="27.4" height="23.6" fill="#1b1b1b" />
<rect x="828.6" y="971.4" width="26" height="22.2" fill="#383838" />
<g fill="none" stroke="#fff"><circle cx="840.2" cy="983.4" r="5.4" stroke-width="1.4"/><path d="M837.8000000000001 975.1999999999999 H842.6" stroke-width="1.8"/><path d="M840.2 975.8 V977.8" stroke-width="1.6"/><path d="M835.0 978.0 L836.2 979.1999999999999 M845.4000000000001 978.0 L844.2 979.1999999999999" stroke-width="1.3"/><path d="M841.7 989.0 H846.8000000000001" stroke-width="1.5"/></g><path d="M840.2 980.0 A3.4 3.4 0 0 1 843.6 983.4 H840.2 Z" fill="#fff"/><path d="M846.2 986.0 L849.8000000000001 989.0 L846.2 992.0 Z" fill="#fff"/>
<rect x="1037.2" y="940.4" width="27.4" height="23.6" fill="#1b1b1b" />
<rect x="1037.2" y="940.4" width="26" height="22.2" fill="#383838" />
<circle cx="1049.1999999999998" cy="950.8" r="5.5" fill="none" stroke="#fff" stroke-width="2.4"/><path d="M1053.3999999999999 955.1999999999999 L1056.9999999999998 958.8" stroke="#fff" stroke-width="3" stroke-linecap="round"/>
<rect x="1071.2" y="940.4" width="27.4" height="23.6" fill="#1b1b1b" />
<rect x="1071.2" y="940.4" width="26" height="22.2" fill="#383838" />
<g fill="none" stroke="#fff"><circle cx="1082.8" cy="952.4" r="5.4" stroke-width="1.4"/><path d="M1080.3999999999999 944.1999999999999 H1085.2" stroke-width="1.8"/><path d="M1082.8 944.8 V946.8" stroke-width="1.6"/><path d="M1077.6 947.0 L1078.8 948.1999999999999 M1088.0 947.0 L1086.8 948.1999999999999" stroke-width="1.3"/><path d="M1084.3 958.0 H1089.3999999999999" stroke-width="1.5"/></g><path d="M1082.8 949.0 A3.4 3.4 0 0 1 1086.2 952.4 H1082.8 Z" fill="#fff"/><path d="M1088.8 955.0 L1092.3999999999999 958.0 L1088.8 961.0 Z" fill="#fff"/>
<rect x="1037.2" y="971.4" width="27.4" height="23.6" fill="#1b1b1b" />
<rect x="1037.2" y="971.4" width="26" height="22.2" fill="#383838" />
<circle cx="1049.1999999999998" cy="981.8" r="5.5" fill="none" stroke="#fff" stroke-width="2.4"/><path d="M1053.3999999999999 986.1999999999999 L1056.9999999999998 989.8" stroke="#fff" stroke-width="3" stroke-linecap="round"/>
<rect x="1071.2" y="971.4" width="27.4" height="23.6" fill="#1b1b1b" />
<rect x="1071.2" y="971.4" width="26" height="22.2" fill="#383838" />
<g fill="none" stroke="#fff"><circle cx="1082.8" cy="983.4" r="5.4" stroke-width="1.4"/><path d="M1080.3999999999999 975.1999999999999 H1085.2" stroke-width="1.8"/><path d="M1082.8 975.8 V977.8" stroke-width="1.6"/><path d="M1077.6 978.0 L1078.8 979.1999999999999 M1088.0 978.0 L1086.8 979.1999999999999" stroke-width="1.3"/><path d="M1084.3 989.0 H1089.3999999999999" stroke-width="1.5"/></g><path d="M1082.8 980.0 A3.4 3.4 0 0 1 1086.2 983.4 H1082.8 Z" fill="#fff"/><path d="M1088.8 986.0 L1092.3999999999999 989.0 L1088.8 992.0 Z" fill="#fff"/>
<rect x="1805.6" y="567.4" width="2.6" height="2.6" fill="#fff" />
<rect x="1805.6" y="573.9" width="2.6" height="2.6" fill="#fff" />
<rect x="1805.6" y="580.3" width="2.6" height="2.6" fill="#fff" />
<g fill="none" stroke="#fff" stroke-width="1.5"><path d="M1830.2 572.6 V570.6 H1838.8 V579.2 H1836.8"/><rect x="1827.4" y="573.2" width="8.6" height="8.6"/></g>
<path d="M1852.3999999999999 568.6 L1865.2 581.4 M1865.2 568.6 L1852.3999999999999 581.4" stroke="#fff" stroke-width="4" fill="none"/>
<g fill="none" stroke="#fff" stroke-width="1.5"><path d="M1137.2 576.4 V568.4 L1141 574.4 L1144.8 568.4 V576.4"/><path d="M1154.4 569.8 Q1153.2 568.3 1151.6 568.3 Q1148.4 568.3 1148.4 572.4 Q1148.4 576.3 1151.6 576.3 Q1153.2 576.3 1154.4 575"/></g><g fill="#fff"><rect x="1136.4" y="578.4" width="2.3" height="2.8"/><rect x="1140.4" y="578.6" width="2.3" height="6.4"/><rect x="1144.4" y="578.6" width="2.3" height="3.6"/><rect x="1148.4" y="578.6" width="2.3" height="5.8"/><rect x="1152.4" y="578.4" width="2.3" height="2.8"/></g>
<rect x="1138" y="607" width="13" height="13" fill="#ffffff" shape-rendering="crispEdges"/>
<rect x="1139" y="608" width="11" height="11" fill="#3fa7c6" shape-rendering="crispEdges"/>
<line x1="1138" y1="632.2" x2="1874.6" y2="632.2" stroke="#2c2c2c" stroke-width="1.4" />
<line x1="1138" y1="659.4" x2="1874.6" y2="659.4" stroke="#a6a6a6" stroke-width="1.2" />
<clipPath id="mcclip"><rect x="1132" y="660" width="750" height="338"/></clipPath>
<g clip-path="url(#mcclip)">
<rect x="1430.8" y="667.4" width="27.4" height="23.6" fill="#1b1b1b" />
<rect x="1430.8" y="667.4" width="26" height="22.2" fill="#383838" />
<circle cx="1442.8" cy="677.8" r="5.5" fill="none" stroke="#fff" stroke-width="2.4"/><path d="M1447.0 682.1999999999999 L1450.6 685.8" stroke="#fff" stroke-width="3" stroke-linecap="round"/>
<rect x="1463.8" y="667.4" width="27.4" height="23.6" fill="#1b1b1b" />
<rect x="1463.8" y="667.4" width="26" height="22.2" fill="#383838" />
<g fill="none" stroke="#fff"><circle cx="1475.4" cy="679.4" r="5.4" stroke-width="1.4"/><path d="M1473.0 671.1999999999999 H1477.8000000000002" stroke-width="1.8"/><path d="M1475.4 671.8 V673.8" stroke-width="1.6"/><path d="M1470.2 674.0 L1471.4 675.1999999999999 M1480.6000000000001 674.0 L1479.4 675.1999999999999" stroke-width="1.3"/><path d="M1476.9 685.0 H1482.0" stroke-width="1.5"/></g><path d="M1475.4 676.0 A3.4 3.4 0 0 1 1478.8000000000002 679.4 H1475.4 Z" fill="#fff"/><path d="M1481.4 682.0 L1485.0 685.0 L1481.4 688.0 Z" fill="#fff"/>
<rect x="1673.2" y="672.4" width="1.2" height="14.6" fill="#f0f0f0" />
<rect x="1430.8" y="696.4" width="27.4" height="23.6" fill="#1b1b1b" />
<rect x="1430.8" y="696.4" width="26" height="22.2" fill="#383838" />
<circle cx="1442.8" cy="706.8" r="5.5" fill="none" stroke="#fff" stroke-width="2.4"/><path d="M1447.0 711.1999999999999 L1450.6 714.8" stroke="#fff" stroke-width="3" stroke-linecap="round"/>
<rect x="1463.8" y="696.4" width="27.4" height="23.6" fill="#1b1b1b" />
<rect x="1463.8" y="696.4" width="26" height="22.2" fill="#383838" />
<g fill="none" stroke="#fff"><circle cx="1475.4" cy="708.4" r="5.4" stroke-width="1.4"/><path d="M1473.0 700.1999999999999 H1477.8000000000002" stroke-width="1.8"/><path d="M1475.4 700.8 V702.8" stroke-width="1.6"/><path d="M1470.2 703.0 L1471.4 704.1999999999999 M1480.6000000000001 703.0 L1479.4 704.1999999999999" stroke-width="1.3"/><path d="M1476.9 714.0 H1482.0" stroke-width="1.5"/></g><path d="M1475.4 705.0 A3.4 3.4 0 0 1 1478.8000000000002 708.4 H1475.4 Z" fill="#fff"/><path d="M1481.4 711.0 L1485.0 714.0 L1481.4 717.0 Z" fill="#fff"/>
<rect x="1673.2" y="701.4" width="1.2" height="14.6" fill="#f0f0f0" />
<rect x="1430.8" y="725.4" width="27.4" height="23.6" fill="#1b1b1b" />
<rect x="1430.8" y="725.4" width="26" height="22.2" fill="#383838" />
<circle cx="1442.8" cy="735.8" r="5.5" fill="none" stroke="#fff" stroke-width="2.4"/><path d="M1447.0 740.1999999999999 L1450.6 743.8" stroke="#fff" stroke-width="3" stroke-linecap="round"/>
<rect x="1463.8" y="725.4" width="27.4" height="23.6" fill="#1b1b1b" />
<rect x="1463.8" y="725.4" width="26" height="22.2" fill="#383838" />
<g fill="none" stroke="#fff"><circle cx="1475.4" cy="737.4" r="5.4" stroke-width="1.4"/><path d="M1473.0 729.1999999999999 H1477.8000000000002" stroke-width="1.8"/><path d="M1475.4 729.8 V731.8" stroke-width="1.6"/><path d="M1470.2 732.0 L1471.4 733.1999999999999 M1480.6000000000001 732.0 L1479.4 733.1999999999999" stroke-width="1.3"/><path d="M1476.9 743.0 H1482.0" stroke-width="1.5"/></g><path d="M1475.4 734.0 A3.4 3.4 0 0 1 1478.8000000000002 737.4 H1475.4 Z" fill="#fff"/><path d="M1481.4 740.0 L1485.0 743.0 L1481.4 746.0 Z" fill="#fff"/>
<rect x="1673.2" y="730.4" width="1.2" height="14.6" fill="#f0f0f0" />
<rect x="1430.8" y="754.4" width="27.4" height="23.6" fill="#1b1b1b" />
<rect x="1430.8" y="754.4" width="26" height="22.2" fill="#383838" />
<circle cx="1442.8" cy="764.8" r="5.5" fill="none" stroke="#fff" stroke-width="2.4"/><path d="M1447.0 769.1999999999999 L1450.6 772.8" stroke="#fff" stroke-width="3" stroke-linecap="round"/>
<rect x="1463.8" y="754.4" width="27.4" height="23.6" fill="#1b1b1b" />
<rect x="1463.8" y="754.4" width="26" height="22.2" fill="#383838" />
<g fill="none" stroke="#fff"><circle cx="1475.4" cy="766.4" r="5.4" stroke-width="1.4"/><path d="M1473.0 758.1999999999999 H1477.8000000000002" stroke-width="1.8"/><path d="M1475.4 758.8 V760.8" stroke-width="1.6"/><path d="M1470.2 761.0 L1471.4 762.1999999999999 M1480.6000000000001 761.0 L1479.4 762.1999999999999" stroke-width="1.3"/><path d="M1476.9 772.0 H1482.0" stroke-width="1.5"/></g><path d="M1475.4 763.0 A3.4 3.4 0 0 1 1478.8000000000002 766.4 H1475.4 Z" fill="#fff"/><path d="M1481.4 769.0 L1485.0 772.0 L1481.4 775.0 Z" fill="#fff"/>
<rect x="1674" y="759.4" width="163.856" height="14.6" fill="#3fa7c6" />
<rect x="1673.2" y="759.4" width="1.2" height="14.6" fill="#f0f0f0" />
<rect x="1430.8" y="783.4" width="27.4" height="23.6" fill="#1b1b1b" />
<rect x="1430.8" y="783.4" width="26" height="22.2" fill="#383838" />
<circle cx="1442.8" cy="793.8" r="5.5" fill="none" stroke="#fff" stroke-width="2.4"/><path d="M1447.0 798.1999999999999 L1450.6 801.8" stroke="#fff" stroke-width="3" stroke-linecap="round"/>
<rect x="1463.8" y="783.4" width="27.4" height="23.6" fill="#1b1b1b" />
<rect x="1463.8" y="783.4" width="26" height="22.2" fill="#383838" />
<g fill="none" stroke="#fff"><circle cx="1475.4" cy="795.4" r="5.4" stroke-width="1.4"/><path d="M1473.0 787.1999999999999 H1477.8000000000002" stroke-width="1.8"/><path d="M1475.4 787.8 V789.8" stroke-width="1.6"/><path d="M1470.2 790.0 L1471.4 791.1999999999999 M1480.6000000000001 790.0 L1479.4 791.1999999999999" stroke-width="1.3"/><path d="M1476.9 801.0 H1482.0" stroke-width="1.5"/></g><path d="M1475.4 792.0 A3.4 3.4 0 0 1 1478.8000000000002 795.4 H1475.4 Z" fill="#fff"/><path d="M1481.4 798.0 L1485.0 801.0 L1481.4 804.0 Z" fill="#fff"/>
<rect x="1674" y="788.4" width="75.768" height="14.6" fill="#3fa7c6" />
<rect x="1673.2" y="788.4" width="1.2" height="14.6" fill="#f0f0f0" />
<rect x="1430.8" y="812.4" width="27.4" height="23.6" fill="#1b1b1b" />
<rect x="1430.8" y="812.4" width="26" height="22.2" fill="#383838" />
<circle cx="1442.8" cy="822.8" r="5.5" fill="none" stroke="#fff" stroke-width="2.4"/><path d="M1447.0 827.1999999999999 L1450.6 830.8" stroke="#fff" stroke-width="3" stroke-linecap="round"/>
<rect x="1463.8" y="812.4" width="27.4" height="23.6" fill="#1b1b1b" />
<rect x="1463.8" y="812.4" width="26" height="22.2" fill="#383838" />
<g fill="none" stroke="#fff"><circle cx="1475.4" cy="824.4" r="5.4" stroke-width="1.4"/><path d="M1473.0 816.1999999999999 H1477.8000000000002" stroke-width="1.8"/><path d="M1475.4 816.8 V818.8" stroke-width="1.6"/><path d="M1470.2 819.0 L1471.4 820.1999999999999 M1480.6000000000001 819.0 L1479.4 820.1999999999999" stroke-width="1.3"/><path d="M1476.9 830.0 H1482.0" stroke-width="1.5"/></g><path d="M1475.4 821.0 A3.4 3.4 0 0 1 1478.8000000000002 824.4 H1475.4 Z" fill="#fff"/><path d="M1481.4 827.0 L1485.0 830.0 L1481.4 833.0 Z" fill="#fff"/>
<rect x="1673.2" y="817.4" width="1.2" height="14.6" fill="#f0f0f0" />
<rect x="1430.8" y="841.4" width="27.4" height="23.6" fill="#1b1b1b" />
<rect x="1430.8" y="841.4" width="26" height="22.2" fill="#383838" />
<circle cx="1442.8" cy="851.8" r="5.5" fill="none" stroke="#fff" stroke-width="2.4"/><path d="M1447.0 856.1999999999999 L1450.6 859.8" stroke="#fff" stroke-width="3" stroke-linecap="round"/>
<rect x="1463.8" y="841.4" width="27.4" height="23.6" fill="#1b1b1b" />
<rect x="1463.8" y="841.4" width="26" height="22.2" fill="#383838" />
<g fill="none" stroke="#fff"><circle cx="1475.4" cy="853.4" r="5.4" stroke-width="1.4"/><path d="M1473.0 845.1999999999999 H1477.8000000000002" stroke-width="1.8"/><path d="M1475.4 845.8 V847.8" stroke-width="1.6"/><path d="M1470.2 848.0 L1471.4 849.1999999999999 M1480.6000000000001 848.0 L1479.4 849.1999999999999" stroke-width="1.3"/><path d="M1476.9 859.0 H1482.0" stroke-width="1.5"/></g><path d="M1475.4 850.0 A3.4 3.4 0 0 1 1478.8000000000002 853.4 H1475.4 Z" fill="#fff"/><path d="M1481.4 856.0 L1485.0 859.0 L1481.4 862.0 Z" fill="#fff"/>
<rect x="1654.53" y="846.4" width="19.468" height="14.6" fill="#3fa7c6" />
<rect x="1673.2" y="846.4" width="1.2" height="14.6" fill="#f0f0f0" />
<rect x="1430.8" y="870.4" width="27.4" height="23.6" fill="#1b1b1b" />
<rect x="1430.8" y="870.4" width="26" height="22.2" fill="#383838" />
<circle cx="1442.8" cy="880.8" r="5.5" fill="none" stroke="#fff" stroke-width="2.4"/><path d="M1447.0 885.1999999999999 L1450.6 888.8" stroke="#fff" stroke-width="3" stroke-linecap="round"/>
<rect x="1463.8" y="870.4" width="27.4" height="23.6" fill="#1b1b1b" />
<rect x="1463.8" y="870.4" width="26" height="22.2" fill="#383838" />
<g fill="none" stroke="#fff"><circle cx="1475.4" cy="882.4" r="5.4" stroke-width="1.4"/><path d="M1473.0 874.1999999999999 H1477.8000000000002" stroke-width="1.8"/><path d="M1475.4 874.8 V876.8" stroke-width="1.6"/><path d="M1470.2 877.0 L1471.4 878.1999999999999 M1480.6000000000001 877.0 L1479.4 878.1999999999999" stroke-width="1.3"/><path d="M1476.9 888.0 H1482.0" stroke-width="1.5"/></g><path d="M1475.4 879.0 A3.4 3.4 0 0 1 1478.8000000000002 882.4 H1475.4 Z" fill="#fff"/><path d="M1481.4 885.0 L1485.0 888.0 L1481.4 891.0 Z" fill="#fff"/>
<rect x="1674" y="875.4" width="19.712" height="14.6" fill="#3fa7c6" />
<rect x="1673.2" y="875.4" width="1.2" height="14.6" fill="#f0f0f0" />
<rect x="1430.8" y="899.4" width="27.4" height="23.6" fill="#1b1b1b" />
<rect x="1430.8" y="899.4" width="26" height="22.2" fill="#383838" />
<circle cx="1442.8" cy="909.8" r="5.5" fill="none" stroke="#fff" stroke-width="2.4"/><path d="M1447.0 914.1999999999999 L1450.6 917.8" stroke="#fff" stroke-width="3" stroke-linecap="round"/>
<rect x="1463.8" y="899.4" width="27.4" height="23.6" fill="#1b1b1b" />
<rect x="1463.8" y="899.4" width="26" height="22.2" fill="#383838" />
<g fill="none" stroke="#fff"><circle cx="1475.4" cy="911.4" r="5.4" stroke-width="1.4"/><path d="M1473.0 903.1999999999999 H1477.8000000000002" stroke-width="1.8"/><path d="M1475.4 903.8 V905.8" stroke-width="1.6"/><path d="M1470.2 906.0 L1471.4 907.1999999999999 M1480.6000000000001 906.0 L1479.4 907.1999999999999" stroke-width="1.3"/><path d="M1476.9 917.0 H1482.0" stroke-width="1.5"/></g><path d="M1475.4 908.0 A3.4 3.4 0 0 1 1478.8000000000002 911.4 H1475.4 Z" fill="#fff"/><path d="M1481.4 914.0 L1485.0 917.0 L1481.4 920.0 Z" fill="#fff"/>
<rect x="1654.53" y="904.4" width="19.468" height="14.6" fill="#3fa7c6" />
<rect x="1673.2" y="904.4" width="1.2" height="14.6" fill="#f0f0f0" />
<rect x="1430.8" y="928.4" width="27.4" height="23.6" fill="#1b1b1b" />
<rect x="1430.8" y="928.4" width="26" height="22.2" fill="#383838" />
<circle cx="1442.8" cy="938.8" r="5.5" fill="none" stroke="#fff" stroke-width="2.4"/><path d="M1447.0 943.1999999999999 L1450.6 946.8" stroke="#fff" stroke-width="3" stroke-linecap="round"/>
<rect x="1463.8" y="928.4" width="27.4" height="23.6" fill="#1b1b1b" />
<rect x="1463.8" y="928.4" width="26" height="22.2" fill="#383838" />
<g fill="none" stroke="#fff"><circle cx="1475.4" cy="940.4" r="5.4" stroke-width="1.4"/><path d="M1473.0 932.1999999999999 H1477.8000000000002" stroke-width="1.8"/><path d="M1475.4 932.8 V934.8" stroke-width="1.6"/><path d="M1470.2 935.0 L1471.4 936.1999999999999 M1480.6000000000001 935.0 L1479.4 936.1999999999999" stroke-width="1.3"/><path d="M1476.9 946.0 H1482.0" stroke-width="1.5"/></g><path d="M1475.4 937.0 A3.4 3.4 0 0 1 1478.8000000000002 940.4 H1475.4 Z" fill="#fff"/><path d="M1481.4 943.0 L1485.0 946.0 L1481.4 949.0 Z" fill="#fff"/>
<rect x="1598.01" y="933.4" width="75.988" height="14.6" fill="#3fa7c6" />
<rect x="1673.2" y="933.4" width="1.2" height="14.6" fill="#f0f0f0" />
<rect x="1430.8" y="957.4" width="27.4" height="23.6" fill="#1b1b1b" />
<rect x="1430.8" y="957.4" width="26" height="22.2" fill="#383838" />
<circle cx="1442.8" cy="967.8" r="5.5" fill="none" stroke="#fff" stroke-width="2.4"/><path d="M1447.0 972.1999999999999 L1450.6 975.8" stroke="#fff" stroke-width="3" stroke-linecap="round"/>
<rect x="1463.8" y="957.4" width="27.4" height="23.6" fill="#1b1b1b" />
<rect x="1463.8" y="957.4" width="26" height="22.2" fill="#383838" />
<g fill="none" stroke="#fff"><circle cx="1475.4" cy="969.4" r="5.4" stroke-width="1.4"/><path d="M1473.0 961.1999999999999 H1477.8000000000002" stroke-width="1.8"/><path d="M1475.4 961.8 V963.8" stroke-width="1.6"/><path d="M1470.2 964.0 L1471.4 965.1999999999999 M1480.6000000000001 964.0 L1479.4 965.1999999999999" stroke-width="1.3"/><path d="M1476.9 975.0 H1482.0" stroke-width="1.5"/></g><path d="M1475.4 966.0 A3.4 3.4 0 0 1 1478.8000000000002 969.4 H1475.4 Z" fill="#fff"/><path d="M1481.4 972.0 L1485.0 975.0 L1481.4 978.0 Z" fill="#fff"/>
<rect x="1639.46" y="962.4" width="34.54" height="14.6" fill="#3fa7c6" />
<rect x="1673.2" y="962.4" width="1.2" height="14.6" fill="#f0f0f0" />
<rect x="1430.8" y="986.4" width="27.4" height="23.6" fill="#1b1b1b" />
<rect x="1430.8" y="986.4" width="26" height="22.2" fill="#383838" />
<circle cx="1442.8" cy="996.8" r="5.5" fill="none" stroke="#fff" stroke-width="2.4"/><path d="M1447.0 1001.1999999999999 L1450.6 1004.8" stroke="#fff" stroke-width="3" stroke-linecap="round"/>
<rect x="1463.8" y="986.4" width="27.4" height="23.6" fill="#1b1b1b" />
<rect x="1463.8" y="986.4" width="26" height="22.2" fill="#383838" />
<g fill="none" stroke="#fff"><circle cx="1475.4" cy="998.4" r="5.4" stroke-width="1.4"/><path d="M1473.0 990.1999999999999 H1477.8000000000002" stroke-width="1.8"/><path d="M1475.4 990.8 V992.8" stroke-width="1.6"/><path d="M1470.2 993.0 L1471.4 994.1999999999999 M1480.6000000000001 993.0 L1479.4 994.1999999999999" stroke-width="1.3"/><path d="M1476.9 1004.0 H1482.0" stroke-width="1.5"/></g><path d="M1475.4 995.0 A3.4 3.4 0 0 1 1478.8000000000002 998.4 H1475.4 Z" fill="#fff"/><path d="M1481.4 1001.0 L1485.0 1004.0 L1481.4 1007.0 Z" fill="#fff"/>
<rect x="1674" y="991.4" width="2.464" height="14.6" fill="#3fa7c6" />
<rect x="1673.2" y="991.4" width="1.2" height="14.6" fill="#f0f0f0" />
</g>
<rect x="1858.2" y="667" width="16.6" height="332" fill="#222" />
<path d="M1861.6 682.6 L1866.5 673.4 L1871.4 682.6 Z" fill="#f2f2f2"/><path d="M1861.6 984.6 L1866.5 993.8 L1871.4 984.6 Z" fill="#f2f2f2"/>
<rect x="1860.8" y="690" width="11.4" height="100.4" fill="#3b3b3b" rx="5"/>
<line x1="1887" y1="112.3" x2="1917" y2="112.3" stroke="#e0e0e0" stroke-width="2.2" stroke-dasharray="2 1.54"/>
<rect x="1886.6" y="118.4" width="30.6" height="29.6" fill="url(#hatchG)" />
<rect x="1886.6" y="118.4" width="30.6" height="1" fill="#2e2e2e" />
<rect x="1886.6" y="118.4" width="1" height="29.6" fill="#2e2e2e" />
<rect x="1886.6" y="180.4" width="30.6" height="29.6" fill="url(#hatchG)" />
<rect x="1886.6" y="180.4" width="30.6" height="1" fill="#2e2e2e" />
<rect x="1886.6" y="180.4" width="1" height="29.6" fill="#2e2e2e" />
<rect x="1886.6" y="273.4" width="30.6" height="29.6" fill="url(#hatchG)" />
<rect x="1886.6" y="273.4" width="30.6" height="1" fill="#2e2e2e" />
<rect x="1886.6" y="273.4" width="1" height="29.6" fill="#2e2e2e" />
<rect x="1886.6" y="367.4" width="30.6" height="29.6" fill="url(#hatchG)" />
<rect x="1886.6" y="367.4" width="30.6" height="1" fill="#2e2e2e" />
<rect x="1886.6" y="367.4" width="1" height="29.6" fill="#2e2e2e" />
<g fill="none" stroke="#fff" stroke-width="2.5"><path d="M1903.00 125.65 A6.2 6.2 0 1 1 1897.38 129.23" stroke-linecap="round"/><path d="M1903.00 124.40 V143.60"/></g>
<g fill="#fff"><rect x="1899.7" y="152.39999999999998" width="4.6" height="4.6" rx="0.8" transform="rotate(0 1902.0 163.7)"/><rect x="1899.7" y="152.39999999999998" width="4.6" height="4.6" rx="0.8" transform="rotate(45 1902.0 163.7)"/><rect x="1899.7" y="152.39999999999998" width="4.6" height="4.6" rx="0.8" transform="rotate(90 1902.0 163.7)"/><rect x="1899.7" y="152.39999999999998" width="4.6" height="4.6" rx="0.8" transform="rotate(135 1902.0 163.7)"/><rect x="1899.7" y="152.39999999999998" width="4.6" height="4.6" rx="0.8" transform="rotate(180 1902.0 163.7)"/><rect x="1899.7" y="152.39999999999998" width="4.6" height="4.6" rx="0.8" transform="rotate(225 1902.0 163.7)"/><rect x="1899.7" y="152.39999999999998" width="4.6" height="4.6" rx="0.8" transform="rotate(270 1902.0 163.7)"/><rect x="1899.7" y="152.39999999999998" width="4.6" height="4.6" rx="0.8" transform="rotate(315 1902.0 163.7)"/></g><circle cx="1902.0" cy="163.7" r="7.2" fill="none" stroke="#fff" stroke-width="3"/><path d="M1898.4 167.5 L1902.6 163.29999999999998" stroke="#fff" stroke-width="2.6" stroke-linecap="round"/><circle cx="1903.5" cy="162.2" r="2.9" fill="#fff"/><path d="M1903.6 162.0 L1906.4 159.1" stroke="#404040" stroke-width="1.8"/>
<path d="M1898.4 187 H1906.4 M1898.4 204 H1906.4 M1902.4 187 V204" stroke="#fff" stroke-width="2.4" fill="none"/>
<g fill="none" stroke="#fff" stroke-width="2.4"><path d="M1896.8 217 V225"/><path d="M1902.8 224.4 V232"/><path d="M1903.6 219.4 L1910 225.6"/><path d="M1911.4 220.4 V227 H1904.8" stroke-width="2.2"/></g><g fill="#fff"><path d="M1892.8 223.6 H1900.8 L1896.8 228.4 Z"/><path d="M1898.8 230.8 H1906.8 L1902.8 235.8 Z"/></g>
<g fill="#fff"><circle cx="1895.2" cy="250.2" r="2.6"/><circle cx="1895.2" cy="257" r="2.6"/><circle cx="1895.2" cy="263.8" r="2.6"/><circle cx="1902" cy="250.2" r="2.6"/><circle cx="1902" cy="257" r="2.6"/><circle cx="1902" cy="263.8" r="2.6"/><circle cx="1908.8" cy="250.2" r="2.6"/><circle cx="1908.8" cy="257" r="2.6"/><circle cx="1908.8" cy="263.8" r="2.6"/></g>
<g fill="none" stroke="#fff" stroke-width="1.7" stroke-linejoin="miter"><path d="M1893.6 290.4 V282.2 L1898 288.6 L1902.4 282.2 V290.4"/><path d="M1912.8 283.6 Q1911.4 282 1909.6 282 Q1906.2 282 1906.2 286.2 Q1906.2 290.2 1909.6 290.2 Q1911.4 290.2 1912.8 288.8"/></g><g fill="#fff"><rect x="1892.4" y="292.2" width="2.6" height="3.2"/><rect x="1897" y="292.6" width="2.6" height="7.4"/><rect x="1901.6" y="292.6" width="2.6" height="4"/><rect x="1906.2" y="292.6" width="2.6" height="6.6"/><rect x="1910.8" y="292.2" width="2.6" height="3.2"/></g>
<path d="M1892.4 324 Q1894.4 319.6 1896.2 323 Q1898.4 327.6 1900.0 318 Q1902.4 303 1904.8000000000002 318 Q1906.4 327.6 1908.6000000000001 323 Q1910.4 319.6 1912.4 324" fill="none" stroke="#fff" stroke-width="2" stroke-linecap="round"/>
<g fill="none" stroke="#fff" stroke-width="1.7"><path d="M1895.4 343.4 V358.6 H1910.0"/><path d="M1898.0 345.6 Q1899.0 355.6 1908.4 356.2"/></g><path d="M1892.6000000000001 345 L1895.4 340.6 L1898.2 345 Z M1909.0 355.8 L1913.4 358.6 L1909.0 361.4 Z" fill="#fff"/>
<path d="M1891.4 375 L1902.4 382.2 L1891.4 389.4 Z M1913.4 375 L1902.4 382.2 L1913.4 389.4 Z" fill="#fff"/><line x1="1902.4" y1="371" x2="1902.4" y2="393" stroke="#9a9a9a" stroke-width="1"/>
<line x1="1889" y1="409.4" x2="1915" y2="409.4" stroke="#4b4b4b" stroke-width="1" />
<g fill="none" stroke="#fff"><circle cx="1900.8000000000002" cy="437.4" r="7" stroke-width="1.7"/><path d="M1897.8000000000002 427 H1903.8000000000002" stroke-width="2.2"/><path d="M1900.8000000000002 427.6 V430.4" stroke-width="1.8"/><path d="M1894.0000000000002 430.4 L1895.6000000000001 432 M1907.6000000000001 430.4 L1906.0000000000002 432" stroke-width="1.6"/><path d="M1902.8000000000002 444.6 H1908.8000000000002" stroke-width="1.7"/></g><path d="M1900.8000000000002 433 A4.4 4.4 0 0 1 1905.2000000000003 437.4 H1900.8000000000002 Z" fill="#fff"/><path d="M1908.2000000000003 441 L1912.8000000000002 444.6 L1908.2000000000003 448.2 Z" fill="#fff"/>
<circle cx="1900.4" cy="465.4" r="7.4" fill="none" stroke="#fff" stroke-width="2.8"/><path d="M1906.0 471.2 L1911.2 476.6" stroke="#fff" stroke-width="3.6" stroke-linecap="round"/>
<line x1="1887" y1="490.2" x2="1917" y2="490.2" stroke="#e0e0e0" stroke-width="2.2" stroke-dasharray="2 1.54"/>
<g fill="#fff"><rect x="1892.4" y="500.2" width="8.8" height="8.8"/><rect x="1892.4" y="511.2" width="8.8" height="8.8"/><rect x="1903.6000000000001" y="500.2" width="8.8" height="8.8"/><rect x="1903.6000000000001" y="511.2" width="8.8" height="8.8"/></g>
<g fill="#404040" stroke="#fff" stroke-width="1.5"><rect x="1899.8000000000002" y="530.4" width="11.6" height="9"/><rect x="1896.8000000000002" y="533.4" width="11.6" height="9"/><rect x="1893.8000000000002" y="536.6" width="12.6" height="11"/></g>
<rect x="127.3" y="1020" width="1.5" height="17" fill="#e0e0e0" />
<rect x="222.3" y="1020" width="1.5" height="17" fill="#e0e0e0" />
<rect x="282.3" y="1020" width="1.5" height="17" fill="#e0e0e0" />
<rect x="349.3" y="1020" width="1.5" height="17" fill="#e0e0e0" />
<rect x="483.3" y="1020" width="1.5" height="17" fill="#e0e0e0" />
<rect x="617.3" y="1020" width="1.5" height="17" fill="#e0e0e0" />
<rect x="727.3" y="1020" width="1.5" height="17" fill="#e0e0e0" />
<rect x="783.3" y="1020" width="1.5" height="17" fill="#e0e0e0" />
<circle cx="268" cy="1029.6" r="4.6" fill="none" stroke="#9a9a9a" stroke-width="2"/>
<circle cx="713" cy="1029" r="5" fill="#8a8a8a"/><circle cx="769" cy="1029" r="5" fill="#8a8a8a"/>
<g fill="none" stroke="#3fa7c6" stroke-width="1.8"><path d="M332.6 1022.6 V1032.6 H342.8"/><path d="M329.4 1025.6 H339.6 V1036"/></g><circle cx="336.2" cy="1029.2" r="1.8" fill="#3fa7c6"/>
</svg>
<span style="left:83.40px;top:11.20px;font-size:13px;line-height:18px;color:#f8f8f8;letter-spacing:-0.24px;">File</span>
<span style="left:119.40px;top:11.20px;font-size:13px;line-height:18px;color:#f8f8f8;letter-spacing:0.01px;">View</span>
<span style="left:163.40px;top:11.20px;font-size:13px;line-height:18px;color:#f8f8f8;letter-spacing:0.13px;">Workspace</span>
<span style="left:245.40px;top:11.20px;font-size:13px;line-height:18px;color:#f8f8f8;letter-spacing:0.07px;">Help</span>
<span style="left:15.38px;top:80.20px;font-size:13px;line-height:18px;color:#ffffff;letter-spacing:0.16px;">New instance</span>
<span style="left:112.25px;top:80.20px;font-size:13px;line-height:18px;color:#ffffff;letter-spacing:-0.10px;">Sensor</span>
<span style="left:171.63px;top:80.20px;font-size:13px;line-height:18px;color:#ffffff;letter-spacing:0.16px;">Open file</span>
<span style="left:241.79px;top:80.20px;font-size:13px;line-height:18px;color:#ffffff;letter-spacing:0.19px;">Open folder</span>
<span style="left:336.28px;top:80.20px;font-size:13px;line-height:18px;color:#ffffff;letter-spacing:-0.53px;">Save</span>
<span style="left:395.69px;top:81.20px;font-size:13px;line-height:18px;color:#ffffff;letter-spacing:-0.01px;">Mask</span>
<span style="left:448.10px;top:80.20px;font-size:13px;line-height:18px;color:#ffffff;letter-spacing:0.30px;">Simulation</span>
<span style="left:1595.67px;top:80.40px;font-size:13px;line-height:18px;color:#ffffff;letter-spacing:0.13px;">New</span>
<span style="left:1654.80px;top:80.40px;font-size:13px;line-height:18px;color:#ffffff;letter-spacing:-0.41px;">Save</span>
<span style="left:1714.72px;top:80.40px;font-size:13px;line-height:18px;color:#ffffff;letter-spacing:-0.06px;">Load</span>
<span style="left:1767.51px;top:80.40px;font-size:13px;line-height:18px;color:#ffffff;letter-spacing:0.32px;">Alignment</span>
<span style="left:1844.70px;top:80.40px;font-size:13px;line-height:18px;color:#ffffff;letter-spacing:0.40px;">Wavefront</span>
<span style="left:41.40px;top:111.20px;font-size:13px;line-height:18px;color:#f8f8f8;letter-spacing:-0.20px;">[HASO4 BroadBand USB3 4913]</span>
<span style="left:116.50px;top:134.20px;font-size:13px;line-height:18px;color:#f8f8f8;letter-spacing:-0.10px;">Features</span>
<span style="left:280.73px;top:134.20px;font-size:13px;line-height:18px;color:#f8f8f8;letter-spacing:-0.05px;">Values</span>
<span style="left:78.60px;top:154.20px;font-size:13px;line-height:18px;color:#f8f8f8;letter-spacing:0.14px;">Subtract reference</span>
<span style="left:249.00px;top:154.20px;font-size:13px;line-height:18px;color:#f8f8f8;letter-spacing:0.16px;">None</span>
<span style="left:78.60px;top:174.20px;font-size:13px;line-height:18px;color:#f8f8f8;letter-spacing:0.16px;">Double pass</span>
<span style="left:249.00px;top:174.20px;font-size:13px;line-height:18px;color:#f8f8f8;letter-spacing:0.16px;">None</span>
<span style="left:58.60px;top:194.20px;font-size:13px;line-height:18px;color:#3fa7c6;letter-spacing:0.15px;">Aberrations</span>
<span style="left:78.60px;top:214.20px;font-size:13px;line-height:18px;color:#f8f8f8;letter-spacing:0.16px;">Oversampling</span>
<span style="left:249.00px;top:214.20px;font-size:13px;line-height:18px;color:#f8f8f8;letter-spacing:0.14px;">x1</span>
<span style="left:78.60px;top:234.20px;font-size:13px;line-height:18px;color:#f8f8f8;letter-spacing:0.13px;">Display unit</span>
<span style="left:249.00px;top:234.20px;font-size:13px;line-height:18px;color:#f8f8f8;letter-spacing:0.18px;">µm</span>
<span style="left:78.60px;top:254.20px;font-size:13px;line-height:18px;color:#f8f8f8;letter-spacing:0.14px;">Spider reconstruction</span>
<span style="left:78.60px;top:274.20px;font-size:13px;line-height:18px;color:#3fa7c6;letter-spacing:0.15px;">Reconstruction</span>
<span style="left:249.00px;top:274.20px;font-size:13px;line-height:18px;color:#f8f8f8;letter-spacing:0.12px;">Zernike</span>
<span style="left:78.60px;top:294.20px;font-size:13px;line-height:18px;color:#f8f8f8;letter-spacing:0.15px;">Modal option</span>
<span style="left:98.80px;top:314.20px;font-size:13px;line-height:18px;color:#f8f8f8;letter-spacing:0.14px;">Number of coefficients</span>
<span style="left:250.90px;top:315.00px;font-size:13px;line-height:18px;color:#f8f8f8;">32</span>
<span style="left:98.80px;top:334.20px;font-size:13px;line-height:18px;color:#f8f8f8;letter-spacing:0.13px;">Coefficients normaliza...</span>
<span style="left:249.00px;top:334.20px;font-size:13px;line-height:18px;color:#f8f8f8;letter-spacing:0.13px;">Standard</span>
<span style="left:98.80px;top:354.20px;font-size:13px;line-height:18px;color:#f8f8f8;letter-spacing:0.14px;">Pupil center</span>
<span style="left:249.00px;top:354.20px;font-size:13px;line-height:18px;color:#f8f8f8;letter-spacing:0.13px;">Auto</span>
<span style="left:98.80px;top:374.20px;font-size:13px;line-height:18px;color:#f8f8f8;letter-spacing:0.14px;">Pupil radius</span>
<span style="left:249.00px;top:374.20px;font-size:13px;line-height:18px;color:#f8f8f8;letter-spacing:0.12px;">Inscribed</span>
<span style="left:98.80px;top:394.20px;font-size:13px;line-height:18px;color:#f8f8f8;letter-spacing:0.15px;">X center (mm)</span>
<span style="left:250.90px;top:395.00px;font-size:13px;line-height:18px;color:#f8f8f8;">0.302</span>
<span style="left:98.80px;top:414.20px;font-size:13px;line-height:18px;color:#f8f8f8;letter-spacing:0.15px;">Y center (mm)</span>
<span style="left:250.90px;top:415.00px;font-size:13px;line-height:18px;color:#f8f8f8;">-0.001</span>
<span style="left:98.80px;top:434.20px;font-size:13px;line-height:18px;color:#f8f8f8;letter-spacing:0.16px;">Radius (mm)</span>
<span style="left:250.90px;top:435.00px;font-size:13px;line-height:18px;color:#f8f8f8;">2.313</span>
<span style="left:58.60px;top:454.20px;font-size:13px;line-height:18px;color:#f8f8f8;letter-spacing:0.12px;">Filtering</span>
<span style="left:78.60px;top:474.20px;font-size:13px;line-height:18px;color:#f8f8f8;letter-spacing:0.10px;">X tilt</span>
<span style="left:78.60px;top:494.20px;font-size:13px;line-height:18px;color:#f8f8f8;letter-spacing:0.10px;">Y tilt</span>
<span style="left:78.60px;top:514.20px;font-size:13px;line-height:18px;color:#f8f8f8;letter-spacing:0.15px;">Curvature</span>
<span style="left:78.60px;top:534.20px;font-size:13px;line-height:18px;color:#f8f8f8;letter-spacing:0.15px;">Astigmatism 0°</span>
<span style="left:78.60px;top:554.20px;font-size:13px;line-height:18px;color:#f8f8f8;letter-spacing:0.15px;">Astigmatism 45°</span>
<span style="left:78.60px;top:574.20px;font-size:13px;line-height:18px;color:#f8f8f8;letter-spacing:0.17px;">Coma 0°</span>
<span style="left:78.60px;top:594.20px;font-size:13px;line-height:18px;color:#f8f8f8;letter-spacing:0.17px;">Coma 90°</span>
<span style="left:78.60px;top:614.20px;font-size:13px;line-height:18px;color:#f8f8f8;letter-spacing:0.14px;">Spherical aberration</span>
<span style="left:78.60px;top:634.20px;font-size:13px;line-height:18px;color:#f8f8f8;letter-spacing:0.14px;">Zernike 5th Zernike order</span>
<span style="left:78.60px;top:654.20px;font-size:13px;line-height:18px;color:#f8f8f8;letter-spacing:0.14px;">Zernike 7th Zernike order</span>
<span style="left:78.60px;top:674.20px;font-size:13px;line-height:18px;color:#f8f8f8;letter-spacing:0.14px;">Zernike 9th Zernike order</span>
<span style="left:78.60px;top:694.20px;font-size:13px;line-height:18px;color:#f8f8f8;letter-spacing:0.13px;">Residual after projection</span>
<span style="left:58.60px;top:714.20px;font-size:13px;line-height:18px;color:#f8f8f8;letter-spacing:0.15px;">Propagation</span>
<span style="left:78.60px;top:734.20px;font-size:13px;line-height:18px;color:#f8f8f8;letter-spacing:0.14px;">Activate</span>
<span style="left:78.60px;top:754.20px;font-size:13px;line-height:18px;color:#f8f8f8;letter-spacing:0.14px;">Perfect lens</span>
<span style="left:249.00px;top:754.20px;font-size:13px;line-height:18px;color:#f8f8f8;letter-spacing:0.16px;">None</span>
<span style="left:78.60px;top:774.20px;font-size:13px;line-height:18px;color:#f8f8f8;letter-spacing:0.15px;">Propagation distance</span>
<span style="left:78.60px;top:794.20px;font-size:13px;line-height:18px;color:#f8f8f8;letter-spacing:0.14px;">Propagated intensity</span>
<span style="left:78.60px;top:814.20px;font-size:13px;line-height:18px;color:#f8f8f8;letter-spacing:0.20px;">PSF</span>
<span style="left:78.60px;top:834.20px;font-size:13px;line-height:18px;color:#f8f8f8;letter-spacing:0.21px;">MTF</span>
<span style="left:78.60px;top:854.20px;font-size:13px;line-height:18px;color:#f8f8f8;letter-spacing:0.16px;">M squared</span>
<span style="left:98.80px;top:874.20px;font-size:13px;line-height:18px;color:#f8f8f8;letter-spacing:0.14px;">Live</span>
<span style="left:98.80px;top:894.20px;font-size:13px;line-height:18px;color:#f8f8f8;letter-spacing:0.17px;">Update</span>
<span style="left:98.80px;top:914.20px;font-size:13px;line-height:18px;color:#f8f8f8;letter-spacing:0.15px;">Waist sampling</span>
<span style="left:250.90px;top:915.00px;font-size:13px;line-height:18px;color:#f8f8f8;">21</span>
<span style="left:98.80px;top:934.20px;font-size:13px;line-height:18px;color:#f8f8f8;letter-spacing:0.17px;">Method</span>
<span style="left:249.4px;top:934.2px;font-size:13px;line-height:18px;color:#f8f8f8;width:86px;overflow:hidden;letter-spacing:0.1px">Encircled energy</span>
<span style="left:58.60px;top:954.20px;font-size:13px;line-height:18px;color:#f8f8f8;letter-spacing:0.15px;">Display</span>
<span style="left:58.60px;top:974.20px;font-size:13px;line-height:18px;color:#f8f8f8;letter-spacing:0.16px;">Automation</span>
<span style="left:400.40px;top:116.20px;font-size:13px;line-height:18px;color:#fff;letter-spacing:0.46px;font-weight:bold;">Intensity</span>
<span style="left:396.40px;top:150.90px;font-size:12px;line-height:17px;color:#f8f8f8;letter-spacing:0.27px;">Z Scale auto</span>
<span style="left:506.69px;top:196.00px;font-size:12px;line-height:17px;color:#f8f8f8;letter-spacing:0.16px;">-4</span>
<span style="left:620.99px;top:196.00px;font-size:12px;line-height:17px;color:#f8f8f8;letter-spacing:0.16px;">-2</span>
<span style="left:737.36px;top:196.00px;font-size:12px;line-height:17px;color:#f8f8f8;">0</span>
<span style="left:851.66px;top:196.00px;font-size:12px;line-height:17px;color:#f8f8f8;">2</span>
<span style="left:965.96px;top:196.00px;font-size:12px;line-height:17px;color:#f8f8f8;">4</span>
<span style="left:730.25px;top:180.00px;font-size:12px;line-height:17px;color:#f8f8f8;letter-spacing:1.50px;">mm</span>
<span style="left:430.33px;top:250.20px;font-size:12px;line-height:17px;color:#f8f8f8;">2</span>
<span style="left:430.33px;top:307.20px;font-size:12px;line-height:17px;color:#f8f8f8;">1</span>
<span style="left:430.33px;top:364.20px;font-size:12px;line-height:17px;color:#f8f8f8;">0</span>
<span style="left:426.17px;top:421.20px;font-size:12px;line-height:17px;color:#f8f8f8;letter-spacing:0.16px;">-1</span>
<span style="left:426.17px;top:478.20px;font-size:12px;line-height:17px;color:#f8f8f8;letter-spacing:0.16px;">-2</span>
<span style="left:377.25px;top:363.40px;font-size:12px;line-height:17px;color:#f8f8f8;letter-spacing:1.50px;transform-origin:10.75px 8.50px;transform:rotate(-90deg);">mm</span>
<span style="left:1056.80px;top:509.10px;font-size:12px;line-height:17px;color:#f8f8f8;">0</span>
<span style="left:1056.80px;top:465.90px;font-size:12px;line-height:17px;color:#f8f8f8;letter-spacing:0.20px;">1000</span>
<span style="left:1056.80px;top:422.70px;font-size:12px;line-height:17px;color:#f8f8f8;letter-spacing:0.20px;">2000</span>
<span style="left:1056.80px;top:379.50px;font-size:12px;line-height:17px;color:#f8f8f8;letter-spacing:0.20px;">3000</span>
<span style="left:1056.80px;top:336.30px;font-size:12px;line-height:17px;color:#f8f8f8;letter-spacing:0.20px;">4000</span>
<span style="left:1056.80px;top:293.10px;font-size:12px;line-height:17px;color:#f8f8f8;letter-spacing:0.20px;">5000</span>
<span style="left:1056.80px;top:249.90px;font-size:12px;line-height:17px;color:#f8f8f8;letter-spacing:0.20px;">6000</span>
<span style="left:1106.27px;top:363.40px;font-size:12px;line-height:17px;color:#f8f8f8;transform-origin:8.33px 8.50px;transform:rotate(90deg);">AU</span>
<span style="left:885.40px;top:531.00px;font-size:12px;line-height:17px;color:#f8f8f8;letter-spacing:0.79px;">Intensity contrast</span>
<span style="left:997.40px;top:531.00px;font-size:12px;line-height:17px;color:#f8f8f8;letter-spacing:0.16px;">0.22</span>
<span style="left:1156.80px;top:116.20px;font-size:13px;line-height:18px;color:#fff;letter-spacing:0.77px;font-weight:bold;">Wavefront</span>
<span style="left:1152.40px;top:150.90px;font-size:12px;line-height:17px;color:#f8f8f8;letter-spacing:0.27px;">Z Scale auto</span>
<span style="left:1283.59px;top:196.00px;font-size:12px;line-height:17px;color:#f8f8f8;letter-spacing:0.16px;">-4</span>
<span style="left:1387.39px;top:196.00px;font-size:12px;line-height:17px;color:#f8f8f8;letter-spacing:0.16px;">-2</span>
<span style="left:1493.26px;top:196.00px;font-size:12px;line-height:17px;color:#f8f8f8;">0</span>
<span style="left:1597.06px;top:196.00px;font-size:12px;line-height:17px;color:#f8f8f8;">2</span>
<span style="left:1700.86px;top:196.00px;font-size:12px;line-height:17px;color:#f8f8f8;">4</span>
<span style="left:1485.25px;top:180.00px;font-size:12px;line-height:17px;color:#f8f8f8;letter-spacing:1.50px;">mm</span>
<span style="left:1185.93px;top:246.80px;font-size:12px;line-height:17px;color:#f8f8f8;">2</span>
<span style="left:1185.93px;top:298.40px;font-size:12px;line-height:17px;color:#f8f8f8;">1</span>
<span style="left:1185.93px;top:350.00px;font-size:12px;line-height:17px;color:#f8f8f8;">0</span>
<span style="left:1181.77px;top:401.60px;font-size:12px;line-height:17px;color:#f8f8f8;letter-spacing:0.16px;">-1</span>
<span style="left:1181.77px;top:453.20px;font-size:12px;line-height:17px;color:#f8f8f8;letter-spacing:0.16px;">-2</span>
<span style="left:1133.85px;top:349.40px;font-size:12px;line-height:17px;color:#f8f8f8;letter-spacing:1.50px;transform-origin:10.75px 8.50px;transform:rotate(-90deg);">mm</span>
<span style="left:1509.89px;top:400.40px;font-size:12px;line-height:17px;color:rgba(140,105,40,0.42);letter-spacing:-0.23px;">Capture Fenêtre</span>
<span style="left:1811.80px;top:256.40px;font-size:12px;line-height:17px;color:#f8f8f8;letter-spacing:0.17px;">0.1</span>
<span style="left:1811.80px;top:303.30px;font-size:12px;line-height:17px;color:#f8f8f8;letter-spacing:0.18px;">0.05</span>
<span style="left:1811.80px;top:350.20px;font-size:12px;line-height:17px;color:#f8f8f8;">0</span>
<span style="left:1811.80px;top:397.10px;font-size:12px;line-height:17px;color:#f8f8f8;letter-spacing:0.16px;">-0.05</span>
<span style="left:1811.80px;top:444.00px;font-size:12px;line-height:17px;color:#f8f8f8;letter-spacing:0.16px;">-0.1</span>
<span style="left:1859.54px;top:349.40px;font-size:12px;line-height:17px;color:#f8f8f8;transform-origin:8.46px 8.50px;transform:rotate(90deg);">µm</span>
<span style="left:1634.20px;top:500.60px;font-size:12px;line-height:17px;color:#f8f8f8;letter-spacing:0.70px;">Wavefront PV</span>
<span style="left:1733.60px;top:500.60px;font-size:12px;line-height:17px;color:#f8f8f8;letter-spacing:0.19px;">0.067</span>
<span style="left:1770.40px;top:500.60px;font-size:12px;line-height:17px;color:#f8f8f8;letter-spacing:1.04px;">µm</span>
<span style="left:1634.20px;top:530.60px;font-size:12px;line-height:17px;color:#f8f8f8;letter-spacing:0.67px;">Wavefront RMS</span>
<span style="left:1733.60px;top:530.60px;font-size:12px;line-height:17px;color:#f8f8f8;letter-spacing:0.19px;">0.013</span>
<span style="left:1770.40px;top:530.60px;font-size:12px;line-height:17px;color:#f8f8f8;letter-spacing:1.04px;">µm</span>
<span style="left:405.80px;top:567.20px;font-size:13px;line-height:18px;color:#fff;letter-spacing:0.33px;font-weight:bold;">M squared</span>
<span style="left:393.40px;top:597.20px;font-size:12px;line-height:17px;color:#f8f8f8;letter-spacing:0.27px;">Z Scale auto</span>
<span style="left:564.09px;top:641.80px;font-size:12px;line-height:17px;color:#f8f8f8;letter-spacing:0.20px;">250</span>
<span style="left:700.49px;top:641.80px;font-size:12px;line-height:17px;color:#f8f8f8;letter-spacing:0.20px;">260</span>
<span style="left:836.89px;top:641.80px;font-size:12px;line-height:17px;color:#f8f8f8;letter-spacing:0.20px;">270</span>
<span style="left:973.29px;top:641.80px;font-size:12px;line-height:17px;color:#f8f8f8;letter-spacing:0.20px;">280</span>
<span style="left:739.85px;top:626.00px;font-size:12px;line-height:17px;color:#f8f8f8;letter-spacing:1.50px;">mm</span>
<span style="left:416.58px;top:688.00px;font-size:12px;line-height:17px;color:#f8f8f8;letter-spacing:0.17px;">0.4</span>
<span style="left:416.58px;top:737.60px;font-size:12px;line-height:17px;color:#f8f8f8;letter-spacing:0.17px;">0.2</span>
<span style="left:426.93px;top:787.20px;font-size:12px;line-height:17px;color:#f8f8f8;">0</span>
<span style="left:412.46px;top:836.80px;font-size:12px;line-height:17px;color:#f8f8f8;letter-spacing:0.16px;">-0.2</span>
<span style="left:412.46px;top:886.40px;font-size:12px;line-height:17px;color:#f8f8f8;letter-spacing:0.16px;">-0.4</span>
<span style="left:374.65px;top:786.40px;font-size:12px;line-height:17px;color:#f8f8f8;letter-spacing:1.50px;transform-origin:10.75px 8.50px;transform:rotate(-90deg);">mm</span>
<span style="left:1078.60px;top:706.20px;font-size:12px;line-height:17px;color:#f8f8f8;">5</span>
<span style="left:1078.60px;top:746.70px;font-size:12px;line-height:17px;color:#f8f8f8;">4</span>
<span style="left:1078.60px;top:787.20px;font-size:12px;line-height:17px;color:#f8f8f8;">3</span>
<span style="left:1078.60px;top:827.70px;font-size:12px;line-height:17px;color:#f8f8f8;">2</span>
<span style="left:1078.60px;top:868.20px;font-size:12px;line-height:17px;color:#f8f8f8;">1</span>
<span style="left:498.40px;top:943.60px;font-size:12px;line-height:17px;color:#3fa7c6;letter-spacing:0.77px;">M squared</span>
<span style="left:568.40px;top:943.60px;font-size:12px;line-height:17px;color:#3fa7c6;letter-spacing:0.16px;">4.60</span>
<span style="left:498.40px;top:974.60px;font-size:12px;line-height:17px;color:#c2653a;letter-spacing:0.78px;">Contrast</span>
<span style="left:568.40px;top:974.60px;font-size:12px;line-height:17px;color:#c2653a;letter-spacing:0.16px;">0.21</span>
<span style="left:686.40px;top:943.60px;font-size:12px;line-height:17px;color:#f8f8f8;letter-spacing:0.16px;">z0</span>
<span style="left:706.58px;top:943.60px;font-size:12px;line-height:17px;color:#f8f8f8;letter-spacing:0.18px;">262.8426</span>
<span style="left:764.00px;top:943.60px;font-size:12px;line-height:17px;color:#f8f8f8;letter-spacing:1.30px;">mm</span>
<span style="left:686.40px;top:974.60px;font-size:12px;line-height:17px;color:#f8f8f8;letter-spacing:0.30px;">zr</span>
<span style="left:713.23px;top:974.60px;font-size:12px;line-height:17px;color:#f8f8f8;letter-spacing:0.23px;">10.8537</span>
<span style="left:764.00px;top:974.60px;font-size:12px;line-height:17px;color:#f8f8f8;letter-spacing:1.30px;">mm</span>
<span style="left:881.40px;top:943.60px;font-size:12px;line-height:17px;color:#f8f8f8;letter-spacing:0.83px;">w0</span>
<span style="left:954.18px;top:943.60px;font-size:12px;line-height:17px;color:#f8f8f8;letter-spacing:0.18px;">0.0939</span>
<span style="left:997.40px;top:943.60px;font-size:12px;line-height:17px;color:#f8f8f8;letter-spacing:1.30px;">mm</span>
<span style="left:881.40px;top:974.60px;font-size:12px;line-height:17px;color:#f8f8f8;letter-spacing:0.47px;">Divergence</span>
<span style="left:954.18px;top:974.60px;font-size:12px;line-height:17px;color:#f8f8f8;letter-spacing:0.18px;">8.6544</span>
<span style="left:997.40px;top:974.60px;font-size:12px;line-height:17px;color:#f8f8f8;letter-spacing:1.02px;">mrad</span>
<span style="left:1161.40px;top:567.20px;font-size:13px;line-height:18px;color:#fff;letter-spacing:0.32px;font-weight:bold;">Modal Coefficients</span>
<span style="left:1157.00px;top:605.90px;font-size:12px;line-height:17px;color:#f8f8f8;letter-spacing:0.83px;">Max auto</span>
<span style="left:1232.50px;top:641.60px;font-size:12px;line-height:17px;color:#f8f8f8;letter-spacing:1.00px;">Name</span>
<span style="left:1521.99px;top:641.60px;font-size:12px;line-height:17px;color:#f8f8f8;letter-spacing:0.59px;">values (µm)</span>
<span style="left:1712.73px;top:641.60px;font-size:12px;line-height:17px;color:#f8f8f8;letter-spacing:0.66px;">Actions</span>
<div style="left:0;top:0;width:1920px;height:998px;overflow:hidden;position:absolute">
<span style="left:1142.20px;top:672.00px;font-size:12px;line-height:17px;color:#f8f8f8;letter-spacing:0.28px;">Z01</span>
<span style="left:1169.60px;top:672.00px;font-size:12px;line-height:17px;color:#f8f8f8;letter-spacing:0.22px;">Tilt 0°</span>
<span style="left:1350.47px;top:672.00px;font-size:12px;line-height:17px;color:#f8f8f8;letter-spacing:0.24px;">0.0000</span>
<span style="left:1142.20px;top:701.00px;font-size:12px;line-height:17px;color:#f8f8f8;letter-spacing:0.28px;">Z02</span>
<span style="left:1169.60px;top:701.00px;font-size:12px;line-height:17px;color:#f8f8f8;letter-spacing:0.23px;">Tilt 90°</span>
<span style="left:1350.47px;top:701.00px;font-size:12px;line-height:17px;color:#f8f8f8;letter-spacing:0.24px;">0.0000</span>
<span style="left:1142.20px;top:730.00px;font-size:12px;line-height:17px;color:#f8f8f8;letter-spacing:0.28px;">Z03</span>
<span style="left:1169.60px;top:730.00px;font-size:12px;line-height:17px;color:#f8f8f8;letter-spacing:0.33px;">Focus</span>
<span style="left:1350.47px;top:730.00px;font-size:12px;line-height:17px;color:#f8f8f8;letter-spacing:0.24px;">0.0000</span>
<span style="left:1142.20px;top:759.00px;font-size:12px;line-height:17px;color:#f8f8f8;letter-spacing:0.28px;">Z04</span>
<span style="left:1169.60px;top:759.00px;font-size:12px;line-height:17px;color:#f8f8f8;letter-spacing:0.25px;">Astig. 0°</span>
<span style="left:1350.47px;top:759.00px;font-size:12px;line-height:17px;color:#f8f8f8;letter-spacing:0.24px;">0.0266</span>
<span style="left:1142.20px;top:788.00px;font-size:12px;line-height:17px;color:#f8f8f8;letter-spacing:0.28px;">Z05</span>
<span style="left:1169.60px;top:788.00px;font-size:12px;line-height:17px;color:#f8f8f8;letter-spacing:0.26px;">Astig. 45°</span>
<span style="left:1350.47px;top:788.00px;font-size:12px;line-height:17px;color:#f8f8f8;letter-spacing:0.24px;">0.0123</span>
<span style="left:1142.20px;top:817.00px;font-size:12px;line-height:17px;color:#f8f8f8;letter-spacing:0.28px;">Z06</span>
<span style="left:1169.60px;top:817.00px;font-size:12px;line-height:17px;color:#f8f8f8;letter-spacing:0.33px;">Coma 0°</span>
<span style="left:1350.47px;top:817.00px;font-size:12px;line-height:17px;color:#f8f8f8;letter-spacing:0.24px;">0.0002</span>
<span style="left:1142.20px;top:846.00px;font-size:12px;line-height:17px;color:#f8f8f8;letter-spacing:0.28px;">Z07</span>
<span style="left:1169.60px;top:846.00px;font-size:12px;line-height:17px;color:#f8f8f8;letter-spacing:0.33px;">Coma 90°</span>
<span style="left:1346.31px;top:846.00px;font-size:12px;line-height:17px;color:#f8f8f8;letter-spacing:0.23px;">-0.0031</span>
<span style="left:1142.20px;top:875.00px;font-size:12px;line-height:17px;color:#f8f8f8;letter-spacing:0.28px;">Z08</span>
<span style="left:1169.60px;top:875.00px;font-size:12px;line-height:17px;color:#f8f8f8;letter-spacing:0.28px;">Spherical</span>
<span style="left:1350.47px;top:875.00px;font-size:12px;line-height:17px;color:#f8f8f8;letter-spacing:0.24px;">0.0032</span>
<span style="left:1142.20px;top:904.00px;font-size:12px;line-height:17px;color:#f8f8f8;letter-spacing:0.28px;">Z09</span>
<span style="left:1169.60px;top:904.00px;font-size:12px;line-height:17px;color:#f8f8f8;letter-spacing:0.24px;">Trefoil 0°</span>
<span style="left:1346.31px;top:904.00px;font-size:12px;line-height:17px;color:#f8f8f8;letter-spacing:0.23px;">-0.0031</span>
<span style="left:1142.20px;top:933.00px;font-size:12px;line-height:17px;color:#f8f8f8;letter-spacing:0.28px;">Z10</span>
<span style="left:1166.60px;top:933.00px;font-size:12px;line-height:17px;color:#f8f8f8;letter-spacing:0.25px;">Trefoil 90°</span>
<span style="left:1346.31px;top:933.00px;font-size:12px;line-height:17px;color:#f8f8f8;letter-spacing:0.23px;">-0.0121</span>
<span style="left:1142.20px;top:962.00px;font-size:12px;line-height:17px;color:#f8f8f8;letter-spacing:0.26px;">Z11</span>
<span style="left:1166.60px;top:962.00px;font-size:12px;line-height:17px;color:#f8f8f8;letter-spacing:0.25px;">5th Astig. 0°</span>
<span style="left:1346.31px;top:962.00px;font-size:12px;line-height:17px;color:#f8f8f8;letter-spacing:0.23px;">-0.0055</span>
<span style="left:1142.20px;top:991.00px;font-size:12px;line-height:17px;color:#f8f8f8;letter-spacing:0.28px;">Z12</span>
<span style="left:1166.60px;top:991.00px;font-size:12px;line-height:17px;color:#f8f8f8;letter-spacing:0.25px;">5th Astig. 45°</span>
<span style="left:1350.47px;top:991.00px;font-size:12px;line-height:17px;color:#f8f8f8;letter-spacing:0.24px;">0.0004</span>
</div>
<span style="left:13.40px;top:1021.90px;font-size:12px;line-height:17px;color:#f8f8f8;letter-spacing:0.08px;">HAS FILE</span>
<span style="left:138.40px;top:1021.90px;font-size:12px;line-height:17px;color:#f8f8f8;letter-spacing:-0.17px;">IDLE</span>
<span style="left:230.40px;top:1021.90px;font-size:12px;line-height:17px;color:#f8f8f8;letter-spacing:-0.70px;">REC</span>
<span style="left:290.40px;top:1021.90px;font-size:12px;line-height:17px;color:#f8f8f8;letter-spacing:0.83px;">Mask</span>
<span style="left:357.40px;top:1021.90px;font-size:12px;line-height:17px;color:#f8f8f8;letter-spacing:0.70px;">Frequency</span>
<span style="left:440.40px;top:1021.90px;font-size:12px;line-height:17px;color:#f8f8f8;letter-spacing:0.22px;">0.0 Hz</span>
<span style="left:491.40px;top:1021.90px;font-size:12px;line-height:17px;color:#f8f8f8;letter-spacing:0.83px;">Saturation</span>
<span style="left:565.40px;top:1021.90px;font-size:12px;line-height:17px;color:#f8f8f8;letter-spacing:0.14px;">100.0 %</span>
<span style="left:625.40px;top:1021.90px;font-size:12px;line-height:17px;color:#f8f8f8;letter-spacing:0.69px;">Spot tracker</span>
<span style="left:735.40px;top:1021.90px;font-size:12px;line-height:17px;color:#f8f8f8;letter-spacing:0.75px;">Lift</span>
<span style="left:791.40px;top:1021.90px;font-size:12px;line-height:17px;color:#f8f8f8;letter-spacing:0.55px;">bb4913_test.has</span>
</div></body></html>
